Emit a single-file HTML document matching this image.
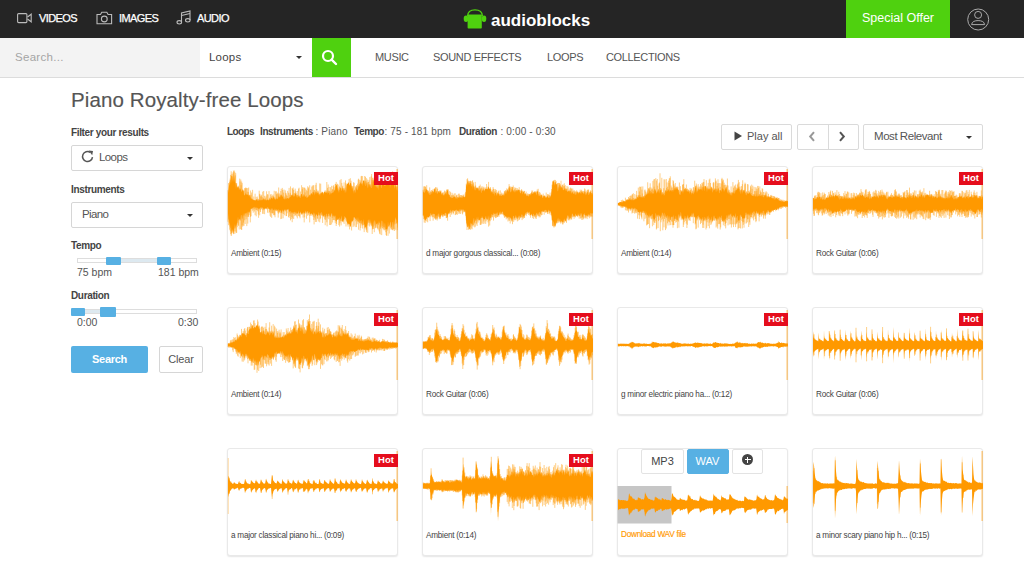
<!DOCTYPE html>
<html><head><meta charset="utf-8">
<style>
*{margin:0;padding:0;box-sizing:border-box}
html,body{width:1024px;height:565px;overflow:hidden;background:#fff;font-family:"Liberation Sans",sans-serif;position:relative}
.abs{position:absolute;white-space:nowrap}
#top{position:absolute;left:0;top:0;width:1024px;height:38px;background:#252525}
.tn{position:absolute;top:10.5px;color:#fff;font-size:11px;line-height:14px;letter-spacing:-0.6px;-webkit-text-stroke:0.25px #fff}
#logo{position:absolute;left:491px;top:9.5px;color:#fff;font-size:17px;font-weight:bold;line-height:22px}
#offer{position:absolute;left:846px;top:0;width:104px;height:38px;background:#4fd10f;color:#fff;font-size:12.5px;line-height:36px;text-align:center}
#srow{position:absolute;left:0;top:38px;width:1024px;height:40px;border-bottom:1px solid #dcdcdc;background:#fff}
#sinput{position:absolute;left:0;top:0;width:200px;height:39px;background:#f3f3f3;color:#a5a5a5;font-size:11.5px;line-height:39px;padding-left:15px;letter-spacing:0.3px}
#ssel{position:absolute;left:209px;top:0;height:39px;color:#444;font-size:11.5px;line-height:39px;letter-spacing:0.2px}
#sbtn{position:absolute;left:312px;top:0;width:39px;height:39px;background:#4fd10f}
.nav{position:absolute;top:12px;color:#555;font-size:11px;line-height:14px;letter-spacing:-0.35px}
.caret{position:absolute;width:0;height:0;border-left:3px solid transparent;border-right:3px solid transparent;border-top:3px solid #333}
#title{position:absolute;left:71px;top:88px;color:#555;font-size:20.5px;line-height:24px;letter-spacing:0.1px;-webkit-text-stroke:0.15px #555}
.h{position:absolute;left:71px;color:#444;font-size:10px;font-weight:bold;line-height:12px;letter-spacing:-0.35px}
.sel{position:absolute;left:71px;width:132px;height:26px;border:1px solid #d6d6d6;border-radius:2px;background:#fff}
.sel span{position:absolute;top:4px;font-size:11.5px;line-height:14px;color:#555;letter-spacing:-0.6px}
.track{position:absolute;height:5px;border:1px solid #ddd;background:#fff}
.rng{position:absolute;height:3px;background:#dde9f0}
.hdl{position:absolute;height:8px;background:#57b0e3;border-radius:1px}
.sv{position:absolute;font-size:10.5px;line-height:12px;color:#555}
.btn{position:absolute;height:27px;border-radius:2px;font-size:12px;line-height:26px;text-align:center}
.bcx{position:absolute;top:126px;font-size:10px;line-height:12px;color:#555;white-space:nowrap}
.bcx b{color:#444;letter-spacing:-0.4px}
.tb{position:absolute;top:124px;height:26px;border:1px solid #dadada;border-radius:2px;background:#fff;font-size:11px;line-height:22px;color:#555}
.card{position:absolute;width:171px;height:108px;border-radius:3px;background:#fff;border:1px solid #e9e9e9;box-shadow:0 1px 1.5px rgba(0,0,0,0.10)}
.wf{position:absolute;left:-1px;top:-1px}
.hot{position:absolute;right:-1px;top:5px;width:24.5px;height:13px;background:#e50d1c;color:#fff;font-weight:bold;font-size:9.5px;line-height:11.5px;text-align:center;padding-left:0.5px;letter-spacing:0.1px}
.lbl{position:absolute;left:3px;top:82px;font-size:8.2px;line-height:10px;color:#444;white-space:nowrap;letter-spacing:-0.25px}
.dl{color:#ff9900;-webkit-text-stroke:0.15px #ff9900;top:81px}
.fmt{position:absolute;top:0px;height:25px;border:1px solid #e3e3e3;border-radius:2px;background:#fff;font-size:11px;line-height:23px;text-align:center;color:#444}
.mp3{left:23px;width:43px}
.wav{left:68.5px;width:42px;background:#57b0e3;border-color:#57b0e3;color:#fff}
.plus{left:113.5px;width:31px}
.pl{position:absolute;left:9.5px;top:4px;width:11px;height:11px;border-radius:50%;background:#444}
.pl:before{content:"";position:absolute;left:2.5px;top:4.75px;width:6px;height:1.5px;background:#fff}
.pl:after{content:"";position:absolute;left:4.75px;top:2.5px;width:1.5px;height:6px;background:#fff}
</style></head><body>
<div id="top">
  <!-- video icon -->
  <svg class="abs" style="left:17px;top:12px" width="16" height="12" viewBox="0 0 16 12"><rect x="0.6" y="1.6" width="9.3" height="9" rx="1" fill="none" stroke="#bbb" stroke-width="1.1"/><path d="M10.5 5 L14.2 2.2 V9.8 L10.5 7" fill="none" stroke="#bbb" stroke-width="1.1"/></svg>
  <div class="tn" style="left:39px">VIDEOS</div>
  <!-- camera icon -->
  <svg class="abs" style="left:96px;top:11px" width="17" height="14" viewBox="0 0 17 14"><path d="M1 3.5 H4.5 L5.8 1.2 H10.8 L12.1 3.5 H15.6 V12.8 H1 Z" fill="none" stroke="#bbb" stroke-width="1.1"/><circle cx="8.3" cy="8" r="2.9" fill="none" stroke="#bbb" stroke-width="1.1"/></svg>
  <div class="tn" style="left:119px">IMAGES</div>
  <!-- music icon -->
  <svg class="abs" style="left:176px;top:10px" width="16" height="15" viewBox="0 0 16 15"><path d="M5.5 12 V3 L14 1 V10" fill="none" stroke="#bbb" stroke-width="1.1"/><path d="M5.5 5.5 L14 3.5" stroke="#bbb" stroke-width="1.1"/><ellipse cx="3.3" cy="12.3" rx="2.3" ry="1.7" fill="none" stroke="#bbb" stroke-width="1.1"/><ellipse cx="11.8" cy="10.3" rx="2.3" ry="1.7" fill="none" stroke="#bbb" stroke-width="1.1"/></svg>
  <div class="tn" style="left:197px">AUDIO</div>
  <!-- logo -->
  <svg class="abs" style="left:460px;top:6px" width="30" height="26" viewBox="0 0 30 26"><path d="M7.6,10 C7.8,5.5 10.8,3.9 15,3.9 C19.2,3.9 22.2,5.5 22.4,10" fill="none" stroke="#4fd10f" stroke-width="1.4"/><ellipse cx="6" cy="12.7" rx="2.3" ry="3.3" fill="#4fd10f"/><ellipse cx="24" cy="12.7" rx="2.3" ry="3.3" fill="#4fd10f"/><rect x="7.6" y="8.6" width="14.2" height="13.9" rx="0.8" fill="#4fd10f"/></svg>
  <div id="logo">audioblocks</div>
  <div id="offer">Special Offer</div>
  <svg class="abs" style="left:966px;top:8px" width="24" height="24" viewBox="0 0 24 24"><circle cx="12.2" cy="11.5" r="10.5" fill="none" stroke="#aaa" stroke-width="1"/><circle cx="12.1" cy="6.9" r="3.5" fill="none" stroke="#aaa" stroke-width="1"/><path d="M5.6,16.6 C5.9,13.4 9,12.6 12.1,12.6 C15.2,12.6 18.3,13.4 18.6,16.6 Z" fill="none" stroke="#aaa" stroke-width="1"/></svg>
</div>
<div id="srow">
  <div id="sinput">Search...</div>
  <div id="ssel">Loops</div>
  <div class="caret" style="left:296px;top:18px"></div>
  <div id="sbtn"><svg class="abs" style="left:9px;top:11px" width="18" height="18" viewBox="0 0 18 18"><circle cx="7" cy="7" r="5" fill="none" stroke="#fff" stroke-width="2.2"/><path d="M10.6 10.6 L15 15" stroke="#fff" stroke-width="2.4" stroke-linecap="round"/></svg></div>
  <div class="nav" style="left:375px">MUSIC</div>
  <div class="nav" style="left:433px">SOUND EFFECTS</div>
  <div class="nav" style="left:547px">LOOPS</div>
  <div class="nav" style="left:606px">COLLECTIONS</div>
</div>

<div id="title">Piano Royalty-free Loops</div>
<div class="h" style="top:127px">Filter your results</div>
<div class="sel" style="top:145px"><svg class="abs" style="left:8.8px;top:3.9px" width="13" height="13" viewBox="0 0 13 13"><path d="M11.5,7.2 A5,5 0 1 1 9.2,2.3" fill="none" stroke="#555" stroke-width="1.5"/><path d="M7.6,0.6 L12,0.9 L11.2,5.2 Z" fill="#555"/></svg><span style="left:27px">Loops</span><div class="caret" style="left:115px;top:11px"></div></div>
<div class="h" style="top:184px">Instruments</div>
<div class="sel" style="top:202px"><span style="left:10px">Piano</span><div class="caret" style="left:115px;top:11px"></div></div>
<div class="h" style="top:240px">Tempo</div>
<div class="track" style="left:77px;top:258px;width:120px"></div>
<div class="rng" style="left:121px;top:259px;width:36px"></div>
<div class="hdl" style="left:106px;top:257px;width:15px"></div>
<div class="hdl" style="left:157px;top:257px;width:14px"></div>
<div class="sv" style="left:77px;top:266px">75 bpm</div>
<div class="sv" style="left:158px;top:266px">181 bpm</div>
<div class="h" style="top:290px">Duration</div>
<div class="track" style="left:71px;top:309px;width:126px"></div>
<div class="rng" style="left:85px;top:310px;width:15px"></div>
<div class="hdl" style="left:70.5px;top:308px;width:14.5px"></div>
<div class="hdl" style="left:99.5px;top:306.5px;width:16.5px;height:10px"></div>
<div class="sv" style="left:77px;top:316px">0:00</div>
<div class="sv" style="left:178px;top:316px">0:30</div>
<div class="btn" style="left:71px;top:346px;width:77px;background:#57b0e3;color:#fff;font-weight:bold;font-size:11px;letter-spacing:-0.3px">Search</div>
<div class="btn" style="left:159px;top:346px;width:44px;border:1px solid #d6d6d6;color:#555;line-height:24px;font-size:11px;letter-spacing:-0.2px">Clear</div>

<div class="bcx" style="left:227px"><b style="letter-spacing:-0.6px">Loops</b></div>
<div class="bcx" style="left:260px"><b>Instruments</b></div><div class="bcx" style="left:315.5px;letter-spacing:0.15px">: Piano</div>
<div class="bcx" style="left:354px"><b>Tempo</b></div><div class="bcx" style="left:384.5px;letter-spacing:0.15px">: 75 - 181 bpm</div>
<div class="bcx" style="left:459px"><b>Duration</b></div><div class="bcx" style="left:500.5px;letter-spacing:0.15px">: 0:00 - 0:30</div>
<div class="tb" style="left:721px;width:71px"><svg class="abs" style="left:12px;top:5.8px" width="9" height="10" viewBox="0 0 9 10"><path d="M0.5 0.5 L8 5 L0.5 9.5 Z" fill="#444"/></svg><span style="position:absolute;left:25px">Play all</span></div>
<div class="tb" style="left:797px;width:62px"><div style="position:absolute;left:29.5px;top:0;width:1px;height:24px;background:#dadada"></div><svg class="abs" style="left:9.5px;top:5.5px" width="8" height="11" viewBox="0 0 8 11"><path d="M6 1.2 L2.2 5.5 L6 9.8" fill="none" stroke="#999" stroke-width="2"/></svg><svg class="abs" style="left:40px;top:5.5px" width="8" height="11" viewBox="0 0 8 11"><path d="M2 1.2 L5.8 5.5 L2 9.8" fill="none" stroke="#555" stroke-width="2"/></svg></div>
<div class="tb" style="left:863px;width:120px"><span style="position:absolute;left:10px;font-size:11.5px;letter-spacing:-0.45px">Most Relevant</span><div class="caret" style="left:102px;top:11px"></div></div>

<div class="card" style="left:227px;top:166px"><svg class="wf" width="171" height="109" viewBox="0 0 171 109"><g transform="translate(1,38)"><path d="M0.0,-13.8V17.8M0.6,-21.0V21.2M1.3,-20.4V19.2M1.7,-22.2V25.7M2.3,-24.2V27.3M2.6,-29.1V30.2M3.2,-32.7V31.9M3.6,-28.0V29.2M4.0,-30.1V26.4M4.7,-27.7V27.6M5.1,-31.6V29.0M5.7,-33.2V26.9M6.1,-33.6V27.5M6.8,-32.2V29.9M7.3,-28.6V21.6M7.7,-30.9V27.5M8.2,-20.9V29.0M8.7,-20.8V28.8M9.2,-17.1V23.2M9.7,-17.2V19.3M10.2,-16.5V20.9M10.6,-17.5V22.0M11.2,-16.0V25.5M11.7,-25.4V15.6M12.1,-22.5V16.9M12.8,-24.5V25.0M13.1,-18.8V25.6M13.7,-22.5V26.0M14.1,-20.9V21.3M14.7,-15.1V22.7M15.2,-11.7V21.6M15.6,-13.4V18.6M16.0,-13.3V21.9M16.7,-15.9V16.3M17.2,-15.6V20.0M17.8,-16.6V12.6M18.1,-15.8V15.3M18.8,-16.0V22.1M19.2,-12.4V12.7M19.8,-15.8V19.6M20.3,-11.9V12.8M20.7,-16.5V12.7M21.1,-9.1V11.0M21.6,-8.6V9.2M22.3,-8.5V18.4M22.6,-13.5V12.8M23.1,-9.2V12.2M23.6,-11.5V5.2M24.0,-5.6V4.6M24.6,-14.2V6.7M25.2,-4.1V8.7M25.8,-7.5V5.6M26.3,-3.8V7.5M26.6,-3.8V4.7M27.1,-10.3V11.2M27.7,-3.8V5.8M28.2,-7.1V12.3M28.5,-4.1V6.0M29.3,-7.5V6.4M29.8,-5.4V7.3M30.3,-4.9V10.5M30.6,-4.0V13.8M31.2,-13.3V5.2M31.7,-10.2V11.3M32.1,-9.4V6.2M32.5,-7.6V8.0M33.3,-8.2V4.3M33.6,-9.3V5.1M34.1,-7.0V5.8M34.7,-12.3V9.8M35.2,-6.1V9.9M35.7,-13.0V6.3M36.1,-5.1V5.2M36.6,-8.2V10.2M37.2,-5.2V5.1M37.7,-6.5V4.1M38.0,-8.3V4.1M38.6,-12.7V5.3M39.2,-3.6V5.1M39.5,-9.8V8.7M40.0,-9.5V4.2M40.6,-4.3V4.2M41.0,-12.9V9.1M41.6,-5.9V8.0M42.1,-6.7V11.8M42.7,-9.5V13.0M43.1,-9.9V8.8M43.7,-7.7V13.9M44.2,-5.8V9.1M44.6,-8.5V9.6M45.1,-9.6V9.0M45.6,-7.9V10.9M46.2,-13.2V11.5M46.7,-6.9V10.8M47.0,-5.7V13.3M47.6,-12.6V6.8M48.3,-12.7V7.3M48.6,-9.8V6.7M49.2,-10.4V5.9M49.8,-11.4V8.6M50.2,-9.7V13.6M50.7,-16.5V9.7M51.2,-10.7V7.6M51.7,-7.6V7.9M52.0,-9.6V8.9M52.8,-13.0V15.1M53.2,-15.2V8.8M53.7,-8.4V14.8M54.3,-16.1V9.5M54.7,-14.1V7.4M55.1,-8.4V14.3M55.6,-11.4V10.1M56.0,-14.5V6.8M56.7,-7.4V11.3M57.3,-13.6V7.5M57.8,-11.2V5.6M58.1,-10.5V12.1M58.6,-8.7V12.0M59.2,-8.2V9.3M59.7,-13.1V6.0M60.1,-5.7V5.8M60.6,-11.3V13.0M61.1,-16.1V13.9M61.8,-9.3V11.9M62.2,-11.1V9.6M62.5,-17.6V16.4M63.2,-9.1V15.0M63.8,-9.1V12.9M64.2,-16.0V18.2M64.7,-14.9V14.4M65.2,-16.5V9.7M65.7,-14.0V15.0M66.1,-10.9V9.8M66.8,-10.8V12.1M67.2,-15.4V10.9M67.7,-12.4V11.5M68.1,-11.0V9.5M68.7,-8.7V12.5M69.3,-12.9V14.4M69.6,-9.1V9.9M70.1,-8.4V8.3M70.6,-15.3V11.8M71.1,-16.3V12.2M71.7,-8.5V12.7M72.0,-7.8V14.3M72.6,-12.5V8.3M73.2,-9.3V10.5M73.6,-18.8V10.4M74.3,-14.8V10.6M74.7,-16.8V9.7M75.1,-16.6V13.6M75.7,-9.8V8.7M76.2,-16.1V18.4M76.7,-16.5V13.3M77.1,-11.6V8.3M77.8,-15.4V9.9M78.3,-13.9V8.8M78.5,-8.5V14.7M79.1,-12.9V9.2M79.7,-17.7V11.8M80.3,-15.6V11.1M80.6,-16.7V9.0M81.2,-8.9V9.7M81.7,-18.7V18.4M82.0,-9.3V12.0M82.6,-14.3V10.3M83.2,-10.6V11.9M83.8,-17.3V10.2M84.3,-18.4V10.9M84.5,-11.8V10.4M85.2,-18.6V12.9M85.8,-18.8V16.0M86.1,-13.9V20.4M86.7,-14.1V13.6M87.2,-11.4V15.5M87.8,-19.2V18.0M88.2,-21.2V17.9M88.7,-14.7V10.3M89.3,-12.3V14.2M89.7,-13.3V15.1M90.3,-13.4V17.5M90.5,-11.6V10.8M91.3,-10.3V11.7M91.7,-20.6V18.3M92.2,-10.2V15.2M92.7,-20.3V14.2M93.2,-10.3V10.8M93.8,-10.4V11.6M94.2,-11.1V11.6M94.6,-11.9V18.9M95.3,-10.5V12.0M95.8,-10.8V13.3M96.1,-10.5V12.2M96.7,-10.9V15.4M97.2,-13.8V21.2M97.6,-11.8V15.8M98.0,-12.4V11.8M98.8,-22.0V18.3M99.1,-12.3V22.4M99.5,-16.2V12.2M100.2,-19.5V12.0M100.7,-13.3V15.2M101.1,-17.1V12.6M101.6,-13.2V21.0M102.1,-11.5V11.5M102.5,-16.8V21.0M103.1,-12.9V11.2M103.6,-18.2V20.5M104.2,-14.6V14.0M104.6,-14.7V18.5M105.1,-18.2V16.0M105.7,-18.8V16.1M106.1,-16.8V12.3M106.6,-14.3V16.1M107.2,-20.1V19.2M107.6,-20.1V17.2M108.2,-22.1V22.0M108.6,-17.5V20.0M109.2,-16.2V15.6M109.5,-20.2V15.7M110.2,-19.4V15.9M110.8,-15.3V21.1M111.2,-16.6V16.0M111.6,-17.6V22.6M112.0,-23.8V19.3M112.7,-16.1V17.3M113.1,-24.9V21.4M113.8,-21.1V17.0M114.1,-15.5V17.4M114.7,-18.3V16.5M115.2,-15.8V18.3M115.6,-15.6V14.2M116.1,-21.6V19.9M116.7,-14.1V15.0M117.1,-16.3V16.3M117.5,-23.6V13.9M118.0,-20.8V22.5M118.5,-19.5V17.5M119.0,-17.7V17.7M119.6,-19.2V19.1M120.1,-20.0V22.7M120.6,-21.2V19.0M121.1,-25.0V19.7M121.6,-19.1V25.4M122.3,-25.8V19.2M122.5,-20.4V22.7M123.1,-23.3V18.6M123.6,-17.9V26.5M124.2,-17.7V17.4M124.6,-15.7V16.7M125.1,-17.7V23.1M125.7,-21.9V15.9M126.1,-21.0V21.7M126.8,-13.9V13.8M127.2,-17.7V23.1M127.8,-16.4V17.3M128.1,-17.6V14.5M128.5,-19.0V23.1M129.2,-18.3V20.3M129.5,-20.4V16.8M130.2,-24.4V18.1M130.6,-25.3V25.7M131.3,-18.0V18.6M131.7,-24.2V19.1M132.1,-22.1V26.5M132.8,-23.5V23.9M133.1,-27.8V19.0M133.6,-28.1V19.8M134.1,-20.7V21.3M134.6,-27.9V24.5M135.0,-19.6V21.1M135.8,-20.7V21.2M136.2,-23.6V28.1M136.7,-28.0V24.4M137.1,-22.7V23.3M137.5,-27.2V21.6M138.1,-23.3V21.6M138.6,-25.8V28.2M139.0,-20.9V21.9M139.7,-24.4V28.8M140.0,-21.9V18.9M140.5,-22.1V18.5M141.0,-23.8V21.6M141.8,-26.9V22.6M142.1,-19.1V19.0M142.7,-19.7V20.3M143.1,-27.6V21.3M143.6,-29.9V22.3M144.2,-23.9V30.0M144.6,-26.2V25.2M145.2,-26.3V22.6M145.6,-24.4V24.9M146.3,-23.4V28.2M146.8,-26.6V21.5M147.2,-23.6V24.3M147.7,-26.9V23.8M148.1,-23.3V23.4M148.7,-23.2V18.6M149.2,-20.9V24.1M149.7,-17.7V24.7M150.1,-20.3V25.7M150.8,-28.7V18.6M151.1,-19.4V27.4M151.5,-22.5V29.7M152.3,-20.7V30.5M152.6,-29.4V24.9M153.1,-23.1V23.4M153.7,-25.9V31.1M154.2,-22.8V21.9M154.5,-22.1V24.1M155.2,-27.5V25.4M155.7,-31.2V23.2M156.2,-25.7V26.3M156.6,-31.8V23.4M157.1,-26.4V25.8M157.8,-24.0V28.2M158.1,-27.7V31.1M158.5,-24.4V31.9M159.1,-23.5V23.3M159.6,-26.1V26.6M160.0,-25.2V31.8M160.7,-22.1V22.1M161.3,-22.1V29.5M161.6,-30.5V21.0M162.0,-20.9V22.8M162.6,-20.5V24.3M163.1,-22.5V25.8M163.6,-21.6V24.8M164.1,-25.6V25.6M164.6,-32.6V26.1M165.2,-23.1V26.4M165.6,-23.1V24.9M166.1,-20.5V25.1M166.6,-29.7V27.0M167.1,-20.0V20.2M167.7,-19.8V25.8M168.3,-17.4V19.3M168.7,-17.4V19.5M169.3,-23.1V26.2M169.8,-17.5V23.6M170.1,-19.6V21.2" stroke="#ff9900" stroke-width="0.6" stroke-opacity="0.8" fill="none"/><path d="M0.0,-11.0 L0.5,-14.4 L1.0,-18.3 L1.5,-19.3 L2.0,-26.4 L2.5,-23.4 L3.0,-20.0 L3.5,-28.9 L4.0,-27.5 L4.5,-22.0 L5.0,-32.7 L5.5,-26.1 L6.0,-21.6 L6.5,-28.7 L7.0,-21.5 L7.5,-21.1 L8.0,-14.5 L8.5,-20.7 L9.0,-18.5 L9.5,-16.6 L10.0,-15.7 L10.5,-19.0 L11.0,-13.5 L11.5,-15.5 L12.0,-14.2 L12.5,-15.7 L13.0,-13.8 L13.5,-11.7 L14.0,-13.5 L14.5,-14.1 L15.0,-13.5 L15.5,-13.5 L16.0,-9.0 L16.5,-8.5 L17.0,-9.7 L17.5,-11.5 L18.0,-8.4 L18.5,-10.5 L19.0,-9.0 L19.5,-9.6 L20.0,-9.4 L20.5,-8.7 L21.0,-7.5 L21.5,-9.7 L22.0,-6.2 L22.5,-7.6 L23.0,-4.4 L23.5,-5.7 L24.0,-5.0 L24.5,-4.3 L25.0,-4.9 L25.5,-3.8 L26.0,-3.9 L26.5,-3.6 L27.0,-3.6 L27.5,-3.2 L28.0,-4.4 L28.5,-4.5 L29.0,-4.8 L29.5,-3.8 L30.0,-3.1 L30.5,-3.1 L31.0,-4.9 L31.5,-3.3 L32.0,-4.8 L32.5,-3.8 L33.0,-3.5 L33.5,-4.3 L34.0,-3.5 L34.5,-4.6 L35.0,-4.4 L35.5,-5.5 L36.0,-3.6 L36.5,-4.2 L37.0,-5.0 L37.5,-3.6 L38.0,-4.6 L38.5,-3.4 L39.0,-3.8 L39.5,-4.6 L40.0,-4.4 L40.5,-3.5 L41.0,-3.8 L41.5,-4.9 L42.0,-4.5 L42.5,-4.5 L43.0,-5.5 L43.5,-6.5 L44.0,-5.7 L44.5,-4.4 L45.0,-7.1 L45.5,-6.8 L46.0,-6.0 L46.5,-5.2 L47.0,-4.6 L47.5,-4.5 L48.0,-5.1 L48.5,-5.3 L49.0,-6.6 L49.5,-4.7 L50.0,-5.3 L50.5,-8.4 L51.0,-6.5 L51.5,-7.3 L52.0,-6.3 L52.5,-8.6 L53.0,-9.3 L53.5,-9.6 L54.0,-7.0 L54.5,-7.4 L55.0,-7.6 L55.5,-5.0 L56.0,-5.6 L56.5,-5.6 L57.0,-4.1 L57.5,-6.6 L58.0,-4.4 L58.5,-5.8 L59.0,-5.6 L59.5,-6.0 L60.0,-5.7 L60.5,-5.2 L61.0,-5.6 L61.5,-6.5 L62.0,-7.6 L62.5,-7.1 L63.0,-7.2 L63.5,-9.6 L64.0,-7.7 L64.5,-9.1 L65.0,-9.7 L65.5,-7.3 L66.0,-7.8 L66.5,-7.6 L67.0,-9.9 L67.5,-10.3 L68.0,-10.3 L68.5,-8.4 L69.0,-6.3 L69.5,-6.7 L70.0,-9.8 L70.5,-7.1 L71.0,-7.9 L71.5,-6.9 L72.0,-6.3 L72.5,-6.0 L73.0,-9.7 L73.5,-10.0 L74.0,-9.6 L74.5,-7.3 L75.0,-7.4 L75.5,-9.5 L76.0,-6.6 L76.5,-9.5 L77.0,-8.1 L77.5,-7.5 L78.0,-6.8 L78.5,-5.8 L79.0,-7.5 L79.5,-6.3 L80.0,-6.8 L80.5,-7.5 L81.0,-8.3 L81.5,-9.5 L82.0,-6.9 L82.5,-9.5 L83.0,-9.4 L83.5,-11.1 L84.0,-10.2 L84.5,-8.9 L85.0,-10.8 L85.5,-12.8 L86.0,-11.5 L86.5,-8.5 L87.0,-13.0 L87.5,-12.2 L88.0,-9.6 L88.5,-12.2 L89.0,-11.2 L89.5,-10.5 L90.0,-11.8 L90.5,-10.2 L91.0,-8.7 L91.5,-10.3 L92.0,-7.8 L92.5,-11.2 L93.0,-10.2 L93.5,-11.4 L94.0,-12.7 L94.5,-11.0 L95.0,-12.5 L95.5,-8.5 L96.0,-12.2 L96.5,-11.8 L97.0,-13.4 L97.5,-10.7 L98.0,-11.3 L98.5,-10.9 L99.0,-14.8 L99.5,-9.9 L100.0,-11.5 L100.5,-10.7 L101.0,-13.3 L101.5,-9.9 L102.0,-8.8 L102.5,-11.9 L103.0,-9.5 L103.5,-11.1 L104.0,-11.1 L104.5,-11.3 L105.0,-11.7 L105.5,-11.4 L106.0,-14.2 L106.5,-13.5 L107.0,-12.5 L107.5,-17.4 L108.0,-18.0 L108.5,-19.5 L109.0,-19.2 L109.5,-15.3 L110.0,-13.6 L110.5,-13.7 L111.0,-10.9 L111.5,-14.3 L112.0,-14.1 L112.5,-16.4 L113.0,-16.3 L113.5,-13.1 L114.0,-13.8 L114.5,-18.0 L115.0,-14.7 L115.5,-13.8 L116.0,-13.0 L116.5,-16.3 L117.0,-10.5 L117.5,-13.9 L118.0,-11.1 L118.5,-15.2 L119.0,-20.0 L119.5,-20.1 L120.0,-21.5 L120.5,-21.4 L121.0,-20.3 L121.5,-18.0 L122.0,-20.0 L122.5,-21.3 L123.0,-21.0 L123.5,-18.6 L124.0,-14.8 L124.5,-18.8 L125.0,-12.3 L125.5,-13.9 L126.0,-10.1 L126.5,-15.1 L127.0,-12.8 L127.5,-10.7 L128.0,-17.7 L128.5,-14.1 L129.0,-15.9 L129.5,-13.4 L130.0,-14.5 L130.5,-19.8 L131.0,-16.4 L131.5,-20.3 L132.0,-20.2 L132.5,-21.8 L133.0,-20.0 L133.5,-19.6 L134.0,-21.8 L134.5,-17.5 L135.0,-23.6 L135.5,-22.9 L136.0,-24.0 L136.5,-18.5 L137.0,-23.5 L137.5,-17.9 L138.0,-18.0 L138.5,-20.3 L139.0,-22.5 L139.5,-17.2 L140.0,-15.4 L140.5,-20.1 L141.0,-19.6 L141.5,-20.0 L142.0,-16.9 L142.5,-18.4 L143.0,-16.1 L143.5,-16.1 L144.0,-25.6 L144.5,-16.3 L145.0,-24.4 L145.5,-22.1 L146.0,-24.2 L146.5,-22.5 L147.0,-19.3 L147.5,-18.6 L148.0,-16.7 L148.5,-18.4 L149.0,-15.6 L149.5,-16.2 L150.0,-20.6 L150.5,-13.6 L151.0,-21.4 L151.5,-17.5 L152.0,-23.1 L152.5,-23.4 L153.0,-16.6 L153.5,-15.7 L154.0,-23.0 L154.5,-20.4 L155.0,-21.9 L155.5,-27.4 L156.0,-18.2 L156.5,-18.0 L157.0,-18.9 L157.5,-17.8 L158.0,-26.2 L158.5,-27.4 L159.0,-22.1 L159.5,-28.2 L160.0,-19.5 L160.5,-26.6 L161.0,-19.7 L161.5,-21.4 L162.0,-15.8 L162.5,-19.6 L163.0,-24.6 L163.5,-22.5 L164.0,-23.6 L164.5,-23.9 L165.0,-26.5 L165.5,-24.8 L166.0,-23.1 L166.5,-14.9 L167.0,-17.5 L167.5,-21.0 L168.0,-16.2 L168.5,-13.3 L169.0,-18.5 L169.5,-13.1 L170.0,-14.0 L170.0,20.2 L169.5,17.4 L169.0,20.0 L168.5,15.5 L168.0,15.5 L167.5,13.0 L167.0,16.6 L166.5,21.6 L166.0,15.2 L165.5,24.2 L165.0,17.7 L164.5,18.6 L164.0,23.3 L163.5,23.1 L163.0,19.9 L162.5,17.4 L162.0,18.8 L161.5,21.0 L161.0,22.4 L160.5,22.8 L160.0,17.4 L159.5,24.5 L159.0,24.9 L158.5,25.2 L158.0,25.5 L157.5,25.0 L157.0,18.6 L156.5,20.7 L156.0,27.3 L155.5,17.5 L155.0,26.1 L154.5,17.7 L154.0,16.5 L153.5,17.0 L153.0,24.3 L152.5,22.2 L152.0,18.2 L151.5,19.4 L151.0,16.5 L150.5,20.2 L150.0,21.4 L149.5,18.5 L149.0,20.2 L148.5,19.5 L148.0,22.3 L147.5,16.5 L147.0,20.2 L146.5,16.3 L146.0,16.7 L145.5,19.2 L145.0,25.9 L144.5,23.4 L144.0,18.4 L143.5,21.8 L143.0,16.9 L142.5,19.3 L142.0,15.0 L141.5,20.0 L141.0,15.1 L140.5,16.9 L140.0,15.4 L139.5,19.8 L139.0,21.3 L138.5,25.2 L138.0,26.7 L137.5,22.5 L137.0,23.7 L136.5,19.7 L136.0,21.2 L135.5,15.0 L135.0,21.1 L134.5,16.5 L134.0,22.5 L133.5,15.9 L133.0,16.4 L132.5,16.7 L132.0,20.8 L131.5,15.2 L131.0,17.7 L130.5,17.2 L130.0,12.9 L129.5,18.8 L129.0,12.9 L128.5,16.2 L128.0,15.8 L127.5,14.2 L127.0,14.8 L126.5,12.9 L126.0,13.1 L125.5,13.8 L125.0,17.4 L124.5,16.2 L124.0,18.5 L123.5,16.3 L123.0,21.5 L122.5,21.9 L122.0,22.9 L121.5,20.1 L121.0,20.2 L120.5,20.4 L120.0,19.0 L119.5,21.6 L119.0,17.6 L118.5,15.1 L118.0,13.9 L117.5,12.7 L117.0,13.3 L116.5,11.8 L116.0,15.3 L115.5,16.5 L115.0,18.1 L114.5,17.6 L114.0,16.3 L113.5,11.6 L113.0,14.3 L112.5,15.0 L112.0,17.0 L111.5,13.3 L111.0,14.1 L110.5,15.0 L110.0,15.1 L109.5,15.9 L109.0,12.7 L108.5,17.9 L108.0,16.4 L107.5,12.2 L107.0,11.3 L106.5,12.3 L106.0,13.7 L105.5,11.1 L105.0,12.5 L104.5,11.9 L104.0,9.3 L103.5,9.6 L103.0,9.9 L102.5,13.2 L102.0,12.3 L101.5,11.3 L101.0,8.9 L100.5,10.4 L100.0,9.8 L99.5,12.8 L99.0,15.1 L98.5,9.7 L98.0,9.7 L97.5,13.1 L97.0,13.6 L96.5,10.4 L96.0,11.3 L95.5,11.8 L95.0,12.7 L94.5,9.1 L94.0,11.8 L93.5,7.9 L93.0,8.5 L92.5,9.3 L92.0,11.0 L91.5,11.3 L91.0,8.5 L90.5,8.3 L90.0,12.1 L89.5,11.8 L89.0,11.4 L88.5,9.7 L88.0,11.6 L87.5,12.8 L87.0,9.1 L86.5,10.9 L86.0,8.3 L85.5,9.4 L85.0,12.6 L84.5,9.9 L84.0,10.1 L83.5,8.7 L83.0,10.6 L82.5,10.2 L82.0,9.3 L81.5,7.8 L81.0,8.3 L80.5,9.9 L80.0,6.7 L79.5,7.5 L79.0,8.1 L78.5,8.2 L78.0,6.5 L77.5,7.3 L77.0,9.4 L76.5,8.4 L76.0,10.4 L75.5,7.6 L75.0,9.9 L74.5,8.5 L74.0,9.3 L73.5,9.7 L73.0,9.3 L72.5,7.2 L72.0,9.2 L71.5,9.3 L71.0,9.4 L70.5,6.3 L70.0,9.2 L69.5,9.1 L69.0,9.8 L68.5,9.6 L68.0,7.2 L67.5,9.0 L67.0,8.3 L66.5,7.6 L66.0,10.2 L65.5,8.3 L65.0,8.1 L64.5,9.2 L64.0,7.8 L63.5,9.8 L63.0,7.2 L62.5,6.8 L62.0,8.7 L61.5,7.2 L61.0,7.9 L60.5,4.7 L60.0,5.1 L59.5,4.9 L59.0,6.0 L58.5,6.8 L58.0,4.6 L57.5,6.6 L57.0,6.4 L56.5,5.2 L56.0,6.5 L55.5,8.2 L55.0,5.4 L54.5,6.0 L54.0,6.9 L53.5,9.4 L53.0,7.3 L52.5,6.2 L52.0,6.6 L51.5,6.1 L51.0,9.3 L50.5,5.4 L50.0,5.3 L49.5,6.7 L49.0,6.7 L48.5,4.8 L48.0,6.0 L47.5,6.2 L47.0,4.2 L46.5,5.7 L46.0,6.5 L45.5,5.4 L45.0,6.8 L44.5,4.5 L44.0,4.5 L43.5,4.4 L43.0,6.4 L42.5,6.0 L42.0,4.5 L41.5,5.4 L41.0,4.9 L40.5,5.0 L40.0,3.1 L39.5,3.2 L39.0,3.4 L38.5,4.4 L38.0,4.8 L37.5,4.5 L37.0,4.0 L36.5,5.7 L36.0,4.1 L35.5,5.5 L35.0,4.1 L34.5,3.8 L34.0,3.3 L33.5,3.8 L33.0,3.2 L32.5,3.6 L32.0,4.3 L31.5,4.7 L31.0,4.1 L30.5,4.7 L30.0,4.9 L29.5,3.5 L29.0,4.4 L28.5,3.5 L28.0,3.3 L27.5,4.4 L27.0,2.6 L26.5,3.2 L26.0,3.5 L25.5,3.3 L25.0,4.5 L24.5,3.6 L24.0,4.9 L23.5,4.3 L23.0,4.8 L22.5,5.0 L22.0,7.7 L21.5,8.1 L21.0,7.2 L20.5,8.9 L20.0,7.3 L19.5,8.9 L19.0,11.2 L18.5,8.7 L18.0,8.8 L17.5,10.0 L17.0,8.9 L16.5,12.7 L16.0,8.6 L15.5,12.6 L15.0,10.3 L14.5,14.1 L14.0,15.2 L13.5,11.3 L13.0,10.8 L12.5,15.6 L12.0,15.7 L11.5,14.5 L11.0,15.9 L10.5,16.6 L10.0,12.6 L9.5,16.9 L9.0,19.1 L8.5,21.3 L8.0,22.0 L7.5,25.3 L7.0,19.5 L6.5,24.3 L6.0,25.1 L5.5,30.2 L5.0,29.9 L4.5,26.4 L4.0,24.9 L3.5,32.6 L3.0,20.2 L2.5,24.6 L2.0,23.5 L1.5,20.0 L1.0,15.8 L0.5,15.4 L0.0,9.6Z" fill="#ff9900"/></g><rect x="169.6" y="3" width="1" height="70" fill="#ff9900" fill-opacity="0.7"/></svg><div class="hot">Hot</div><div class="lbl">Ambient (0:15)</div></div>
<div class="card" style="left:422px;top:166px"><svg class="wf" width="171" height="109" viewBox="0 0 171 109"><g transform="translate(1,38)"><path d="M0.1,-14.1V11.6M0.7,-17.6V15.1M1.2,-14.8V18.5M1.5,-17.7V13.1M2.2,-17.6V18.9M2.5,-17.1V15.9M3.1,-14.9V14.6M3.7,-18.8V17.4M4.1,-13.4V14.1M4.7,-14.1V18.3M5.0,-12.3V12.8M5.6,-13.1V13.7M6.1,-11.0V13.3M6.7,-16.6V11.2M7.1,-12.2V17.1M7.7,-12.6V12.6M8.3,-13.9V11.2M8.7,-12.0V10.8M9.2,-13.8V13.4M9.6,-12.9V12.7M10.1,-15.1V16.7M10.7,-12.2V13.0M11.3,-14.5V14.6M11.7,-15.7V13.9M12.3,-15.4V14.8M12.7,-17.0V15.8M13.1,-16.5V15.5M13.7,-12.7V14.5M14.2,-16.4V16.5M14.6,-15.0V14.6M15.1,-12.8V12.2M15.7,-12.8V13.2M16.3,-12.6V15.2M16.7,-13.5V14.3M17.3,-13.4V12.2M17.5,-11.3V14.9M18.1,-13.4V11.2M18.8,-10.6V12.3M19.1,-11.4V10.4M19.5,-11.4V12.5M20.0,-11.0V13.2M20.8,-12.1V11.8M21.1,-10.2V10.6M21.7,-13.5V12.0M22.1,-12.9V11.3M22.8,-11.7V11.9M23.2,-12.2V14.1M23.6,-14.5V14.0M24.0,-14.1V13.5M24.6,-14.8V16.7M25.3,-14.5V10.5M25.6,-9.7V9.8M26.2,-9.0V10.0M26.8,-12.9V8.6M27.2,-7.4V13.0M27.6,-11.8V8.8M28.3,-7.4V8.7M28.5,-8.9V10.6M29.1,-11.2V7.5M29.6,-9.2V8.5M30.1,-7.9V10.4M30.5,-9.2V9.3M31.2,-10.5V6.9M31.8,-6.7V6.6M32.2,-10.7V11.1M32.8,-7.1V10.8M33.2,-8.0V6.1M33.5,-9.1V10.0M34.2,-9.3V11.0M34.7,-7.0V6.4M35.2,-6.6V9.9M35.8,-10.2V6.8M36.1,-10.4V8.3M36.5,-8.5V9.7M37.1,-6.6V6.8M37.6,-8.9V10.0M38.1,-8.8V7.3M38.6,-8.8V6.4M39.2,-7.6V9.4M39.6,-8.2V10.4M40.0,-9.3V6.9M40.7,-9.3V8.4M41.1,-7.2V8.0M41.6,-7.3V7.7M42.1,-10.6V8.3M42.7,-12.0V11.8M43.3,-20.3V16.4M43.5,-18.8V19.4M44.0,-24.8V26.0M44.6,-25.7V22.7M45.1,-22.1V22.1M45.6,-23.3V25.6M46.1,-22.9V25.6M46.7,-21.0V25.0M47.1,-22.7V23.0M47.6,-20.2V25.8M48.3,-19.9V24.5M48.7,-22.5V19.7M49.1,-22.9V25.3M49.6,-23.8V20.5M50.3,-17.7V22.5M50.5,-21.6V21.0M51.1,-16.9V19.6M51.8,-17.5V23.4M52.2,-22.1V22.6M52.7,-18.4V16.8M53.1,-15.9V19.1M53.6,-15.7V20.4M54.1,-16.4V22.0M54.7,-15.5V15.0M55.1,-16.7V18.6M55.8,-15.5V16.1M56.1,-18.1V14.5M56.7,-17.8V14.6M57.2,-19.4V20.9M57.7,-15.4V20.9M58.2,-16.0V20.5M58.8,-16.8V13.8M59.0,-18.0V19.3M59.7,-13.4V13.4M60.1,-16.5V20.0M60.8,-17.3V17.4M61.2,-14.2V19.6M61.8,-16.3V13.5M62.1,-14.3V14.2M62.7,-14.1V19.9M63.0,-16.8V17.3M63.6,-20.0V14.7M64.0,-15.2V14.6M64.6,-15.1V15.5M65.0,-17.6V18.4M65.6,-22.1V22.6M66.0,-14.5V16.9M66.7,-15.3V21.5M67.2,-15.3V17.2M67.5,-16.9V13.7M68.2,-14.5V15.8M68.6,-12.4V13.5M69.2,-12.0V12.7M69.6,-14.3V13.3M70.1,-16.9V10.9M70.5,-15.2V16.6M71.2,-15.0V10.2M71.5,-12.5V12.7M72.2,-13.5V13.4M72.6,-14.9V14.1M73.0,-11.9V12.0M73.6,-13.9V13.7M74.1,-10.3V13.0M74.5,-10.4V12.9M75.3,-12.6V12.3M75.8,-13.4V10.7M76.0,-10.3V12.8M76.8,-9.6V10.5M77.3,-13.6V9.6M77.7,-9.7V10.7M78.1,-9.8V10.0M78.7,-11.5V9.6M79.1,-10.5V10.7M79.8,-9.1V10.2M80.3,-10.6V10.0M80.6,-9.6V11.6M81.3,-12.6V13.3M81.7,-12.8V13.9M82.2,-13.5V12.0M82.6,-13.8V11.7M83.2,-12.5V15.4M83.8,-15.7V13.0M84.1,-13.1V14.3M84.7,-13.7V14.3M85.0,-14.5V17.5M85.8,-16.3V16.5M86.1,-19.9V14.8M86.6,-17.7V16.8M87.2,-16.2V19.5M87.6,-17.4V14.5M88.2,-14.7V15.4M88.7,-17.2V17.4M89.1,-17.1V17.3M89.5,-17.0V20.2M90.2,-18.5V14.6M90.7,-13.8V17.9M91.1,-16.9V16.1M91.6,-15.3V13.7M92.1,-13.8V16.3M92.7,-16.4V13.3M93.0,-15.9V15.8M93.8,-13.6V14.7M94.3,-15.8V17.4M94.6,-12.4V14.9M95.1,-12.2V16.7M95.6,-13.0V12.2M96.2,-16.8V15.9M96.6,-14.0V15.4M97.1,-13.8V14.2M97.7,-13.2V13.2M98.3,-12.3V13.2M98.7,-12.4V13.4M99.1,-12.8V16.1M99.7,-13.3V13.5M100.2,-12.0V14.9M100.5,-11.9V11.4M101.2,-13.2V13.9M101.6,-13.0V13.9M102.1,-11.0V11.0M102.8,-10.0V10.2M103.2,-12.4V12.1M103.8,-9.2V9.3M104.1,-9.6V9.5M104.8,-10.8V9.6M105.1,-9.6V8.6M105.7,-9.6V11.0M106.2,-10.0V9.4M106.8,-9.9V11.6M107.3,-10.6V10.3M107.6,-10.4V13.7M108.2,-10.4V10.6M108.8,-13.5V10.8M109.1,-10.5V11.9M109.7,-13.4V14.1M110.1,-12.0V11.9M110.7,-11.3V15.0M111.1,-11.8V12.3M111.6,-12.8V12.4M112.1,-11.2V13.2M112.7,-10.6V14.3M113.2,-12.6V15.0M113.8,-12.2V12.9M114.2,-14.5V11.5M114.7,-12.8V10.4M115.2,-15.2V12.0M115.8,-9.9V12.1M116.1,-12.2V13.4M116.8,-11.8V12.1M117.2,-10.8V13.2M117.5,-9.2V9.2M118.2,-9.4V8.4M118.5,-8.2V11.3M119.1,-9.1V11.0M119.7,-7.7V7.4M120.2,-10.4V7.5M120.7,-7.8V7.4M121.2,-8.9V10.7M121.5,-7.9V7.6M122.2,-8.2V8.3M122.5,-7.2V8.7M123.2,-11.4V8.0M123.8,-7.3V8.7M124.2,-7.0V8.1M124.6,-9.9V9.8M125.0,-9.4V10.0M125.7,-9.6V7.7M126.3,-8.8V8.8M126.7,-8.3V10.3M127.1,-11.4V8.9M127.5,-7.8V7.7M128.0,-8.8V11.2M128.6,-15.0V11.5M129.1,-19.4V16.5M129.5,-19.1V21.9M130.0,-22.3V21.7M130.7,-23.6V22.4M131.0,-21.9V23.6M131.8,-24.2V22.5M132.2,-24.0V22.6M132.5,-20.5V21.0M133.1,-22.9V18.9M133.6,-19.8V18.5M134.2,-20.2V19.3M134.5,-21.0V17.3M135.1,-16.6V18.8M135.6,-21.1V16.8M136.0,-21.0V17.8M136.5,-20.8V16.9M137.3,-19.8V18.0M137.7,-17.8V17.3M138.0,-23.3V17.2M138.8,-17.2V16.9M139.1,-18.7V18.5M139.6,-19.1V20.4M140.1,-19.7V20.3M140.6,-17.8V16.1M141.3,-20.7V16.1M141.5,-17.8V18.7M142.2,-18.9V17.0M142.5,-15.8V17.0M143.0,-15.0V17.5M143.5,-15.4V18.9M144.0,-18.0V15.1M144.8,-15.4V14.3M145.1,-17.3V16.4M145.8,-13.5V16.2M146.3,-13.6V15.0M146.8,-15.5V16.3M147.0,-12.7V14.3M147.6,-16.4V14.5M148.2,-15.6V15.5M148.7,-15.3V15.4M149.1,-11.9V13.5M149.8,-15.5V12.9M150.2,-11.3V11.8M150.7,-13.1V12.9M151.1,-13.9V14.8M151.6,-12.1V11.8M152.0,-13.1V12.7M152.6,-12.4V13.4M153.2,-11.9V12.2M153.7,-13.7V11.7M154.0,-12.5V11.5M154.6,-12.1V13.1M155.1,-11.2V10.9M155.7,-11.1V11.4M156.2,-12.4V14.7M156.7,-10.8V12.3M157.2,-14.4V11.4M157.5,-12.6V14.6M158.2,-13.3V14.0M158.7,-14.3V15.8M159.1,-12.0V12.9M159.7,-12.8V15.8M160.1,-13.0V13.7M160.6,-11.5V15.2M161.1,-13.1V13.8M161.6,-15.6V10.9M162.2,-14.7V14.6M162.8,-11.9V13.2M163.0,-12.8V13.9M163.6,-11.1V11.9M164.1,-13.8V15.1M164.7,-14.4V11.8M165.2,-13.7V12.9M165.6,-14.6V11.6M166.3,-11.2V14.3M166.8,-12.2V11.5M167.1,-12.1V13.3M167.7,-13.8V12.0M168.1,-12.7V13.1M168.7,-11.0V12.0M169.2,-9.8V12.8M169.8,-13.8V9.5M170.2,-11.6V10.2" stroke="#ff9900" stroke-width="0.6" stroke-opacity="0.8" fill="none"/><path d="M0.0,-13.5 L0.5,-11.9 L1.0,-11.5 L1.5,-11.1 L2.0,-12.2 L2.5,-13.0 L3.0,-16.1 L3.5,-14.2 L4.0,-14.0 L4.5,-11.2 L5.0,-14.6 L5.5,-9.4 L6.0,-12.1 L6.5,-9.5 L7.0,-8.8 L7.5,-9.8 L8.0,-12.7 L8.5,-10.9 L9.0,-9.6 L9.5,-13.1 L10.0,-12.7 L10.5,-11.3 L11.0,-13.4 L11.5,-15.4 L12.0,-14.5 L12.5,-11.6 L13.0,-10.9 L13.5,-13.7 L14.0,-9.9 L14.5,-10.4 L15.0,-11.2 L15.5,-13.1 L16.0,-10.9 L16.5,-11.3 L17.0,-12.6 L17.5,-12.5 L18.0,-12.0 L18.5,-9.4 L19.0,-9.6 L19.5,-9.9 L20.0,-8.2 L20.5,-9.4 L21.0,-8.3 L21.5,-9.2 L22.0,-10.3 L22.5,-11.4 L23.0,-9.3 L23.5,-10.2 L24.0,-13.1 L24.5,-14.0 L25.0,-13.0 L25.5,-9.6 L26.0,-9.3 L26.5,-9.2 L27.0,-6.5 L27.5,-7.3 L28.0,-5.7 L28.5,-5.9 L29.0,-6.3 L29.5,-6.1 L30.0,-6.2 L30.5,-6.8 L31.0,-7.2 L31.5,-7.8 L32.0,-7.1 L32.5,-6.3 L33.0,-4.9 L33.5,-6.2 L34.0,-5.1 L34.5,-6.0 L35.0,-7.6 L35.5,-5.9 L36.0,-6.2 L36.5,-7.1 L37.0,-5.9 L37.5,-7.0 L38.0,-6.3 L38.5,-6.4 L39.0,-6.6 L39.5,-5.9 L40.0,-7.8 L40.5,-7.4 L41.0,-7.0 L41.5,-6.7 L42.0,-6.6 L42.5,-8.7 L43.0,-16.1 L43.5,-21.1 L44.0,-16.8 L44.5,-24.0 L45.0,-21.4 L45.5,-20.8 L46.0,-18.8 L46.5,-20.5 L47.0,-23.3 L47.5,-23.3 L48.0,-17.7 L48.5,-17.4 L49.0,-20.5 L49.5,-19.1 L50.0,-14.7 L50.5,-21.2 L51.0,-16.3 L51.5,-13.6 L52.0,-19.9 L52.5,-13.5 L53.0,-14.0 L53.5,-16.9 L54.0,-15.6 L54.5,-15.4 L55.0,-16.5 L55.5,-14.6 L56.0,-12.7 L56.5,-13.9 L57.0,-13.5 L57.5,-15.7 L58.0,-11.7 L58.5,-10.9 L59.0,-15.9 L59.5,-13.5 L60.0,-12.8 L60.5,-16.0 L61.0,-13.3 L61.5,-12.5 L62.0,-14.5 L62.5,-15.7 L63.0,-14.4 L63.5,-15.1 L64.0,-15.3 L64.5,-14.2 L65.0,-16.9 L65.5,-16.4 L66.0,-17.1 L66.5,-14.5 L67.0,-15.7 L67.5,-14.7 L68.0,-10.8 L68.5,-12.5 L69.0,-13.1 L69.5,-11.8 L70.0,-9.8 L70.5,-10.5 L71.0,-12.4 L71.5,-7.8 L72.0,-11.1 L72.5,-10.9 L73.0,-10.7 L73.5,-9.0 L74.0,-8.0 L74.5,-11.4 L75.0,-11.5 L75.5,-9.6 L76.0,-11.0 L76.5,-7.9 L77.0,-8.7 L77.5,-8.1 L78.0,-8.8 L78.5,-8.0 L79.0,-7.9 L79.5,-9.6 L80.0,-8.6 L80.5,-9.0 L81.0,-7.9 L81.5,-9.4 L82.0,-12.3 L82.5,-10.9 L83.0,-9.8 L83.5,-11.8 L84.0,-14.9 L84.5,-14.2 L85.0,-12.3 L85.5,-12.7 L86.0,-17.9 L86.5,-16.6 L87.0,-13.3 L87.5,-11.5 L88.0,-12.1 L88.5,-12.9 L89.0,-16.9 L89.5,-15.1 L90.0,-13.1 L90.5,-12.2 L91.0,-14.5 L91.5,-12.3 L92.0,-11.2 L92.5,-13.1 L93.0,-13.7 L93.5,-14.1 L94.0,-12.1 L94.5,-14.5 L95.0,-13.4 L95.5,-14.4 L96.0,-14.6 L96.5,-12.7 L97.0,-11.4 L97.5,-10.4 L98.0,-11.3 L98.5,-14.4 L99.0,-14.9 L99.5,-9.5 L100.0,-11.0 L100.5,-13.3 L101.0,-10.8 L101.5,-9.6 L102.0,-10.0 L102.5,-10.8 L103.0,-9.0 L103.5,-7.7 L104.0,-7.9 L104.5,-8.4 L105.0,-7.8 L105.5,-7.6 L106.0,-8.1 L106.5,-10.2 L107.0,-8.1 L107.5,-9.6 L108.0,-8.7 L108.5,-11.9 L109.0,-11.6 L109.5,-9.9 L110.0,-9.9 L110.5,-11.0 L111.0,-12.0 L111.5,-10.9 L112.0,-12.8 L112.5,-12.2 L113.0,-10.2 L113.5,-8.5 L114.0,-13.0 L114.5,-12.5 L115.0,-12.1 L115.5,-9.1 L116.0,-7.6 L116.5,-8.9 L117.0,-7.8 L117.5,-7.3 L118.0,-9.0 L118.5,-9.5 L119.0,-7.7 L119.5,-6.2 L120.0,-5.7 L120.5,-8.4 L121.0,-7.2 L121.5,-8.3 L122.0,-7.2 L122.5,-6.0 L123.0,-6.3 L123.5,-6.3 L124.0,-7.4 L124.5,-8.2 L125.0,-6.8 L125.5,-5.7 L126.0,-7.5 L126.5,-6.0 L127.0,-6.4 L127.5,-7.1 L128.0,-8.6 L128.5,-11.4 L129.0,-13.5 L129.5,-22.2 L130.0,-23.6 L130.5,-23.0 L131.0,-21.7 L131.5,-18.2 L132.0,-22.1 L132.5,-22.0 L133.0,-18.7 L133.5,-20.2 L134.0,-19.6 L134.5,-12.9 L135.0,-12.7 L135.5,-16.0 L136.0,-19.3 L136.5,-19.2 L137.0,-15.1 L137.5,-19.4 L138.0,-15.5 L138.5,-17.5 L139.0,-16.1 L139.5,-16.2 L140.0,-13.6 L140.5,-14.5 L141.0,-13.8 L141.5,-15.7 L142.0,-15.2 L142.5,-12.8 L143.0,-15.5 L143.5,-13.6 L144.0,-12.7 L144.5,-12.0 L145.0,-13.2 L145.5,-13.0 L146.0,-11.9 L146.5,-13.5 L147.0,-11.1 L147.5,-13.3 L148.0,-13.2 L148.5,-10.4 L149.0,-10.7 L149.5,-13.4 L150.0,-10.3 L150.5,-10.1 L151.0,-10.5 L151.5,-10.9 L152.0,-8.9 L152.5,-9.5 L153.0,-11.8 L153.5,-9.0 L154.0,-13.0 L154.5,-10.8 L155.0,-12.6 L155.5,-9.6 L156.0,-12.3 L156.5,-11.5 L157.0,-11.2 L157.5,-11.1 L158.0,-9.8 L158.5,-12.3 L159.0,-12.4 L159.5,-11.2 L160.0,-10.8 L160.5,-10.5 L161.0,-9.6 L161.5,-12.2 L162.0,-12.6 L162.5,-8.6 L163.0,-10.4 L163.5,-9.1 L164.0,-11.2 L164.5,-11.7 L165.0,-12.6 L165.5,-8.9 L166.0,-9.3 L166.5,-10.2 L167.0,-11.5 L167.5,-12.9 L168.0,-10.9 L168.5,-11.1 L169.0,-8.4 L169.5,-10.3 L170.0,-11.1 L170.0,8.7 L169.5,9.5 L169.0,9.1 L168.5,10.0 L168.0,8.7 L167.5,8.9 L167.0,11.6 L166.5,11.2 L166.0,9.4 L165.5,11.2 L165.0,10.0 L164.5,12.3 L164.0,12.5 L163.5,11.1 L163.0,10.9 L162.5,11.7 L162.0,11.3 L161.5,8.8 L161.0,11.1 L160.5,9.7 L160.0,11.2 L159.5,13.9 L159.0,11.2 L158.5,9.7 L158.0,9.1 L157.5,9.7 L157.0,11.8 L156.5,12.3 L156.0,9.0 L155.5,12.6 L155.0,9.0 L154.5,12.2 L154.0,11.7 L153.5,11.6 L153.0,10.7 L152.5,9.6 L152.0,11.7 L151.5,13.0 L151.0,11.0 L150.5,12.4 L150.0,10.4 L149.5,10.0 L149.0,9.2 L148.5,13.7 L148.0,11.2 L147.5,14.6 L147.0,13.3 L146.5,14.9 L146.0,11.1 L145.5,13.6 L145.0,11.5 L144.5,11.6 L144.0,13.4 L143.5,13.7 L143.0,16.1 L142.5,16.5 L142.0,17.9 L141.5,14.7 L141.0,14.7 L140.5,19.0 L140.0,17.7 L139.5,17.7 L139.0,18.4 L138.5,16.3 L138.0,20.3 L137.5,18.4 L137.0,14.5 L136.5,16.1 L136.0,19.4 L135.5,13.5 L135.0,16.3 L134.5,14.1 L134.0,17.9 L133.5,20.6 L133.0,15.2 L132.5,21.6 L132.0,21.9 L131.5,21.7 L131.0,18.5 L130.5,17.0 L130.0,23.6 L129.5,16.1 L129.0,16.6 L128.5,11.0 L128.0,8.6 L127.5,7.0 L127.0,6.9 L126.5,6.5 L126.0,6.9 L125.5,5.5 L125.0,8.1 L124.5,7.6 L124.0,8.2 L123.5,6.8 L123.0,5.8 L122.5,6.0 L122.0,6.0 L121.5,6.0 L121.0,7.7 L120.5,8.1 L120.0,6.1 L119.5,7.4 L119.0,7.9 L118.5,7.2 L118.0,6.8 L117.5,10.7 L117.0,9.9 L116.5,8.1 L116.0,8.1 L115.5,11.3 L115.0,8.3 L114.5,11.3 L114.0,9.0 L113.5,8.8 L113.0,10.7 L112.5,10.4 L112.0,12.8 L111.5,10.7 L111.0,10.9 L110.5,9.6 L110.0,10.3 L109.5,12.7 L109.0,10.9 L108.5,9.6 L108.0,10.4 L107.5,11.2 L107.0,11.0 L106.5,7.4 L106.0,8.3 L105.5,9.0 L105.0,7.4 L104.5,7.8 L104.0,8.1 L103.5,7.9 L103.0,11.6 L102.5,8.6 L102.0,9.5 L101.5,12.4 L101.0,11.3 L100.5,12.7 L100.0,13.9 L99.5,11.3 L99.0,10.3 L98.5,10.5 L98.0,12.0 L97.5,14.5 L97.0,11.5 L96.5,13.0 L96.0,10.9 L95.5,13.4 L95.0,14.0 L94.5,13.4 L94.0,13.1 L93.5,14.3 L93.0,11.2 L92.5,11.8 L92.0,14.5 L91.5,14.8 L91.0,12.7 L90.5,11.9 L90.0,11.7 L89.5,16.9 L89.0,13.9 L88.5,16.7 L88.0,13.8 L87.5,13.9 L87.0,13.0 L86.5,13.8 L86.0,12.4 L85.5,13.0 L85.0,13.7 L84.5,12.3 L84.0,14.6 L83.5,12.6 L83.0,12.6 L82.5,13.1 L82.0,11.6 L81.5,10.9 L81.0,11.1 L80.5,10.5 L80.0,8.1 L79.5,7.5 L79.0,8.1 L78.5,8.6 L78.0,10.3 L77.5,6.9 L77.0,9.0 L76.5,8.0 L76.0,11.3 L75.5,10.8 L75.0,11.6 L74.5,8.8 L74.0,8.3 L73.5,10.0 L73.0,9.2 L72.5,9.7 L72.0,10.3 L71.5,9.9 L71.0,8.4 L70.5,9.2 L70.0,11.3 L69.5,10.9 L69.0,9.7 L68.5,10.4 L68.0,13.8 L67.5,14.5 L67.0,11.0 L66.5,16.3 L66.0,15.8 L65.5,11.3 L65.0,15.4 L64.5,15.8 L64.0,11.3 L63.5,17.0 L63.0,13.0 L62.5,11.9 L62.0,15.1 L61.5,14.9 L61.0,16.2 L60.5,14.6 L60.0,14.6 L59.5,13.4 L59.0,11.7 L58.5,14.3 L58.0,13.5 L57.5,14.4 L57.0,17.1 L56.5,15.4 L56.0,16.7 L55.5,15.9 L55.0,12.2 L54.5,18.1 L54.0,12.8 L53.5,15.2 L53.0,17.1 L52.5,14.7 L52.0,17.5 L51.5,19.5 L51.0,13.7 L50.5,14.7 L50.0,16.8 L49.5,21.0 L49.0,22.5 L48.5,18.9 L48.0,19.9 L47.5,18.5 L47.0,24.4 L46.5,24.9 L46.0,21.2 L45.5,24.0 L45.0,20.1 L44.5,23.5 L44.0,22.8 L43.5,19.1 L43.0,14.8 L42.5,8.5 L42.0,5.8 L41.5,7.6 L41.0,6.4 L40.5,5.8 L40.0,5.3 L39.5,6.1 L39.0,5.2 L38.5,5.6 L38.0,6.2 L37.5,5.1 L37.0,7.5 L36.5,5.4 L36.0,5.2 L35.5,7.9 L35.0,6.7 L34.5,6.4 L34.0,7.1 L33.5,5.3 L33.0,5.9 L32.5,6.5 L32.0,6.2 L31.5,7.9 L31.0,5.9 L30.5,6.3 L30.0,7.1 L29.5,6.3 L29.0,5.9 L28.5,7.8 L28.0,6.9 L27.5,5.6 L27.0,7.0 L26.5,8.8 L26.0,9.4 L25.5,8.7 L25.0,9.4 L24.5,13.7 L24.0,12.4 L23.5,9.8 L23.0,9.2 L22.5,9.3 L22.0,8.4 L21.5,10.8 L21.0,11.9 L20.5,9.9 L20.0,10.2 L19.5,11.8 L19.0,8.6 L18.5,11.5 L18.0,10.9 L17.5,13.0 L17.0,13.4 L16.5,12.9 L16.0,9.3 L15.5,9.9 L15.0,12.7 L14.5,9.7 L14.0,15.1 L13.5,12.0 L13.0,11.0 L12.5,14.8 L12.0,10.4 L11.5,10.1 L11.0,10.1 L10.5,10.3 L10.0,9.2 L9.5,10.8 L9.0,9.4 L8.5,12.5 L8.0,9.0 L7.5,9.6 L7.0,11.7 L6.5,12.1 L6.0,13.0 L5.5,13.2 L5.0,12.9 L4.5,12.9 L4.0,12.4 L3.5,15.0 L3.0,14.8 L2.5,17.0 L2.0,16.1 L1.5,15.4 L1.0,13.6 L0.5,10.5 L0.0,12.5Z" fill="#ff9900"/></g><rect x="169.6" y="3" width="1" height="70" fill="#ff9900" fill-opacity="0.7"/></svg><div class="hot">Hot</div><div class="lbl">d major gorgous classical... (0:08)</div></div>
<div class="card" style="left:617px;top:166px"><svg class="wf" width="171" height="109" viewBox="0 0 171 109"><g transform="translate(1,38)"><path d="M0.2,-0.9V1.7M0.6,-1.1V1.4M1.0,-1.2V1.4M1.5,-1.8V2.2M1.9,-2.1V1.5M2.3,-1.8V2.0M2.7,-1.8V3.4M3.3,-4.0V2.8M3.9,-2.4V4.1M4.3,-2.7V3.6M4.6,-4.3V2.4M5.2,-2.2V3.8M5.5,-3.5V2.3M6.1,-3.0V2.8M6.5,-2.9V2.6M6.8,-2.7V2.7M7.4,-6.3V6.3M7.9,-3.1V3.5M8.2,-4.4V3.8M8.8,-4.4V6.6M9.2,-3.9V6.4M9.5,-5.0V5.0M9.9,-4.1V6.6M10.5,-7.0V8.5M10.8,-4.2V5.2M11.3,-6.0V4.4M11.8,-8.0V5.6M12.2,-5.8V6.9M12.8,-8.4V5.0M13.1,-8.3V6.2M13.7,-5.0V4.7M14.0,-9.4V9.5M14.5,-9.8V8.7M15.0,-6.2V4.4M15.3,-10.8V6.5M15.9,-6.0V9.0M16.3,-4.7V5.3M16.8,-10.0V9.8M17.4,-4.7V7.5M17.7,-5.5V8.9M18.2,-8.9V6.4M18.6,-13.1V9.2M19.0,-6.3V7.4M19.6,-7.5V14.7M20.1,-9.0V8.2M20.3,-16.4V7.7M20.8,-8.3V11.2M21.4,-12.6V15.1M21.6,-17.3V8.3M22.1,-8.9V11.3M22.5,-17.1V8.2M23.2,-17.5V12.5M23.6,-7.4V13.6M23.9,-14.4V15.3M24.3,-10.5V9.0M24.8,-17.6V8.3M25.2,-7.6V9.0M25.9,-8.0V17.3M26.4,-8.5V9.3M26.8,-13.7V9.1M27.0,-14.5V15.0M27.6,-12.4V11.2M28.0,-9.8V13.8M28.6,-10.5V21.4M29.0,-11.7V11.3M29.3,-13.5V20.8M29.7,-21.7V20.2M30.4,-16.0V20.0M30.6,-14.8V12.1M31.2,-15.3V13.7M31.6,-16.6V24.2M32.2,-20.7V12.3M32.7,-10.8V14.5M33.0,-16.6V11.8M33.6,-14.5V15.3M34.0,-15.7V14.5M34.4,-14.7V22.3M34.9,-23.1V14.7M35.4,-13.4V17.5M35.8,-24.6V21.1M36.1,-17.4V15.9M36.6,-25.0V18.6M36.9,-15.1V19.0M37.4,-14.2V13.8M37.8,-25.9V17.2M38.4,-23.5V25.5M38.8,-11.7V24.5M39.3,-25.0V13.1M39.7,-18.3V11.6M40.1,-11.6V24.1M40.5,-15.0V17.1M41.1,-20.5V16.1M41.4,-21.5V12.3M42.0,-30.7V12.5M42.3,-16.0V27.2M43.0,-15.3V18.3M43.4,-14.4V11.3M43.8,-26.2V16.2M44.3,-11.6V14.8M44.8,-11.7V26.3M45.2,-10.9V11.8M45.7,-15.8V17.5M46.0,-24.7V23.3M46.5,-11.4V15.0M46.9,-24.5V12.7M47.5,-12.7V26.1M47.8,-13.4V12.7M48.3,-25.0V24.5M48.6,-16.1V13.9M49.1,-21.6V15.7M49.5,-17.3V19.3M50.0,-14.9V21.5M50.6,-23.3V17.1M51.0,-21.0V18.0M51.3,-25.6V18.4M51.9,-25.9V21.3M52.3,-27.7V15.9M52.9,-14.0V21.0M53.2,-18.4V13.4M53.7,-16.5V17.3M54.2,-16.5V17.9M54.7,-13.2V21.1M55.0,-23.9V23.7M55.5,-22.8V21.1M55.9,-20.0V21.0M56.3,-18.4V15.0M56.9,-16.4V14.5M57.3,-21.0V14.8M57.7,-16.6V18.7M58.1,-17.4V14.9M58.6,-14.4V18.0M59.2,-17.6V16.3M59.4,-15.5V24.2M59.9,-17.0V16.6M60.4,-14.2V17.6M60.9,-13.7V23.7M61.4,-21.5V12.4M61.8,-12.5V14.4M62.4,-17.8V11.4M62.7,-13.8V12.4M63.2,-13.8V16.2M63.6,-12.0V14.7M64.1,-11.8V12.2M64.5,-19.2V15.7M65.1,-19.5V15.1M65.3,-20.0V23.0M65.8,-24.8V20.6M66.3,-14.9V18.2M66.8,-14.8V14.7M67.2,-14.5V14.2M67.5,-16.1V16.8M68.2,-14.9V19.6M68.4,-19.5V14.3M68.9,-15.1V24.0M69.3,-15.4V20.8M69.9,-14.5V13.8M70.3,-14.4V13.5M70.8,-13.9V16.5M71.2,-13.4V12.2M71.6,-12.6V16.0M72.1,-16.1V17.0M72.6,-13.7V12.7M72.9,-14.4V11.3M73.6,-15.5V13.3M73.8,-11.1V12.5M74.5,-13.4V13.2M74.8,-12.4V10.1M75.3,-16.5V19.2M75.8,-17.0V12.8M76.2,-13.4V12.4M76.7,-23.3V13.0M77.2,-14.1V20.4M77.5,-17.8V19.3M77.9,-18.4V25.3M78.3,-20.5V24.6M78.9,-18.5V16.6M79.3,-14.3V15.5M79.8,-16.6V14.7M80.2,-19.9V23.6M80.7,-14.6V13.2M81.1,-17.4V13.7M81.5,-13.6V16.3M82.0,-17.3V14.9M82.5,-19.9V20.1M82.9,-14.9V14.5M83.3,-18.5V19.0M83.9,-21.1V17.3M84.3,-16.9V15.1M84.7,-20.6V23.9M85.1,-22.1V20.7M85.8,-21.9V24.0M86.0,-24.9V16.3M86.6,-17.8V15.7M86.9,-17.7V16.8M87.4,-16.2V15.3M88.0,-17.1V25.5M88.3,-23.8V15.9M88.7,-15.6V23.9M89.2,-15.4V18.3M89.7,-17.7V15.7M90.2,-21.1V22.1M90.5,-15.2V15.0M91.2,-24.4V18.8M91.4,-15.1V24.3M91.9,-25.4V15.9M92.5,-21.0V15.7M92.9,-17.4V21.0M93.3,-15.7V19.7M93.6,-16.7V15.5M94.1,-15.9V18.4M94.6,-15.2V17.2M95.2,-20.7V16.5M95.4,-21.9V16.2M96.0,-21.4V14.5M96.4,-12.7V16.8M96.9,-16.0V16.3M97.4,-25.6V13.8M97.9,-22.3V15.1M98.1,-23.4V23.5M98.8,-14.8V17.0M99.0,-18.0V22.4M99.7,-20.8V24.6M100.0,-24.7V14.3M100.4,-15.2V20.1M100.8,-20.8V13.6M101.4,-13.9V20.2M101.9,-21.0V19.7M102.2,-17.2V25.5M102.7,-13.7V23.4M103.2,-20.5V14.3M103.7,-24.9V15.9M104.0,-26.2V17.9M104.5,-22.6V17.1M104.9,-24.7V17.3M105.3,-23.8V21.3M105.9,-18.8V16.6M106.2,-21.3V17.9M106.9,-19.0V22.2M107.3,-19.4V19.9M107.7,-16.2V24.4M108.1,-15.4V19.0M108.6,-15.3V15.7M108.9,-18.9V13.9M109.4,-25.5V16.4M110.0,-18.5V21.4M110.4,-14.4V15.0M110.7,-12.6V12.3M111.3,-14.2V20.5M111.7,-10.5V15.0M112.1,-12.4V10.5M112.5,-10.7V20.3M113.1,-17.6V16.3M113.4,-11.5V23.5M113.9,-11.7V20.5M114.5,-11.1V13.5M114.9,-21.9V20.2M115.5,-16.3V23.1M115.7,-11.2V11.5M116.3,-18.5V13.4M116.8,-17.5V20.4M117.0,-13.3V13.9M117.6,-19.5V23.1M118.1,-16.6V20.3M118.6,-15.6V18.8M118.9,-14.2V19.8M119.4,-19.5V18.2M120.0,-20.6V25.4M120.4,-24.1V24.2M120.9,-17.1V15.6M121.2,-21.8V18.9M121.7,-15.1V24.0M122.1,-17.5V15.9M122.6,-13.9V24.5M123.1,-13.3V12.7M123.5,-17.9V12.9M123.9,-14.3V17.0M124.3,-19.8V24.4M124.7,-23.7V18.3M125.3,-12.5V20.8M125.7,-14.1V17.9M126.0,-13.7V23.7M126.7,-19.7V14.3M127.0,-21.4V19.6M127.6,-20.2V11.3M128.0,-11.1V13.7M128.5,-12.2V19.4M128.8,-12.8V10.5M129.4,-11.3V18.3M129.6,-20.0V15.3M130.1,-19.5V15.2M130.7,-13.0V23.0M131.2,-11.3V11.5M131.6,-11.2V18.3M131.9,-13.7V20.8M132.5,-18.3V13.0M132.8,-16.7V14.6M133.3,-10.9V13.0M133.7,-19.4V13.4M134.1,-15.1V11.0M134.8,-18.3V14.4M135.2,-9.6V10.0M135.6,-9.6V16.4M136.1,-17.1V13.0M136.6,-12.9V11.5M136.8,-10.0V11.7M137.3,-12.8V15.0M137.9,-17.0V18.2M138.2,-15.6V17.0M138.8,-12.9V9.2M139.1,-14.8V9.2M139.8,-18.1V9.9M140.2,-17.8V11.6M140.6,-15.9V9.5M141.1,-9.4V17.4M141.4,-10.0V9.3M141.8,-17.6V12.9M142.4,-13.5V10.5M142.7,-11.7V9.3M143.3,-11.7V11.4M143.7,-9.2V12.6M144.1,-15.7V9.9M144.7,-15.2V10.9M145.1,-9.0V10.8M145.5,-12.0V14.6M146.0,-8.9V12.3M146.4,-8.7V9.0M147.0,-12.2V11.2M147.3,-10.8V14.7M147.7,-9.0V11.6M148.2,-12.7V8.1M148.8,-8.2V9.1M149.0,-11.6V10.6M149.6,-7.3V8.1M150.0,-7.6V10.0M150.5,-10.2V7.0M150.9,-7.0V8.2M151.3,-7.7V10.8M151.9,-6.9V10.8M152.2,-7.0V9.0M152.6,-8.7V7.4M153.2,-9.1V8.3M153.6,-8.0V8.1M154.1,-8.3V6.5M154.5,-6.1V6.4M155.1,-7.9V7.0M155.3,-5.9V7.9M155.8,-8.0V5.8M156.3,-7.2V5.6M156.6,-7.5V5.7M157.1,-6.3V5.9M157.8,-5.9V7.2M158.0,-7.1V5.5M158.6,-5.5V5.4M158.9,-5.6V5.4M159.3,-6.8V4.9M159.9,-5.3V5.2M160.3,-6.0V6.3M160.8,-6.1V4.2M161.1,-5.7V4.8M161.6,-3.8V4.1M162.3,-4.8V3.4M162.7,-3.2V4.7M163.2,-3.5V4.9M163.4,-4.3V3.3M164.1,-4.2V3.7M164.3,-3.2V3.0M164.9,-2.3V4.0M165.2,-4.2V2.8M165.8,-2.3V2.5M166.3,-3.9V2.5M166.7,-2.8V2.4M167.0,-2.7V3.0M167.5,-2.7V3.8M167.9,-3.7V3.1M168.4,-2.6V2.6M168.8,-3.5V2.7M169.3,-2.5V2.5M169.8,-2.7V2.5" stroke="#ff9900" stroke-width="0.6" stroke-opacity="0.8" fill="none"/><path d="M0.0,-0.9 L0.5,-0.9 L1.0,-1.2 L1.5,-1.0 L2.0,-1.8 L2.5,-1.9 L3.0,-1.5 L3.5,-2.1 L4.0,-1.5 L4.5,-1.6 L5.0,-2.0 L5.5,-2.8 L6.0,-2.9 L6.5,-2.0 L7.0,-2.1 L7.5,-2.7 L8.0,-2.5 L8.5,-3.9 L9.0,-4.3 L9.5,-3.5 L10.0,-3.9 L10.5,-4.2 L11.0,-4.5 L11.5,-4.4 L12.0,-5.1 L12.5,-4.1 L13.0,-4.6 L13.5,-3.4 L14.0,-4.6 L14.5,-4.5 L15.0,-3.3 L15.5,-4.2 L16.0,-4.1 L16.5,-5.0 L17.0,-3.6 L17.5,-5.8 L18.0,-4.7 L18.5,-4.9 L19.0,-5.4 L19.5,-6.9 L20.0,-6.8 L20.5,-6.0 L21.0,-9.5 L21.5,-7.1 L22.0,-7.0 L22.5,-7.6 L23.0,-6.1 L23.5,-6.7 L24.0,-6.9 L24.5,-6.0 L25.0,-7.8 L25.5,-7.2 L26.0,-6.1 L26.5,-6.4 L27.0,-9.0 L27.5,-7.4 L28.0,-9.7 L28.5,-9.0 L29.0,-9.4 L29.5,-10.0 L30.0,-11.6 L30.5,-11.3 L31.0,-9.5 L31.5,-13.7 L32.0,-13.6 L32.5,-13.0 L33.0,-8.9 L33.5,-12.6 L34.0,-11.3 L34.5,-10.8 L35.0,-9.5 L35.5,-11.2 L36.0,-10.0 L36.5,-13.9 L37.0,-14.8 L37.5,-12.5 L38.0,-13.2 L38.5,-10.3 L39.0,-11.3 L39.5,-13.9 L40.0,-10.7 L40.5,-13.9 L41.0,-13.7 L41.5,-10.3 L42.0,-14.3 L42.5,-13.7 L43.0,-13.3 L43.5,-8.3 L44.0,-12.6 L44.5,-9.0 L45.0,-9.9 L45.5,-10.1 L46.0,-8.1 L46.5,-9.2 L47.0,-9.3 L47.5,-14.5 L48.0,-12.9 L48.5,-11.9 L49.0,-14.4 L49.5,-12.7 L50.0,-12.8 L50.5,-14.7 L51.0,-13.7 L51.5,-11.9 L52.0,-14.7 L52.5,-12.8 L53.0,-14.1 L53.5,-12.2 L54.0,-13.9 L54.5,-14.2 L55.0,-11.5 L55.5,-14.8 L56.0,-13.2 L56.5,-16.7 L57.0,-13.4 L57.5,-16.3 L58.0,-14.0 L58.5,-16.4 L59.0,-16.9 L59.5,-15.3 L60.0,-14.6 L60.5,-14.0 L61.0,-10.5 L61.5,-9.4 L62.0,-9.2 L62.5,-9.1 L63.0,-11.9 L63.5,-12.8 L64.0,-13.6 L64.5,-12.9 L65.0,-10.1 L65.5,-14.0 L66.0,-11.8 L66.5,-17.6 L67.0,-13.1 L67.5,-16.5 L68.0,-11.7 L68.5,-14.6 L69.0,-12.9 L69.5,-12.6 L70.0,-12.4 L70.5,-12.7 L71.0,-11.8 L71.5,-10.0 L72.0,-13.2 L72.5,-11.5 L73.0,-11.9 L73.5,-8.9 L74.0,-11.8 L74.5,-10.3 L75.0,-11.0 L75.5,-9.6 L76.0,-12.3 L76.5,-11.0 L77.0,-16.6 L77.5,-16.0 L78.0,-18.1 L78.5,-13.2 L79.0,-11.1 L79.5,-13.3 L80.0,-12.7 L80.5,-15.1 L81.0,-16.0 L81.5,-13.7 L82.0,-15.6 L82.5,-14.0 L83.0,-15.4 L83.5,-13.4 L84.0,-17.7 L84.5,-12.6 L85.0,-16.4 L85.5,-18.4 L86.0,-13.2 L86.5,-13.4 L87.0,-17.0 L87.5,-18.3 L88.0,-17.9 L88.5,-14.4 L89.0,-11.7 L89.5,-17.0 L90.0,-13.4 L90.5,-15.9 L91.0,-13.6 L91.5,-15.0 L92.0,-15.9 L92.5,-14.7 L93.0,-12.7 L93.5,-16.4 L94.0,-17.4 L94.5,-11.2 L95.0,-12.6 L95.5,-14.5 L96.0,-13.4 L96.5,-14.7 L97.0,-14.9 L97.5,-14.8 L98.0,-11.4 L98.5,-13.4 L99.0,-16.3 L99.5,-12.3 L100.0,-15.1 L100.5,-16.5 L101.0,-10.9 L101.5,-10.7 L102.0,-14.0 L102.5,-13.5 L103.0,-13.4 L103.5,-11.9 L104.0,-16.4 L104.5,-15.6 L105.0,-14.7 L105.5,-14.9 L106.0,-12.1 L106.5,-13.7 L107.0,-14.4 L107.5,-14.8 L108.0,-17.6 L108.5,-17.2 L109.0,-12.2 L109.5,-10.4 L110.0,-13.4 L110.5,-9.5 L111.0,-11.6 L111.5,-11.7 L112.0,-8.6 L112.5,-8.9 L113.0,-10.9 L113.5,-9.3 L114.0,-8.1 L114.5,-12.8 L115.0,-10.2 L115.5,-11.3 L116.0,-13.6 L116.5,-10.0 L117.0,-11.1 L117.5,-13.3 L118.0,-14.5 L118.5,-13.5 L119.0,-14.1 L119.5,-15.4 L120.0,-16.0 L120.5,-14.9 L121.0,-18.0 L121.5,-11.4 L122.0,-14.2 L122.5,-11.8 L123.0,-9.5 L123.5,-14.7 L124.0,-14.5 L124.5,-10.1 L125.0,-13.1 L125.5,-13.9 L126.0,-11.6 L126.5,-14.8 L127.0,-11.4 L127.5,-11.3 L128.0,-8.5 L128.5,-9.0 L129.0,-10.1 L129.5,-10.5 L130.0,-11.1 L130.5,-10.3 L131.0,-10.0 L131.5,-12.8 L132.0,-10.0 L132.5,-10.7 L133.0,-8.9 L133.5,-8.7 L134.0,-8.2 L134.5,-8.3 L135.0,-8.0 L135.5,-7.9 L136.0,-7.5 L136.5,-9.2 L137.0,-6.9 L137.5,-8.6 L138.0,-6.9 L138.5,-8.5 L139.0,-11.2 L139.5,-7.3 L140.0,-7.7 L140.5,-8.6 L141.0,-7.3 L141.5,-8.2 L142.0,-8.9 L142.5,-8.0 L143.0,-7.8 L143.5,-9.2 L144.0,-6.8 L144.5,-10.6 L145.0,-6.5 L145.5,-6.9 L146.0,-6.7 L146.5,-9.4 L147.0,-7.4 L147.5,-8.4 L148.0,-9.9 L148.5,-6.0 L149.0,-8.0 L149.5,-5.8 L150.0,-8.2 L150.5,-6.6 L151.0,-7.6 L151.5,-5.8 L152.0,-7.7 L152.5,-7.0 L153.0,-6.3 L153.5,-5.7 L154.0,-6.3 L154.5,-5.1 L155.0,-6.3 L155.5,-5.4 L156.0,-4.6 L156.5,-4.2 L157.0,-6.1 L157.5,-4.2 L158.0,-6.1 L158.5,-6.1 L159.0,-4.9 L159.5,-5.3 L160.0,-4.2 L160.5,-4.0 L161.0,-3.2 L161.5,-3.0 L162.0,-3.8 L162.5,-2.5 L163.0,-3.2 L163.5,-2.1 L164.0,-3.1 L164.5,-2.4 L165.0,-2.4 L165.5,-2.5 L166.0,-1.9 L166.5,-1.9 L167.0,-2.0 L167.5,-3.1 L168.0,-3.1 L168.5,-2.5 L169.0,-2.9 L169.5,-2.6 L170.0,-2.9 L170.0,2.2 L169.5,2.8 L169.0,2.7 L168.5,2.2 L168.0,2.1 L167.5,2.1 L167.0,1.9 L166.5,2.7 L166.0,1.9 L165.5,2.2 L165.0,2.2 L164.5,2.2 L164.0,2.2 L163.5,2.4 L163.0,3.1 L162.5,2.7 L162.0,3.1 L161.5,3.0 L161.0,4.1 L160.5,5.2 L160.0,3.5 L159.5,4.3 L159.0,6.0 L158.5,6.0 L158.0,5.6 L157.5,4.6 L157.0,5.9 L156.5,5.4 L156.0,6.2 L155.5,5.7 L155.0,6.6 L154.5,6.8 L154.0,5.6 L153.5,7.5 L153.0,6.5 L152.5,8.3 L152.0,8.0 L151.5,7.7 L151.0,8.4 L150.5,6.4 L150.0,5.7 L149.5,6.5 L149.0,9.3 L148.5,7.1 L148.0,10.0 L147.5,9.7 L147.0,10.8 L146.5,10.5 L146.0,6.8 L145.5,7.2 L145.0,6.6 L144.5,8.9 L144.0,9.3 L143.5,8.0 L143.0,10.2 L142.5,7.8 L142.0,11.1 L141.5,10.6 L141.0,10.5 L140.5,7.6 L140.0,9.8 L139.5,9.0 L139.0,7.8 L138.5,6.8 L138.0,8.4 L137.5,9.9 L137.0,8.9 L136.5,7.2 L136.0,7.8 L135.5,7.2 L135.0,9.1 L134.5,8.3 L134.0,9.8 L133.5,11.6 L133.0,7.8 L132.5,11.1 L132.0,10.1 L131.5,11.8 L131.0,8.9 L130.5,11.8 L130.0,9.4 L129.5,9.9 L129.0,11.2 L128.5,8.8 L128.0,8.6 L127.5,9.1 L127.0,13.3 L126.5,14.4 L126.0,14.5 L125.5,14.0 L125.0,15.1 L124.5,14.5 L124.0,13.4 L123.5,11.1 L123.0,12.3 L122.5,11.0 L122.0,10.3 L121.5,16.0 L121.0,17.5 L120.5,15.8 L120.0,17.2 L119.5,11.7 L119.0,12.2 L118.5,13.8 L118.0,13.8 L117.5,9.0 L117.0,11.7 L116.5,13.1 L116.0,12.0 L115.5,11.6 L115.0,11.1 L114.5,13.1 L114.0,12.2 L113.5,12.1 L113.0,9.0 L112.5,10.7 L112.0,9.9 L111.5,10.9 L111.0,12.0 L110.5,10.8 L110.0,10.2 L109.5,14.7 L109.0,11.0 L108.5,11.8 L108.0,14.3 L107.5,15.8 L107.0,14.3 L106.5,17.8 L106.0,15.7 L105.5,18.7 L105.0,14.0 L104.5,17.1 L104.0,16.6 L103.5,11.2 L103.0,12.4 L102.5,14.1 L102.0,13.3 L101.5,11.9 L101.0,16.3 L100.5,14.9 L100.0,11.9 L99.5,15.6 L99.0,15.5 L98.5,16.1 L98.0,14.0 L97.5,13.9 L97.0,16.2 L96.5,11.3 L96.0,13.3 L95.5,11.6 L95.0,15.3 L94.5,17.1 L94.0,17.6 L93.5,12.2 L93.0,14.0 L92.5,15.9 L92.0,18.8 L91.5,12.9 L91.0,14.4 L90.5,11.0 L90.0,15.0 L89.5,13.1 L89.0,11.7 L88.5,16.6 L88.0,13.7 L87.5,13.4 L87.0,18.2 L86.5,12.9 L86.0,12.8 L85.5,17.6 L85.0,16.1 L84.5,12.7 L84.0,14.2 L83.5,15.8 L83.0,16.4 L82.5,13.5 L82.0,15.5 L81.5,12.9 L81.0,12.7 L80.5,10.9 L80.0,12.5 L79.5,11.8 L79.0,14.4 L78.5,12.8 L78.0,16.0 L77.5,13.8 L77.0,12.2 L76.5,13.9 L76.0,10.7 L75.5,9.2 L75.0,8.4 L74.5,10.0 L74.0,12.7 L73.5,8.6 L73.0,13.3 L72.5,11.3 L72.0,12.7 L71.5,13.2 L71.0,13.9 L70.5,15.6 L70.0,10.3 L69.5,12.3 L69.0,12.7 L68.5,15.5 L68.0,12.2 L67.5,12.3 L67.0,14.8 L66.5,11.3 L66.0,16.5 L65.5,15.4 L65.0,14.9 L64.5,14.3 L64.0,14.3 L63.5,11.9 L63.0,8.2 L62.5,8.2 L62.0,13.7 L61.5,9.7 L61.0,14.6 L60.5,10.1 L60.0,11.3 L59.5,15.8 L59.0,16.3 L58.5,15.4 L58.0,11.6 L57.5,12.6 L57.0,17.1 L56.5,17.1 L56.0,13.2 L55.5,10.6 L55.0,13.4 L54.5,12.7 L54.0,12.2 L53.5,13.0 L53.0,12.8 L52.5,15.7 L52.0,15.9 L51.5,13.3 L51.0,11.5 L50.5,15.8 L50.0,11.3 L49.5,11.6 L49.0,14.0 L48.5,12.2 L48.0,11.7 L47.5,9.8 L47.0,14.6 L46.5,9.2 L46.0,8.4 L45.5,11.7 L45.0,9.4 L44.5,9.0 L44.0,8.2 L43.5,11.8 L43.0,13.4 L42.5,14.5 L42.0,10.3 L41.5,12.4 L41.0,11.1 L40.5,11.6 L40.0,10.1 L39.5,12.0 L39.0,10.7 L38.5,12.4 L38.0,9.8 L37.5,9.1 L37.0,14.8 L36.5,15.3 L36.0,15.6 L35.5,14.5 L35.0,12.7 L34.5,10.1 L34.0,10.0 L33.5,11.6 L33.0,11.6 L32.5,12.9 L32.0,10.6 L31.5,13.4 L31.0,8.7 L30.5,14.3 L30.0,11.6 L29.5,10.4 L29.0,12.1 L28.5,8.0 L28.0,10.5 L27.5,9.7 L27.0,6.5 L26.5,8.8 L26.0,7.6 L25.5,6.4 L25.0,8.7 L24.5,6.6 L24.0,8.4 L23.5,8.6 L23.0,6.9 L22.5,8.6 L22.0,6.8 L21.5,9.6 L21.0,7.7 L20.5,8.1 L20.0,8.2 L19.5,5.9 L19.0,5.6 L18.5,5.0 L18.0,5.0 L17.5,4.1 L17.0,5.0 L16.5,3.4 L16.0,4.8 L15.5,4.7 L15.0,4.4 L14.5,4.6 L14.0,3.3 L13.5,4.3 L13.0,4.6 L12.5,5.7 L12.0,4.0 L11.5,4.3 L11.0,5.2 L10.5,4.2 L10.0,4.1 L9.5,3.6 L9.0,4.2 L8.5,3.0 L8.0,2.3 L7.5,3.0 L7.0,2.3 L6.5,2.6 L6.0,2.1 L5.5,2.3 L5.0,2.6 L4.5,2.3 L4.0,2.1 L3.5,2.2 L3.0,1.6 L2.5,1.5 L2.0,1.2 L1.5,1.5 L1.0,1.0 L0.5,1.2 L0.0,1.0Z" fill="#ff9900"/></g><rect x="169.6" y="3" width="1" height="70" fill="#ff9900" fill-opacity="0.7"/></svg><div class="hot">Hot</div><div class="lbl">Ambient (0:14)</div></div>
<div class="card" style="left:812px;top:166px"><svg class="wf" width="171" height="109" viewBox="0 0 171 109"><g transform="translate(1,38)"><path d="M0.3,-6.1V7.1M0.6,-5.6V9.8M0.9,-5.5V11.9M1.5,-7.7V11.7M1.9,-8.7V5.4M2.3,-7.7V7.1M3.0,-8.9V6.4M3.2,-5.7V5.3M3.7,-7.0V9.2M4.3,-6.5V8.8M4.7,-11.4V5.9M5.2,-12.3V10.6M5.6,-9.7V11.3M6.0,-11.9V6.9M6.4,-11.3V8.9M6.9,-6.3V7.7M7.4,-7.2V7.2M7.9,-10.8V5.7M8.3,-7.3V9.4M8.6,-6.5V6.1M9.2,-8.5V11.7M9.7,-11.6V11.1M10.1,-7.3V9.3M10.6,-9.1V8.5M10.9,-5.5V8.3M11.3,-11.3V10.4M11.8,-9.8V9.3M12.2,-10.0V7.6M12.7,-5.4V6.9M13.2,-6.0V10.0M13.5,-6.0V5.7M14.0,-6.3V5.9M14.5,-8.5V8.5M15.0,-7.2V9.2M15.3,-6.5V11.5M15.8,-12.0V7.9M16.3,-8.8V8.2M16.7,-10.2V12.4M17.3,-12.3V11.1M17.7,-13.5V7.9M18.0,-9.6V13.1M18.6,-9.0V10.3M19.0,-8.4V7.8M19.5,-13.1V8.5M20.1,-7.9V12.0M20.5,-11.1V8.9M20.8,-10.4V7.9M21.4,-7.6V8.3M21.6,-7.6V9.7M22.1,-11.8V7.8M22.7,-8.1V13.3M23.0,-10.2V7.7M23.5,-8.5V11.1M23.9,-13.9V7.7M24.5,-7.2V7.6M24.9,-9.1V7.1M25.2,-8.8V11.5M25.8,-12.2V9.9M26.3,-7.9V6.7M26.6,-10.0V11.6M27.2,-7.6V12.2M27.5,-8.1V8.6M28.1,-8.1V6.3M28.5,-7.1V9.1M28.9,-8.1V9.7M29.3,-8.0V10.1M29.7,-6.6V12.2M30.2,-6.7V8.6M30.7,-10.9V6.7M31.1,-7.9V7.6M31.6,-8.8V7.5M32.0,-12.9V10.4M32.6,-7.6V7.1M33.1,-10.2V6.1M33.5,-10.2V5.9M33.9,-5.8V9.3M34.3,-12.4V5.7M34.8,-12.4V11.7M35.1,-7.0V10.3M35.8,-11.6V10.4M36.2,-6.1V9.5M36.6,-5.8V5.5M37.0,-6.7V5.5M37.5,-6.1V5.5M38.0,-10.7V6.1M38.5,-6.6V9.8M38.8,-10.9V5.6M39.4,-6.1V6.4M39.7,-7.0V7.5M40.2,-9.1V6.2M40.7,-11.4V6.8M41.1,-6.5V6.5M41.6,-10.8V6.7M41.9,-8.5V12.6M42.6,-7.8V9.4M42.9,-7.7V11.8M43.4,-11.0V12.6M43.7,-7.4V7.2M44.2,-8.1V10.3M44.6,-8.9V14.2M45.0,-9.9V8.3M45.5,-9.1V10.5M46.1,-9.6V10.9M46.5,-11.3V9.3M47.0,-10.3V8.7M47.4,-11.1V10.4M48.0,-14.9V9.4M48.3,-7.7V8.0M48.7,-12.5V8.0M49.2,-11.4V14.0M49.7,-7.7V9.9M50.0,-11.8V11.8M50.5,-7.7V11.9M51.1,-7.9V7.9M51.6,-10.4V13.4M51.8,-8.7V10.9M52.3,-13.6V9.8M52.9,-14.4V11.1M53.1,-14.8V11.2M53.8,-8.8V11.5M54.2,-9.9V13.9M54.6,-7.3V8.8M55.0,-12.3V9.0M55.5,-10.2V9.4M55.9,-12.0V7.5M56.4,-13.1V6.5M56.8,-11.5V9.9M57.2,-9.9V7.4M57.6,-9.8V9.2M58.3,-7.8V6.0M58.7,-6.4V8.4M59.0,-6.2V6.6M59.6,-6.8V10.7M60.0,-11.7V12.9M60.3,-7.9V6.9M61.0,-12.8V6.5M61.3,-11.3V8.5M61.9,-7.9V7.1M62.2,-11.0V7.2M62.7,-14.2V9.1M63.2,-13.3V7.1M63.5,-9.6V9.5M64.1,-10.8V8.7M64.5,-8.2V11.9M65.0,-7.4V9.0M65.3,-9.4V12.2M65.7,-13.1V14.6M66.4,-11.7V10.3M66.7,-8.6V13.2M67.3,-7.9V13.0M67.5,-13.8V8.3M68.0,-12.1V8.2M68.5,-8.5V12.4M69.0,-14.4V7.9M69.4,-9.1V15.4M69.8,-12.4V11.8M70.5,-9.1V9.7M70.8,-11.4V13.2M71.3,-8.2V13.7M71.7,-8.2V11.2M72.1,-10.6V8.4M72.5,-8.7V13.2M73.0,-7.3V10.4M73.6,-12.2V6.6M73.8,-11.5V6.5M74.4,-6.7V5.9M74.9,-12.3V9.5M75.3,-8.3V8.5M75.9,-6.2V13.8M76.2,-8.1V6.1M76.6,-7.0V9.5M77.1,-6.6V6.6M77.6,-9.3V9.9M78.1,-8.9V12.0M78.5,-10.8V12.5M79.0,-7.3V7.4M79.4,-9.1V11.5M79.7,-8.7V12.2M80.4,-7.4V8.7M80.8,-7.3V8.5M81.1,-10.3V9.1M81.7,-14.1V12.9M82.2,-12.5V9.6M82.5,-14.7V14.0M83.0,-8.7V8.5M83.5,-12.5V10.9M83.7,-8.1V14.8M84.3,-9.2V13.5M84.7,-7.9V8.3M85.3,-10.5V12.5M85.8,-9.6V14.5M86.2,-8.6V6.2M86.6,-10.4V6.7M87.1,-8.2V7.9M87.4,-8.7V13.7M87.8,-6.3V7.0M88.5,-8.8V12.6M88.7,-6.8V6.3M89.3,-7.0V9.5M89.7,-7.3V7.2M90.2,-11.9V7.8M90.6,-10.8V14.4M91.0,-10.8V8.7M91.4,-12.1V8.6M92.0,-12.8V11.7M92.3,-5.7V9.6M92.9,-6.4V6.7M93.2,-9.0V11.2M93.7,-14.0V13.9M94.3,-13.8V7.7M94.6,-11.3V12.4M95.1,-7.6V13.2M95.6,-9.1V14.7M95.9,-11.6V10.6M96.5,-16.4V9.2M96.9,-9.8V10.9M97.5,-8.4V15.3M97.9,-11.0V15.5M98.2,-10.2V8.8M98.6,-8.1V10.4M99.2,-8.2V9.5M99.7,-9.0V8.2M100.1,-12.0V15.8M100.4,-10.9V7.6M100.9,-9.4V12.7M101.4,-13.6V7.4M101.7,-7.5V14.6M102.4,-8.5V13.7M102.9,-13.4V11.3M103.1,-7.5V9.6M103.7,-7.3V15.2M104.0,-7.5V9.6M104.6,-9.6V10.5M104.9,-9.8V6.9M105.3,-9.6V8.7M105.9,-7.3V10.5M106.3,-13.3V10.1M106.7,-10.3V7.6M107.2,-14.4V13.5M107.6,-12.4V10.6M108.1,-8.4V10.5M108.6,-11.8V11.4M108.9,-11.1V12.2M109.4,-12.5V12.7M110.1,-7.7V14.8M110.4,-7.3V7.4M110.9,-15.8V15.2M111.3,-10.7V10.1M111.8,-8.6V9.2M112.2,-7.8V7.9M112.7,-11.2V16.2M113.1,-8.5V9.2M113.4,-9.7V13.6M114.0,-8.2V8.2M114.4,-8.1V8.3M114.9,-8.1V14.2M115.2,-8.1V14.9M115.8,-8.6V14.3M116.2,-9.2V8.5M116.6,-13.2V14.3M117.2,-9.2V15.9M117.6,-7.9V13.4M118.0,-9.9V8.1M118.4,-9.4V8.7M118.8,-10.1V8.8M119.4,-8.1V8.5M119.8,-8.9V8.7M120.3,-7.9V11.1M120.7,-6.9V6.8M121.2,-9.8V11.7M121.6,-7.7V7.1M122.2,-7.2V8.0M122.6,-13.0V6.8M123.1,-6.8V7.4M123.4,-12.2V12.9M123.8,-12.1V7.2M124.4,-10.2V9.3M124.8,-7.2V7.7M125.4,-14.1V7.7M125.6,-12.5V9.6M126.0,-12.5V13.9M126.5,-14.2V11.9M127.1,-9.4V8.8M127.5,-7.0V12.7M127.9,-10.3V7.9M128.3,-6.8V13.9M128.9,-14.0V9.8M129.2,-6.6V7.4M129.8,-14.0V12.1M130.1,-6.4V10.7M130.6,-6.2V8.4M131.1,-9.9V13.9M131.6,-6.0V9.5M132.0,-11.2V7.4M132.3,-11.8V7.1M132.9,-13.6V13.6M133.2,-13.0V8.4M133.7,-8.3V7.2M134.1,-11.7V8.2M134.7,-7.6V11.1M135.2,-9.9V6.4M135.6,-12.3V7.5M136.2,-11.2V11.9M136.4,-9.7V15.0M136.8,-13.9V7.6M137.5,-13.0V8.9M137.9,-8.7V13.4M138.2,-7.9V13.3M138.8,-13.7V11.0M139.2,-12.6V11.1M139.6,-11.6V7.1M140.2,-7.4V7.9M140.5,-12.1V8.6M141.0,-12.8V5.7M141.5,-8.0V5.9M141.8,-8.2V5.4M142.2,-8.0V7.1M142.7,-8.3V10.4M143.2,-9.4V6.6M143.8,-6.1V8.2M144.0,-8.6V8.1M144.6,-6.8V12.3M145.1,-7.0V6.2M145.6,-6.4V10.7M146.0,-6.8V10.9M146.3,-10.7V8.1M146.8,-10.8V12.8M147.2,-7.7V8.3M147.8,-10.5V9.3M148.2,-7.4V8.2M148.6,-8.4V10.7M149.0,-13.3V13.0M149.4,-12.9V9.7M149.9,-6.5V8.8M150.3,-6.5V10.1M150.8,-11.8V6.7M151.4,-7.3V12.0M151.7,-10.6V11.8M152.4,-11.2V13.8M152.8,-8.7V11.7M153.1,-13.4V8.4M153.5,-7.0V13.4M153.9,-14.0V7.9M154.5,-8.0V13.5M155.0,-12.2V11.6M155.5,-8.5V13.1M155.8,-10.0V10.8M156.3,-14.1V7.2M156.8,-6.8V7.3M157.2,-6.8V8.9M157.6,-7.5V7.1M158.2,-12.3V12.6M158.5,-9.7V7.0M159.1,-9.3V9.6M159.3,-8.6V10.5M159.9,-7.2V7.6M160.4,-8.9V11.4M160.7,-11.6V8.1M161.2,-13.6V10.3M161.8,-8.7V14.5M162.1,-11.2V10.2M162.5,-8.5V9.7M163.0,-7.8V8.6M163.4,-8.6V8.4M163.9,-12.2V13.0M164.4,-7.1V13.0M164.7,-8.5V8.3M165.4,-6.2V6.2M165.8,-7.4V10.7M166.2,-8.0V7.2M166.5,-7.8V10.2M167.1,-8.3V8.0M167.4,-7.5V8.3M168.0,-7.0V10.1M168.3,-13.6V13.5M168.9,-9.0V10.8M169.3,-7.4V7.6M169.7,-7.3V8.7" stroke="#ff9900" stroke-width="0.6" stroke-opacity="0.8" fill="none"/><path d="M0.0,-5.0 L0.5,-6.3 L1.0,-5.7 L1.5,-4.3 L2.0,-4.6 L2.5,-5.6 L3.0,-4.8 L3.5,-5.3 L4.0,-6.1 L4.5,-7.0 L5.0,-7.2 L5.5,-5.4 L6.0,-7.0 L6.5,-7.4 L7.0,-6.9 L7.5,-4.9 L8.0,-4.6 L8.5,-6.8 L9.0,-4.1 L9.5,-4.5 L10.0,-4.9 L10.5,-4.2 L11.0,-5.0 L11.5,-4.0 L12.0,-4.3 L12.5,-4.4 L13.0,-5.5 L13.5,-7.1 L14.0,-5.9 L14.5,-5.8 L15.0,-6.2 L15.5,-6.2 L16.0,-6.5 L16.5,-8.4 L17.0,-7.3 L17.5,-6.7 L18.0,-6.8 L18.5,-9.3 L19.0,-6.0 L19.5,-8.0 L20.0,-7.3 L20.5,-8.2 L21.0,-8.5 L21.5,-6.0 L22.0,-8.9 L22.5,-9.1 L23.0,-8.1 L23.5,-8.0 L24.0,-7.5 L24.5,-7.8 L25.0,-8.3 L25.5,-5.2 L26.0,-7.7 L26.5,-4.6 L27.0,-4.6 L27.5,-6.3 L28.0,-5.0 L28.5,-6.4 L29.0,-7.7 L29.5,-4.9 L30.0,-5.1 L30.5,-5.3 L31.0,-7.3 L31.5,-6.4 L32.0,-5.2 L32.5,-5.5 L33.0,-6.7 L33.5,-5.9 L34.0,-4.4 L34.5,-5.7 L35.0,-5.9 L35.5,-5.2 L36.0,-5.6 L36.5,-6.4 L37.0,-4.3 L37.5,-5.1 L38.0,-4.9 L38.5,-5.3 L39.0,-4.2 L39.5,-5.7 L40.0,-5.5 L40.5,-6.5 L41.0,-4.4 L41.5,-4.8 L42.0,-6.6 L42.5,-7.0 L43.0,-7.7 L43.5,-5.7 L44.0,-6.7 L44.5,-9.2 L45.0,-6.1 L45.5,-8.2 L46.0,-8.8 L46.5,-6.2 L47.0,-9.2 L47.5,-8.8 L48.0,-8.2 L48.5,-8.1 L49.0,-9.3 L49.5,-9.3 L50.0,-9.1 L50.5,-8.1 L51.0,-6.3 L51.5,-7.1 L52.0,-6.3 L52.5,-6.3 L53.0,-6.4 L53.5,-7.2 L54.0,-7.1 L54.5,-5.8 L55.0,-8.5 L55.5,-7.2 L56.0,-5.7 L56.5,-4.5 L57.0,-6.6 L57.5,-6.6 L58.0,-4.8 L58.5,-5.8 L59.0,-7.2 L59.5,-7.4 L60.0,-6.5 L60.5,-7.0 L61.0,-7.5 L61.5,-8.0 L62.0,-7.1 L62.5,-7.6 L63.0,-6.2 L63.5,-7.6 L64.0,-8.7 L64.5,-6.9 L65.0,-6.6 L65.5,-5.6 L66.0,-7.6 L66.5,-8.0 L67.0,-9.3 L67.5,-6.4 L68.0,-9.6 L68.5,-9.5 L69.0,-7.2 L69.5,-7.0 L70.0,-9.6 L70.5,-9.0 L71.0,-6.9 L71.5,-9.8 L72.0,-9.1 L72.5,-7.7 L73.0,-6.3 L73.5,-5.5 L74.0,-4.8 L74.5,-4.7 L75.0,-6.6 L75.5,-6.7 L76.0,-6.6 L76.5,-7.6 L77.0,-7.2 L77.5,-7.5 L78.0,-7.3 L78.5,-5.9 L79.0,-7.1 L79.5,-6.0 L80.0,-6.4 L80.5,-7.9 L81.0,-6.7 L81.5,-6.9 L82.0,-8.5 L82.5,-8.7 L83.0,-5.8 L83.5,-8.0 L84.0,-6.9 L84.5,-7.3 L85.0,-7.4 L85.5,-6.9 L86.0,-7.4 L86.5,-6.9 L87.0,-5.9 L87.5,-6.2 L88.0,-5.4 L88.5,-7.4 L89.0,-4.9 L89.5,-5.7 L90.0,-7.2 L90.5,-7.7 L91.0,-5.7 L91.5,-7.2 L92.0,-6.9 L92.5,-6.2 L93.0,-5.5 L93.5,-5.4 L94.0,-7.0 L94.5,-7.0 L95.0,-6.4 L95.5,-6.1 L96.0,-9.9 L96.5,-6.6 L97.0,-9.5 L97.5,-6.1 L98.0,-8.6 L98.5,-6.1 L99.0,-6.2 L99.5,-6.5 L100.0,-9.2 L100.5,-8.7 L101.0,-6.9 L101.5,-5.5 L102.0,-8.6 L102.5,-8.1 L103.0,-7.3 L103.5,-7.2 L104.0,-5.4 L104.5,-7.5 L105.0,-5.4 L105.5,-6.2 L106.0,-8.0 L106.5,-7.6 L107.0,-7.6 L107.5,-6.9 L108.0,-9.9 L108.5,-9.1 L109.0,-9.7 L109.5,-6.1 L110.0,-9.1 L110.5,-8.7 L111.0,-5.7 L111.5,-7.1 L112.0,-6.2 L112.5,-8.9 L113.0,-9.6 L113.5,-8.2 L114.0,-9.8 L114.5,-9.5 L115.0,-9.0 L115.5,-9.2 L116.0,-6.9 L116.5,-7.3 L117.0,-10.0 L117.5,-7.3 L118.0,-6.4 L118.5,-9.2 L119.0,-7.9 L119.5,-5.5 L120.0,-7.6 L120.5,-8.0 L121.0,-5.8 L121.5,-6.7 L122.0,-6.8 L122.5,-7.4 L123.0,-7.4 L123.5,-5.5 L124.0,-5.9 L124.5,-5.8 L125.0,-6.5 L125.5,-7.8 L126.0,-6.1 L126.5,-8.8 L127.0,-5.4 L127.5,-8.1 L128.0,-8.3 L128.5,-5.2 L129.0,-7.4 L129.5,-5.3 L130.0,-6.2 L130.5,-6.0 L131.0,-4.6 L131.5,-6.6 L132.0,-4.6 L132.5,-6.0 L133.0,-5.8 L133.5,-6.1 L134.0,-6.4 L134.5,-6.4 L135.0,-4.7 L135.5,-7.5 L136.0,-5.3 L136.5,-6.3 L137.0,-6.7 L137.5,-6.4 L138.0,-8.7 L138.5,-9.3 L139.0,-6.2 L139.5,-6.8 L140.0,-5.8 L140.5,-4.9 L141.0,-4.3 L141.5,-5.6 L142.0,-4.4 L142.5,-5.6 L143.0,-6.2 L143.5,-4.2 L144.0,-6.1 L144.5,-5.8 L145.0,-4.7 L145.5,-7.5 L146.0,-6.6 L146.5,-7.7 L147.0,-8.8 L147.5,-6.9 L148.0,-7.1 L148.5,-7.9 L149.0,-6.4 L149.5,-6.1 L150.0,-5.5 L150.5,-7.8 L151.0,-5.5 L151.5,-8.0 L152.0,-5.1 L152.5,-6.2 L153.0,-6.8 L153.5,-7.5 L154.0,-7.5 L154.5,-7.1 L155.0,-5.4 L155.5,-5.6 L156.0,-7.8 L156.5,-6.2 L157.0,-7.0 L157.5,-7.1 L158.0,-8.1 L158.5,-7.4 L159.0,-6.2 L159.5,-6.3 L160.0,-7.3 L160.5,-6.6 L161.0,-6.6 L161.5,-9.0 L162.0,-9.1 L162.5,-7.0 L163.0,-8.5 L163.5,-9.0 L164.0,-6.3 L164.5,-5.8 L165.0,-5.4 L165.5,-6.0 L166.0,-5.8 L166.5,-5.7 L167.0,-7.4 L167.5,-7.7 L168.0,-5.3 L168.5,-5.0 L169.0,-7.6 L169.5,-6.8 L170.0,-5.3 L170.0,5.4 L169.5,6.5 L169.0,4.8 L168.5,4.9 L168.0,8.3 L167.5,5.5 L167.0,5.9 L166.5,7.5 L166.0,6.7 L165.5,5.4 L165.0,5.1 L164.5,5.7 L164.0,6.2 L163.5,7.1 L163.0,8.7 L162.5,10.1 L162.0,9.0 L161.5,8.5 L161.0,7.9 L160.5,8.0 L160.0,7.3 L159.5,7.7 L159.0,5.8 L158.5,6.6 L158.0,5.4 L157.5,5.2 L157.0,5.4 L156.5,6.0 L156.0,6.3 L155.5,5.5 L155.0,6.7 L154.5,7.6 L154.0,7.0 L153.5,7.6 L153.0,5.6 L152.5,7.0 L152.0,5.1 L151.5,8.3 L151.0,7.8 L150.5,7.3 L150.0,7.2 L149.5,7.7 L149.0,5.2 L148.5,5.3 L148.0,8.2 L147.5,5.4 L147.0,6.6 L146.5,8.7 L146.0,6.0 L145.5,5.4 L145.0,6.0 L144.5,5.0 L144.0,5.6 L143.5,6.5 L143.0,6.3 L142.5,4.1 L142.0,5.9 L141.5,6.6 L141.0,6.4 L140.5,5.7 L140.0,7.3 L139.5,6.8 L139.0,6.5 L138.5,9.2 L138.0,8.2 L137.5,7.1 L137.0,7.9 L136.5,6.9 L136.0,5.7 L135.5,5.3 L135.0,6.0 L134.5,6.8 L134.0,6.4 L133.5,5.0 L133.0,7.3 L132.5,7.0 L132.0,5.1 L131.5,5.6 L131.0,6.9 L130.5,5.1 L130.0,5.9 L129.5,6.1 L129.0,6.3 L128.5,6.1 L128.0,6.8 L127.5,7.7 L127.0,5.9 L126.5,6.1 L126.0,6.7 L125.5,8.7 L125.0,6.5 L124.5,7.3 L124.0,7.0 L123.5,5.7 L123.0,5.0 L122.5,7.7 L122.0,6.2 L121.5,6.9 L121.0,5.5 L120.5,5.5 L120.0,7.5 L119.5,8.5 L119.0,9.0 L118.5,9.1 L118.0,6.6 L117.5,9.8 L117.0,8.5 L116.5,7.4 L116.0,6.2 L115.5,6.8 L115.0,6.2 L114.5,6.8 L114.0,6.4 L113.5,8.6 L113.0,7.0 L112.5,6.1 L112.0,6.5 L111.5,9.0 L111.0,6.5 L110.5,7.3 L110.0,8.1 L109.5,6.5 L109.0,6.5 L108.5,6.4 L108.0,6.7 L107.5,7.0 L107.0,5.8 L106.5,6.3 L106.0,6.2 L105.5,6.9 L105.0,6.9 L104.5,7.6 L104.0,4.9 L103.5,6.3 L103.0,7.6 L102.5,6.1 L102.0,7.8 L101.5,6.8 L101.0,7.7 L100.5,6.7 L100.0,8.6 L99.5,7.3 L99.0,7.9 L98.5,9.0 L98.0,8.6 L97.5,9.5 L97.0,8.2 L96.5,10.2 L96.0,9.1 L95.5,8.9 L95.0,6.2 L94.5,7.2 L94.0,6.3 L93.5,4.6 L93.0,6.7 L92.5,5.9 L92.0,6.3 L91.5,7.2 L91.0,7.3 L90.5,6.9 L90.0,6.0 L89.5,7.7 L89.0,6.8 L88.5,6.5 L88.0,6.4 L87.5,7.0 L87.0,4.6 L86.5,6.8 L86.0,5.7 L85.5,7.5 L85.0,8.0 L84.5,5.5 L84.0,6.7 L83.5,5.9 L83.0,8.2 L82.5,5.8 L82.0,5.4 L81.5,5.5 L81.0,6.9 L80.5,8.6 L80.0,6.8 L79.5,8.6 L79.0,5.6 L78.5,8.4 L78.0,7.1 L77.5,7.6 L77.0,6.7 L76.5,7.4 L76.0,6.4 L75.5,6.2 L75.0,4.8 L74.5,4.5 L74.0,5.6 L73.5,5.3 L73.0,7.2 L72.5,9.3 L72.0,8.7 L71.5,6.6 L71.0,7.2 L70.5,6.5 L70.0,9.5 L69.5,6.8 L69.0,6.3 L68.5,8.2 L68.0,9.6 L67.5,6.0 L67.0,8.1 L66.5,7.0 L66.0,8.2 L65.5,6.2 L65.0,7.0 L64.5,8.4 L64.0,6.9 L63.5,8.9 L63.0,6.5 L62.5,6.3 L62.0,8.1 L61.5,6.3 L61.0,5.8 L60.5,6.6 L60.0,6.6 L59.5,4.8 L59.0,6.7 L58.5,6.1 L58.0,6.0 L57.5,7.0 L57.0,6.5 L56.5,7.3 L56.0,4.8 L55.5,6.1 L55.0,5.9 L54.5,7.0 L54.0,8.1 L53.5,8.0 L53.0,9.2 L52.5,8.8 L52.0,6.1 L51.5,8.3 L51.0,8.7 L50.5,7.5 L50.0,8.8 L49.5,7.0 L49.0,7.6 L48.5,7.0 L48.0,8.4 L47.5,9.7 L47.0,7.3 L46.5,6.9 L46.0,7.9 L45.5,7.9 L45.0,7.3 L44.5,8.5 L44.0,7.4 L43.5,6.8 L43.0,5.4 L42.5,5.1 L42.0,5.5 L41.5,5.1 L41.0,6.6 L40.5,6.3 L40.0,5.3 L39.5,6.4 L39.0,4.3 L38.5,6.6 L38.0,4.7 L37.5,6.2 L37.0,5.6 L36.5,6.4 L36.0,4.2 L35.5,6.3 L35.0,4.6 L34.5,6.7 L34.0,6.0 L33.5,4.4 L33.0,5.8 L32.5,7.2 L32.0,6.7 L31.5,7.5 L31.0,7.6 L30.5,7.6 L30.0,8.0 L29.5,7.9 L29.0,5.5 L28.5,6.9 L28.0,6.4 L27.5,4.6 L27.0,7.0 L26.5,7.2 L26.0,6.8 L25.5,8.1 L25.0,8.4 L24.5,6.3 L24.0,8.0 L23.5,8.6 L23.0,8.6 L22.5,6.9 L22.0,9.0 L21.5,6.4 L21.0,7.5 L20.5,8.7 L20.0,9.2 L19.5,9.6 L19.0,9.5 L18.5,6.5 L18.0,6.9 L17.5,6.7 L17.0,5.6 L16.5,8.2 L16.0,5.9 L15.5,5.0 L15.0,5.4 L14.5,7.5 L14.0,6.7 L13.5,4.6 L13.0,4.8 L12.5,4.1 L12.0,5.6 L11.5,4.0 L11.0,4.5 L10.5,6.5 L10.0,4.8 L9.5,6.1 L9.0,4.2 L8.5,5.1 L8.0,5.3 L7.5,5.6 L7.0,5.3 L6.5,6.4 L6.0,5.9 L5.5,7.4 L5.0,4.4 L4.5,6.4 L4.0,6.6 L3.5,4.1 L3.0,4.4 L2.5,4.6 L2.0,6.1 L1.5,4.2 L1.0,6.6 L0.5,5.1 L0.0,5.2Z" fill="#ff9900"/></g><rect x="169.6" y="3" width="1" height="70" fill="#ff9900" fill-opacity="0.7"/></svg><div class="hot">Hot</div><div class="lbl">Rock Guitar (0:06)</div></div>
<div class="card" style="left:227px;top:307px"><svg class="wf" width="171" height="109" viewBox="0 0 171 109"><g transform="translate(1,38)"><path d="M0.1,-1.5V2.0M0.6,-1.9V2.6M1.1,-1.4V2.1M1.7,-1.7V2.6M2.2,-3.3V1.7M2.6,-4.7V2.3M3.3,-5.2V2.4M3.7,-3.4V2.3M4.1,-2.4V2.5M4.7,-5.5V5.3M5.2,-5.6V7.1M5.8,-8.0V3.0M6.0,-3.4V4.1M6.6,-7.1V3.6M7.1,-5.2V4.1M7.7,-7.8V6.5M8.3,-5.2V9.1M8.7,-5.7V7.5M9.1,-11.5V7.3M9.6,-9.9V10.7M10.2,-7.8V11.7M10.7,-8.7V7.7M11.2,-8.2V7.5M11.6,-10.2V9.1M12.3,-9.5V13.1M12.5,-9.7V8.4M13.1,-10.5V11.4M13.5,-16.1V11.4M14.1,-11.1V16.5M14.7,-10.9V12.4M15.2,-14.0V16.8M15.7,-10.9V10.8M16.2,-16.0V15.5M16.8,-17.0V14.5M17.3,-14.4V11.4M17.8,-9.7V10.9M18.1,-9.9V12.8M18.5,-11.7V9.7M19.1,-16.4V11.0M19.5,-17.8V14.2M20.0,-18.1V18.3M20.5,-14.3V13.3M21.2,-18.2V13.6M21.7,-18.1V14.0M22.0,-15.9V15.8M22.6,-22.5V15.9M23.2,-18.8V20.6M23.5,-20.9V16.2M24.2,-19.6V20.6M24.7,-19.4V16.6M25.1,-16.4V17.7M25.6,-24.4V18.0M26.2,-24.7V24.9M26.8,-16.1V24.6M27.0,-21.8V19.2M27.6,-17.5V20.1M28.2,-18.5V20.0M28.7,-20.0V17.0M29.0,-17.7V27.8M29.6,-25.4V24.8M30.1,-23.4V20.4M30.7,-17.9V26.0M31.1,-16.3V16.0M31.5,-19.4V14.7M32.0,-17.5V23.2M32.5,-13.0V19.7M33.2,-12.8V22.7M33.5,-18.4V12.2M34.0,-18.2V22.1M34.7,-18.5V21.6M35.0,-14.3V14.7M35.5,-17.3V23.0M36.1,-14.5V14.8M36.8,-13.3V15.2M37.0,-18.2V18.6M37.6,-16.1V18.7M38.1,-21.9V12.6M38.6,-16.0V21.3M39.2,-14.4V19.2M39.8,-12.2V13.2M40.1,-13.3V17.3M40.7,-12.5V19.4M41.1,-17.5V20.6M41.7,-22.8V14.8M42.2,-13.7V15.0M42.6,-12.4V18.6M43.1,-12.2V13.7M43.6,-19.3V20.9M44.2,-14.3V12.7M44.5,-13.1V11.9M45.2,-20.9V14.3M45.5,-11.0V14.6M46.0,-13.9V12.8M46.6,-19.3V11.9M47.1,-17.7V10.8M47.7,-9.5V15.2M48.2,-7.5V16.8M48.6,-16.4V11.7M49.2,-13.8V8.6M49.6,-12.0V7.8M50.1,-13.6V7.7M50.8,-8.1V7.8M51.1,-15.3V8.1M51.7,-11.6V8.6M52.1,-13.2V7.9M52.7,-11.6V12.1M53.1,-15.6V8.7M53.6,-7.9V9.8M54.1,-7.9V12.1M54.7,-8.0V16.0M55.1,-12.8V10.5M55.8,-10.3V13.9M56.2,-12.9V14.8M56.5,-9.4V15.0M57.2,-9.9V12.8M57.6,-10.8V17.8M58.3,-16.5V14.6M58.6,-11.6V11.8M59.0,-14.5V16.1M59.7,-12.7V16.5M60.1,-17.0V13.9M60.7,-12.5V17.9M61.0,-11.5V16.9M61.5,-13.6V17.3M62.1,-11.0V17.0M62.7,-17.4V14.8M63.2,-15.1V11.0M63.8,-12.8V12.2M64.1,-14.6V13.0M64.6,-16.1V15.1M65.2,-15.8V23.4M65.8,-17.4V18.7M66.1,-17.1V19.5M66.7,-23.4V21.2M67.2,-23.8V22.1M67.6,-20.0V23.0M68.2,-14.8V15.8M68.6,-20.5V14.3M69.2,-15.3V13.4M69.7,-14.4V15.4M70.0,-17.2V14.7M70.5,-25.5V23.5M71.1,-16.3V16.6M71.5,-21.7V24.0M72.1,-20.6V27.4M72.7,-17.4V19.8M73.1,-17.4V17.9M73.7,-20.2V16.6M74.2,-15.3V22.8M74.6,-24.7V23.3M75.1,-14.4V18.7M75.5,-25.8V20.5M76.0,-17.9V17.5M76.5,-17.5V13.8M77.2,-15.4V13.7M77.6,-15.4V13.6M78.1,-13.8V16.2M78.6,-19.1V15.1M79.3,-24.9V20.8M79.8,-19.3V19.9M80.1,-23.5V21.4M80.7,-25.9V24.2M81.2,-23.9V24.1M81.5,-30.5V21.8M82.1,-24.0V19.1M82.6,-17.0V17.3M83.2,-15.6V15.7M83.7,-21.1V14.4M84.1,-15.8V20.9M84.7,-23.3V19.4M85.3,-16.8V15.0M85.7,-23.5V15.3M86.2,-24.2V15.1M86.8,-12.4V20.2M87.2,-13.7V12.8M87.6,-15.5V13.9M88.2,-19.0V16.7M88.6,-22.9V20.1M89.1,-19.4V18.3M89.8,-16.6V17.0M90.2,-26.3V14.8M90.6,-18.9V14.4M91.1,-22.7V15.1M91.6,-14.0V14.4M92.3,-14.4V13.2M92.5,-20.6V23.9M93.3,-13.5V12.8M93.6,-12.3V18.9M94.1,-12.6V20.2M94.8,-17.3V20.4M95.2,-14.4V11.1M95.5,-12.5V9.6M96.0,-11.0V19.2M96.6,-16.2V14.1M97.1,-11.5V15.0M97.8,-11.8V10.8M98.0,-11.5V10.6M98.6,-11.9V16.4M99.2,-17.3V12.1M99.8,-14.9V16.3M100.2,-18.0V14.9M100.7,-10.7V12.7M101.2,-15.3V11.4M101.6,-16.3V10.8M102.2,-13.9V10.7M102.6,-13.5V14.0M103.0,-13.2V10.2M103.5,-9.7V12.7M104.1,-11.0V10.4M104.6,-10.2V11.8M105.2,-10.0V10.9M105.6,-12.3V10.9M106.1,-9.9V14.3M106.7,-12.5V15.3M107.3,-8.7V11.8M107.7,-13.6V10.3M108.2,-13.5V16.9M108.7,-14.6V10.0M109.2,-9.8V15.8M109.6,-13.6V15.9M110.2,-19.8V13.7M110.7,-13.2V17.3M111.3,-18.5V16.9M111.7,-19.6V12.3M112.1,-17.2V20.9M112.7,-11.6V14.0M113.3,-17.5V12.9M113.7,-16.0V15.6M114.3,-20.0V13.9M114.6,-14.6V10.9M115.3,-14.0V10.9M115.6,-12.1V12.3M116.2,-15.8V14.7M116.8,-12.6V12.1M117.1,-11.4V11.5M117.6,-18.9V12.5M118.1,-14.8V13.3M118.5,-11.5V10.9M119.2,-12.4V15.7M119.7,-11.3V17.6M120.0,-12.0V9.9M120.6,-14.0V14.2M121.2,-9.7V10.9M121.8,-8.3V15.6M122.2,-7.7V9.5M122.7,-8.2V14.0M123.1,-11.7V7.5M123.6,-7.4V14.0M124.2,-10.4V10.4M124.7,-6.8V6.5M125.0,-6.4V10.2M125.6,-7.5V8.6M126.1,-8.5V6.4M126.5,-9.0V7.1M127.2,-11.4V11.9M127.7,-7.4V10.7M128.2,-6.2V5.7M128.7,-7.2V10.8M129.3,-9.6V5.5M129.8,-7.1V10.3M130.1,-6.2V10.6M130.8,-8.7V5.1M131.1,-10.2V8.3M131.5,-6.0V5.3M132.1,-6.1V5.6M132.6,-7.3V8.4M133.3,-9.3V4.7M133.6,-8.1V7.1M134.1,-5.9V4.8M134.6,-4.4V9.4M135.3,-5.6V5.0M135.7,-4.6V8.7M136.3,-5.9V4.8M136.7,-5.1V5.2M137.2,-6.0V7.2M137.6,-5.8V7.9M138.3,-6.6V7.9M138.7,-5.7V4.8M139.0,-5.4V5.1M139.5,-7.1V5.5M140.1,-8.6V7.3M140.6,-5.0V6.6M141.2,-8.3V6.7M141.7,-7.6V4.9M142.2,-4.8V4.6M142.6,-6.1V5.2M143.2,-4.1V3.6M143.5,-5.2V7.5M144.2,-7.3V4.6M144.6,-4.2V6.0M145.2,-7.4V5.0M145.7,-5.5V5.4M146.0,-6.3V4.6M146.5,-6.5V6.6M147.1,-6.7V4.5M147.7,-4.4V4.0M148.2,-5.4V7.5M148.6,-4.7V5.3M149.1,-4.9V5.2M149.8,-4.5V5.1M150.2,-3.7V5.2M150.6,-3.4V3.9M151.2,-4.2V5.6M151.6,-5.2V4.9M152.1,-3.0V4.3M152.8,-3.2V5.3M153.2,-3.5V4.6M153.7,-3.6V3.7M154.0,-3.1V5.5M154.5,-6.1V4.2M155.2,-3.6V3.9M155.8,-5.9V5.8M156.2,-5.1V5.9M156.7,-4.5V5.9M157.2,-3.3V4.5M157.5,-3.6V3.4M158.1,-3.9V4.3M158.6,-3.7V4.6M159.2,-3.7V4.5M159.5,-4.6V4.5M160.0,-3.7V4.4M160.7,-2.5V4.0M161.2,-2.7V2.8M161.8,-2.5V4.5M162.3,-2.5V3.6M162.6,-3.4V2.6M163.2,-2.5V3.1M163.6,-2.4V4.0M164.1,-2.4V2.6M164.8,-3.6V4.0M165.2,-2.8V2.4M165.6,-2.4V3.2M166.2,-2.5V2.4M166.5,-2.4V2.9M167.1,-2.5V3.4M167.8,-2.5V3.5M168.1,-2.7V2.8M168.6,-2.4V3.1M169.2,-2.0V2.1M169.6,-2.3V1.9M170.1,-2.7V2.3" stroke="#ff9900" stroke-width="0.6" stroke-opacity="0.8" fill="none"/><path d="M0.0,-0.8 L0.5,-1.4 L1.0,-1.5 L1.5,-1.6 L2.0,-1.3 L2.5,-2.2 L3.0,-2.2 L3.5,-2.6 L4.0,-2.1 L4.5,-2.7 L5.0,-2.9 L5.5,-3.2 L6.0,-3.5 L6.5,-3.1 L7.0,-4.6 L7.5,-5.2 L8.0,-4.3 L8.5,-4.4 L9.0,-4.8 L9.5,-7.7 L10.0,-5.1 L10.5,-7.0 L11.0,-6.3 L11.5,-8.8 L12.0,-7.5 L12.5,-10.1 L13.0,-8.9 L13.5,-7.7 L14.0,-12.3 L14.5,-12.1 L15.0,-10.8 L15.5,-12.8 L16.0,-10.4 L16.5,-12.1 L17.0,-9.6 L17.5,-10.4 L18.0,-7.9 L18.5,-7.8 L19.0,-12.8 L19.5,-11.7 L20.0,-10.9 L20.5,-11.0 L21.0,-15.4 L21.5,-15.5 L22.0,-15.6 L22.5,-16.8 L23.0,-17.1 L23.5,-16.1 L24.0,-18.5 L24.5,-20.3 L25.0,-17.1 L25.5,-16.6 L26.0,-17.3 L26.5,-18.2 L27.0,-17.8 L27.5,-17.0 L28.0,-19.0 L28.5,-19.6 L29.0,-18.8 L29.5,-21.6 L30.0,-18.3 L30.5,-19.8 L31.0,-15.6 L31.5,-16.4 L32.0,-11.4 L32.5,-13.2 L33.0,-11.2 L33.5,-13.6 L34.0,-13.7 L34.5,-10.5 L35.0,-13.9 L35.5,-14.5 L36.0,-10.5 L36.5,-11.4 L37.0,-10.5 L37.5,-10.5 L38.0,-9.4 L38.5,-11.2 L39.0,-12.0 L39.5,-14.1 L40.0,-11.4 L40.5,-11.6 L41.0,-14.3 L41.5,-9.5 L42.0,-9.9 L42.5,-11.3 L43.0,-14.9 L43.5,-11.5 L44.0,-12.6 L44.5,-9.5 L45.0,-11.8 L45.5,-13.2 L46.0,-9.3 L46.5,-7.0 L47.0,-9.0 L47.5,-6.6 L48.0,-8.9 L48.5,-7.2 L49.0,-6.7 L49.5,-7.0 L50.0,-9.0 L50.5,-6.6 L51.0,-7.6 L51.5,-6.9 L52.0,-7.5 L52.5,-7.5 L53.0,-8.0 L53.5,-6.7 L54.0,-8.7 L54.5,-8.0 L55.0,-10.0 L55.5,-7.5 L56.0,-7.4 L56.5,-8.4 L57.0,-9.5 L57.5,-10.6 L58.0,-8.4 L58.5,-9.7 L59.0,-10.2 L59.5,-11.6 L60.0,-10.9 L60.5,-12.1 L61.0,-10.0 L61.5,-13.6 L62.0,-11.3 L62.5,-12.3 L63.0,-10.9 L63.5,-12.3 L64.0,-15.2 L64.5,-12.9 L65.0,-12.6 L65.5,-18.6 L66.0,-20.1 L66.5,-16.0 L67.0,-18.1 L67.5,-12.4 L68.0,-14.8 L68.5,-12.5 L69.0,-13.5 L69.5,-10.7 L70.0,-16.7 L70.5,-16.4 L71.0,-17.7 L71.5,-20.8 L72.0,-13.5 L72.5,-14.5 L73.0,-20.1 L73.5,-12.9 L74.0,-18.4 L74.5,-15.4 L75.0,-11.6 L75.5,-10.7 L76.0,-12.9 L76.5,-10.6 L77.0,-15.1 L77.5,-10.9 L78.0,-12.0 L78.5,-14.5 L79.0,-14.9 L79.5,-18.9 L80.0,-19.8 L80.5,-24.1 L81.0,-22.6 L81.5,-20.5 L82.0,-20.9 L82.5,-14.1 L83.0,-15.0 L83.5,-12.4 L84.0,-14.6 L84.5,-14.4 L85.0,-10.5 L85.5,-11.0 L86.0,-12.2 L86.5,-13.9 L87.0,-13.1 L87.5,-10.2 L88.0,-14.0 L88.5,-10.8 L89.0,-15.1 L89.5,-11.8 L90.0,-13.8 L90.5,-13.3 L91.0,-13.0 L91.5,-11.2 L92.0,-14.2 L92.5,-12.4 L93.0,-12.6 L93.5,-12.1 L94.0,-10.3 L94.5,-7.9 L95.0,-7.5 L95.5,-9.1 L96.0,-6.5 L96.5,-11.0 L97.0,-9.3 L97.5,-8.1 L98.0,-8.7 L98.5,-10.4 L99.0,-9.4 L99.5,-9.8 L100.0,-9.5 L100.5,-10.1 L101.0,-11.9 L101.5,-11.6 L102.0,-10.1 L102.5,-11.5 L103.0,-10.4 L103.5,-10.6 L104.0,-8.2 L104.5,-7.6 L105.0,-8.0 L105.5,-12.2 L106.0,-8.6 L106.5,-8.2 L107.0,-9.8 L107.5,-7.4 L108.0,-10.0 L108.5,-8.5 L109.0,-7.1 L109.5,-11.5 L110.0,-8.3 L110.5,-14.1 L111.0,-11.1 L111.5,-9.3 L112.0,-11.6 L112.5,-9.0 L113.0,-8.8 L113.5,-8.6 L114.0,-10.2 L114.5,-8.3 L115.0,-13.4 L115.5,-11.0 L116.0,-11.2 L116.5,-10.0 L117.0,-11.3 L117.5,-11.4 L118.0,-9.2 L118.5,-10.7 L119.0,-10.6 L119.5,-10.7 L120.0,-11.9 L120.5,-9.1 L121.0,-7.6 L121.5,-7.5 L122.0,-8.8 L122.5,-6.6 L123.0,-5.3 L123.5,-5.3 L124.0,-6.8 L124.5,-5.1 L125.0,-5.0 L125.5,-5.7 L126.0,-5.1 L126.5,-5.6 L127.0,-6.2 L127.5,-6.3 L128.0,-5.9 L128.5,-6.3 L129.0,-6.5 L129.5,-5.8 L130.0,-6.0 L130.5,-4.1 L131.0,-4.2 L131.5,-5.4 L132.0,-3.8 L132.5,-4.9 L133.0,-3.6 L133.5,-4.2 L134.0,-5.5 L134.5,-3.8 L135.0,-4.0 L135.5,-3.3 L136.0,-5.1 L136.5,-3.5 L137.0,-3.7 L137.5,-4.3 L138.0,-5.1 L138.5,-4.1 L139.0,-4.5 L139.5,-4.5 L140.0,-5.7 L140.5,-5.8 L141.0,-3.8 L141.5,-4.3 L142.0,-5.2 L142.5,-4.1 L143.0,-4.3 L143.5,-2.9 L144.0,-2.7 L144.5,-3.1 L145.0,-3.1 L145.5,-3.2 L146.0,-4.5 L146.5,-4.3 L147.0,-3.5 L147.5,-4.0 L148.0,-3.2 L148.5,-4.1 L149.0,-3.0 L149.5,-3.1 L150.0,-3.8 L150.5,-3.7 L151.0,-2.4 L151.5,-3.2 L152.0,-2.9 L152.5,-2.3 L153.0,-2.7 L153.5,-3.3 L154.0,-3.8 L154.5,-3.8 L155.0,-3.5 L155.5,-3.8 L156.0,-3.6 L156.5,-3.3 L157.0,-2.5 L157.5,-2.8 L158.0,-3.3 L158.5,-2.5 L159.0,-2.4 L159.5,-2.1 L160.0,-2.8 L160.5,-3.0 L161.0,-2.8 L161.5,-2.5 L162.0,-2.3 L162.5,-2.0 L163.0,-2.4 L163.5,-1.7 L164.0,-1.9 L164.5,-2.8 L165.0,-2.4 L165.5,-1.9 L166.0,-2.4 L166.5,-2.2 L167.0,-2.0 L167.5,-2.1 L168.0,-2.8 L168.5,-2.3 L169.0,-1.8 L169.5,-2.0 L170.0,-2.1 L170.0,2.0 L169.5,2.2 L169.0,1.6 L168.5,2.5 L168.0,2.0 L167.5,2.5 L167.0,2.1 L166.5,2.8 L166.0,2.6 L165.5,2.5 L165.0,2.2 L164.5,2.8 L164.0,2.5 L163.5,2.2 L163.0,2.2 L162.5,2.9 L162.0,2.8 L161.5,2.0 L161.0,2.7 L160.5,2.7 L160.0,3.2 L159.5,3.0 L159.0,3.0 L158.5,3.4 L158.0,3.2 L157.5,3.2 L157.0,2.5 L156.5,2.9 L156.0,3.7 L155.5,3.1 L155.0,3.3 L154.5,3.5 L154.0,3.6 L153.5,2.8 L153.0,2.9 L152.5,2.7 L152.0,2.7 L151.5,2.6 L151.0,3.2 L150.5,3.0 L150.0,3.4 L149.5,3.7 L149.0,4.1 L148.5,4.5 L148.0,3.1 L147.5,3.1 L147.0,4.9 L146.5,3.8 L146.0,4.5 L145.5,4.6 L145.0,3.3 L144.5,3.8 L144.0,3.2 L143.5,3.0 L143.0,3.5 L142.5,3.9 L142.0,3.2 L141.5,3.5 L141.0,5.5 L140.5,4.9 L140.0,4.7 L139.5,5.2 L139.0,4.4 L138.5,5.5 L138.0,3.6 L137.5,5.4 L137.0,4.9 L136.5,4.4 L136.0,4.8 L135.5,4.5 L135.0,3.9 L134.5,4.2 L134.0,4.7 L133.5,5.4 L133.0,3.8 L132.5,3.6 L132.0,5.5 L131.5,4.4 L131.0,4.4 L130.5,4.0 L130.0,4.9 L129.5,4.6 L129.0,5.9 L128.5,5.9 L128.0,5.5 L127.5,6.6 L127.0,7.2 L126.5,7.0 L126.0,6.1 L125.5,6.0 L125.0,5.5 L124.5,7.2 L124.0,5.8 L123.5,6.4 L123.0,5.9 L122.5,5.9 L122.0,9.0 L121.5,6.6 L121.0,7.1 L120.5,10.8 L120.0,8.9 L119.5,11.2 L119.0,9.6 L118.5,10.4 L118.0,8.1 L117.5,12.8 L117.0,13.4 L116.5,8.9 L116.0,8.7 L115.5,10.4 L115.0,9.1 L114.5,8.3 L114.0,9.6 L113.5,9.7 L113.0,10.8 L112.5,10.1 L112.0,14.2 L111.5,14.2 L111.0,9.6 L110.5,11.5 L110.0,11.0 L109.5,9.6 L109.0,7.4 L108.5,10.9 L108.0,8.8 L107.5,9.2 L107.0,7.4 L106.5,10.2 L106.0,9.4 L105.5,9.2 L105.0,9.7 L104.5,8.7 L104.0,8.4 L103.5,10.8 L103.0,8.6 L102.5,7.6 L102.0,9.1 L101.5,10.4 L101.0,9.2 L100.5,7.8 L100.0,9.2 L99.5,9.2 L99.0,10.0 L98.5,13.1 L98.0,9.9 L97.5,8.4 L97.0,9.5 L96.5,9.7 L96.0,8.6 L95.5,10.4 L95.0,11.7 L94.5,8.8 L94.0,8.7 L93.5,13.1 L93.0,13.0 L92.5,15.1 L92.0,15.3 L91.5,15.9 L91.0,13.3 L90.5,15.3 L90.0,12.9 L89.5,15.3 L89.0,16.1 L88.5,16.5 L88.0,11.0 L87.5,15.1 L87.0,9.1 L86.5,9.2 L86.0,11.3 L85.5,15.0 L85.0,13.6 L84.5,10.5 L84.0,10.7 L83.5,16.3 L83.0,17.9 L82.5,15.0 L82.0,18.7 L81.5,17.5 L81.0,18.8 L80.5,20.5 L80.0,18.6 L79.5,14.2 L79.0,12.3 L78.5,17.7 L78.0,13.9 L77.5,12.9 L77.0,16.0 L76.5,14.1 L76.0,10.8 L75.5,11.1 L75.0,14.8 L74.5,14.0 L74.0,12.6 L73.5,14.2 L73.0,18.1 L72.5,18.2 L72.0,20.5 L71.5,18.4 L71.0,19.7 L70.5,11.6 L70.0,16.5 L69.5,11.8 L69.0,14.9 L68.5,11.3 L68.0,14.4 L67.5,15.0 L67.0,19.1 L66.5,14.8 L66.0,18.9 L65.5,12.5 L65.0,13.3 L64.5,16.1 L64.0,11.9 L63.5,11.4 L63.0,11.6 L62.5,10.4 L62.0,8.4 L61.5,13.5 L61.0,11.2 L60.5,8.9 L60.0,13.1 L59.5,11.2 L59.0,9.9 L58.5,10.9 L58.0,11.7 L57.5,11.3 L57.0,10.4 L56.5,9.8 L56.0,11.2 L55.5,7.6 L55.0,9.4 L54.5,7.0 L54.0,5.7 L53.5,8.6 L53.0,7.3 L52.5,6.1 L52.0,6.8 L51.5,9.4 L51.0,7.3 L50.5,9.3 L50.0,7.8 L49.5,9.1 L49.0,9.2 L48.5,6.4 L48.0,7.0 L47.5,8.6 L47.0,9.2 L46.5,7.5 L46.0,12.0 L45.5,11.3 L45.0,14.0 L44.5,12.1 L44.0,11.0 L43.5,13.8 L43.0,14.0 L42.5,12.8 L42.0,12.7 L41.5,13.1 L41.0,11.5 L40.5,9.8 L40.0,10.7 L39.5,8.8 L39.0,10.0 L38.5,12.5 L38.0,12.0 L37.5,10.6 L37.0,11.7 L36.5,10.3 L36.0,13.4 L35.5,14.1 L35.0,11.1 L34.5,12.3 L34.0,9.4 L33.5,12.8 L33.0,12.3 L32.5,13.7 L32.0,15.6 L31.5,16.5 L31.0,17.3 L30.5,20.6 L30.0,15.0 L29.5,17.7 L29.0,21.2 L28.5,19.8 L28.0,15.1 L27.5,17.8 L27.0,14.3 L26.5,16.9 L26.0,15.7 L25.5,14.2 L25.0,12.4 L24.5,17.9 L24.0,15.1 L23.5,18.4 L23.0,13.8 L22.5,13.9 L22.0,15.4 L21.5,15.5 L21.0,12.1 L20.5,14.1 L20.0,9.4 L19.5,11.0 L19.0,12.6 L18.5,8.9 L18.0,8.4 L17.5,9.2 L17.0,9.8 L16.5,12.7 L16.0,13.3 L15.5,9.8 L15.0,9.2 L14.5,8.5 L14.0,10.7 L13.5,10.6 L13.0,10.4 L12.5,6.4 L12.0,6.1 L11.5,7.4 L11.0,7.5 L10.5,6.6 L10.0,8.1 L9.5,5.1 L9.0,6.3 L8.5,4.2 L8.0,4.3 L7.5,4.4 L7.0,3.5 L6.5,3.5 L6.0,2.3 L5.5,2.1 L5.0,2.9 L4.5,1.9 L4.0,2.3 L3.5,1.9 L3.0,2.4 L2.5,1.5 L2.0,1.4 L1.5,1.1 L1.0,1.3 L0.5,0.9 L0.0,1.2Z" fill="#ff9900"/></g><rect x="169.6" y="3" width="1" height="70" fill="#ff9900" fill-opacity="0.7"/></svg><div class="hot">Hot</div><div class="lbl">Ambient (0:14)</div></div>
<div class="card" style="left:422px;top:307px"><svg class="wf" width="171" height="109" viewBox="0 0 171 109"><g transform="translate(1,38)"><path d="M0.1,-3.4V3.8M0.5,-3.8V4.1M1.6,-3.4V3.3M2.3,-3.6V3.6M2.6,-3.9V3.6M3.2,-3.3V3.9M3.8,-4.1V3.7M4.1,-4.5V4.3M4.7,-5.2V6.9M5.1,-7.9V5.5M5.6,-8.1V7.0M6.3,-8.5V10.0M6.6,-9.7V8.0M7.3,-9.9V7.8M7.7,-7.6V6.9M8.2,-5.4V5.3M8.8,-6.9V7.0M9.2,-6.3V6.9M9.5,-6.7V6.2M10.2,-5.5V4.4M10.5,-5.4V5.4M11.3,-6.8V7.6M11.8,-12.3V11.3M12.2,-15.1V12.9M12.7,-15.3V17.1M13.1,-15.9V17.2M13.7,-22.3V17.9M14.1,-18.3V16.1M14.8,-15.6V17.2M15.1,-14.3V16.1M15.8,-13.3V10.0M16.3,-8.5V10.9M16.5,-9.0V12.4M17.1,-10.9V8.1M17.5,-9.0V9.2M18.1,-6.1V5.9M18.6,-8.2V8.5M19.7,-5.0V6.4M20.3,-5.8V6.2M21.2,-9.0V9.1M22.1,-8.5V7.6M22.5,-8.8V7.5M23.2,-7.5V7.8M23.6,-6.4V8.8M24.1,-6.4V8.4M24.6,-5.8V5.3M25.0,-7.2V5.7M25.6,-4.6V5.3M26.2,-5.0V5.7M26.6,-4.3V6.5M27.2,-8.0V9.3M28.1,-16.3V12.7M28.6,-19.6V20.1M29.1,-22.0V20.1M29.7,-19.7V15.5M30.0,-14.4V19.7M30.6,-11.6V17.1M31.2,-15.7V10.4M31.7,-14.1V9.3M32.1,-11.1V12.5M32.5,-8.1V12.3M33.2,-7.5V7.9M33.5,-7.9V9.3M34.1,-10.0V8.6M34.7,-8.0V8.9M35.2,-8.1V7.3M35.5,-7.2V7.3M36.2,-6.7V7.1M37.3,-5.0V5.7M37.8,-7.6V7.0M38.2,-11.0V9.4M38.5,-13.8V11.0M39.2,-16.7V18.6M39.8,-16.8V24.0M40.0,-20.9V20.5M40.7,-19.3V20.0M41.1,-15.1V14.8M42.6,-12.5V12.1M43.3,-9.0V11.2M43.6,-8.7V11.2M44.0,-9.4V9.3M44.7,-7.7V9.4M45.3,-7.0V6.9M45.6,-5.8V7.9M46.0,-6.6V7.2M46.7,-5.6V6.8M47.3,-7.4V7.4M47.5,-5.7V5.1M48.7,-10.8V8.2M49.2,-9.4V8.7M49.7,-9.8V8.1M50.3,-5.8V7.9M50.8,-6.7V7.4M51.1,-6.7V5.4M51.6,-6.3V6.2M52.2,-10.4V9.1M52.7,-11.5V12.8M53.1,-16.2V15.7M53.6,-21.5V17.0M54.2,-23.1V24.6M54.8,-16.9V20.7M55.0,-18.3V20.2M55.6,-14.7V12.2M56.3,-13.3V13.5M56.7,-13.4V12.2M57.0,-12.5V11.9M57.6,-10.5V10.6M58.0,-8.5V6.8M58.7,-7.3V8.4M59.3,-6.4V7.3M59.7,-7.5V7.4M60.0,-5.4V7.0M60.6,-6.1V6.7M61.0,-5.7V6.1M61.7,-4.7V4.5M62.7,-8.0V7.7M63.1,-10.1V10.3M63.7,-11.8V9.0M64.1,-10.4V11.0M64.7,-9.5V8.0M65.1,-7.0V9.6M65.5,-7.2V5.7M66.3,-5.6V7.2M66.6,-5.8V5.3M67.3,-4.6V5.7M67.7,-7.7V7.6M68.2,-11.1V8.6M69.7,-20.0V20.3M70.3,-16.0V15.5M70.5,-15.1V13.8M71.1,-17.5V17.2M71.5,-14.6V12.7M72.3,-9.3V10.6M73.0,-11.4V9.9M73.6,-10.2V7.4M74.1,-8.0V7.8M74.8,-6.8V8.4M75.0,-8.8V9.3M75.8,-8.1V9.8M76.1,-7.1V9.6M76.7,-6.8V6.5M77.1,-8.3V8.7M77.7,-5.3V5.7M78.6,-7.9V7.5M79.2,-13.4V12.0M79.6,-15.5V13.7M80.1,-18.2V14.9M80.7,-18.9V19.0M81.2,-19.4V15.9M81.6,-14.6V13.2M82.1,-11.7V14.3M82.6,-10.4V10.7M83.0,-12.5V13.2M84.1,-9.9V7.8M84.6,-9.2V9.9M85.0,-11.0V10.2M85.8,-8.5V5.6M86.1,-6.4V6.9M86.5,-5.6V6.8M87.1,-6.0V7.6M87.7,-6.3V4.5M88.2,-6.6V6.2M89.2,-5.2V5.0M89.5,-5.8V5.7M90.3,-9.9V8.2M90.5,-10.8V7.2M91.2,-8.6V7.7M91.7,-8.3V7.0M92.0,-6.8V8.7M92.7,-7.1V7.8M93.7,-5.7V6.3M94.7,-7.3V7.3M95.1,-10.3V9.1M95.7,-11.6V14.6M96.1,-18.2V15.2M96.5,-17.7V21.8M97.1,-21.1V24.2M97.7,-20.0V21.1M98.3,-18.4V14.3M98.5,-15.3V15.8M99.0,-14.9V11.5M100.2,-10.9V11.9M100.5,-7.6V11.2M101.0,-9.6V9.6M101.8,-5.9V8.3M102.6,-6.6V6.3M103.2,-7.5V8.0M103.8,-10.5V10.1M104.1,-9.8V9.4M104.6,-8.4V8.5M105.7,-8.1V7.2M106.1,-7.4V5.3M107.1,-6.9V7.2M107.7,-6.2V6.3M108.2,-8.8V9.9M108.6,-14.4V14.5M109.3,-17.4V16.3M109.5,-18.0V20.5M110.1,-18.8V19.8M110.8,-21.6V18.9M111.1,-15.9V16.3M111.6,-16.8V14.1M112.3,-11.6V11.1M112.7,-14.5V10.7M113.2,-11.5V10.1M113.6,-9.2V10.9M114.3,-8.5V8.9M114.8,-7.2V7.0M115.3,-8.3V8.5M115.8,-6.7V6.6M116.1,-7.1V9.5M116.8,-8.0V9.9M117.1,-8.9V9.3M117.6,-9.5V10.5M118.2,-6.1V8.5M118.6,-5.5V9.0M119.0,-6.2V5.9M119.7,-5.6V6.4M120.2,-7.2V6.7M120.6,-5.0V4.8M121.0,-4.8V6.5M121.5,-5.4V5.1M122.2,-9.5V9.5M122.5,-12.1V14.2M123.2,-18.8V19.4M123.6,-17.1V19.7M124.1,-24.9V17.8M124.6,-21.7V17.6M125.3,-15.7V15.5M125.7,-16.2V12.8M126.1,-11.2V14.3M126.6,-14.4V10.2M127.1,-11.4V12.2M127.6,-11.5V10.5M128.6,-8.9V7.9M129.0,-7.6V8.7M129.8,-9.0V9.6M130.3,-7.4V10.5M130.6,-7.3V6.5M131.1,-8.4V6.5M131.7,-8.3V7.2M132.1,-6.7V4.6M132.6,-4.3V4.7M133.0,-4.3V5.0M134.2,-4.4V5.3M134.5,-5.6V5.5M135.3,-11.1V9.4M135.7,-14.2V14.9M136.1,-16.2V16.7M136.5,-19.2V20.9M137.1,-19.1V19.3M137.7,-17.7V17.0M138.1,-13.9V14.5M138.6,-13.2V17.4M139.0,-11.4V14.6M139.5,-13.4V10.2M140.2,-11.7V9.7M140.7,-7.4V8.4M141.1,-10.2V6.4M141.5,-6.9V6.9M142.1,-8.2V8.2M142.8,-7.3V5.4M143.2,-6.0V6.9M143.6,-5.9V5.1M144.0,-7.2V6.4M144.7,-9.7V7.8M145.1,-11.4V8.8M145.6,-9.0V6.8M146.3,-7.9V5.6M146.6,-6.3V6.0M147.0,-7.5V8.0M147.6,-6.6V6.9M148.3,-6.0V4.9M148.6,-4.5V4.8M149.7,-5.7V5.2M150.1,-5.3V5.3M150.8,-7.0V7.3M151.1,-10.0V9.1M151.8,-12.1V16.1M152.2,-16.9V18.8M152.5,-18.9V18.2M153.2,-21.6V17.4M153.5,-17.8V18.8M154.6,-13.3V10.8M155.3,-13.2V12.3M156.1,-8.0V10.2M156.7,-9.5V8.5M157.1,-10.2V7.6M157.6,-7.7V8.1M158.2,-6.0V7.1M159.2,-9.8V9.1M159.6,-10.7V10.6M160.0,-9.2V11.6M160.5,-10.2V8.1M161.2,-6.7V7.7M161.5,-8.8V8.7M162.2,-7.6V6.6M162.8,-6.7V7.1M163.2,-4.3V4.7M163.7,-5.5V5.8M164.3,-8.9V11.3M164.5,-11.6V10.6M165.1,-15.9V14.8M165.5,-18.7V14.2M166.1,-18.6V19.7M166.8,-17.6V18.7M167.1,-12.5V15.0M167.6,-16.2V12.4M168.0,-10.4V13.5M168.5,-10.1V12.5M169.6,-10.7V10.3" stroke="#ff9900" stroke-width="0.6" stroke-opacity="0.8" fill="none"/><path d="M0.0,-3.6 L0.5,-2.7 L1.0,-2.7 L1.5,-3.7 L2.0,-3.0 L2.5,-3.1 L3.0,-3.8 L3.5,-3.1 L4.0,-3.6 L4.5,-4.0 L5.0,-5.8 L5.5,-6.6 L6.0,-7.2 L6.5,-6.8 L7.0,-6.6 L7.5,-4.8 L8.0,-4.7 L8.5,-5.2 L9.0,-3.7 L9.5,-4.3 L10.0,-3.5 L10.5,-4.2 L11.0,-4.8 L11.5,-7.4 L12.0,-9.2 L12.5,-10.3 L13.0,-13.5 L13.5,-14.5 L14.0,-16.2 L14.5,-12.0 L15.0,-10.6 L15.5,-10.0 L16.0,-10.3 L16.5,-6.5 L17.0,-6.0 L17.5,-7.1 L18.0,-6.3 L18.5,-6.4 L19.0,-4.4 L19.5,-5.7 L20.0,-4.5 L20.5,-5.2 L21.0,-5.4 L21.5,-5.8 L22.0,-7.1 L22.5,-6.0 L23.0,-5.3 L23.5,-5.9 L24.0,-5.8 L24.5,-5.2 L25.0,-5.2 L25.5,-4.6 L26.0,-4.9 L26.5,-4.1 L27.0,-7.1 L27.5,-10.3 L28.0,-11.0 L28.5,-13.3 L29.0,-17.0 L29.5,-16.8 L30.0,-12.0 L30.5,-9.9 L31.0,-9.7 L31.5,-9.3 L32.0,-7.3 L32.5,-9.0 L33.0,-7.6 L33.5,-6.0 L34.0,-5.2 L34.5,-6.3 L35.0,-5.7 L35.5,-4.3 L36.0,-4.1 L36.5,-4.4 L37.0,-3.5 L37.5,-5.6 L38.0,-8.1 L38.5,-9.6 L39.0,-13.0 L39.5,-13.7 L40.0,-16.3 L40.5,-13.6 L41.0,-11.6 L41.5,-11.3 L42.0,-10.1 L42.5,-8.3 L43.0,-7.8 L43.5,-8.6 L44.0,-7.0 L44.5,-6.5 L45.0,-5.5 L45.5,-6.1 L46.0,-5.0 L46.5,-3.7 L47.0,-4.7 L47.5,-5.2 L48.0,-5.2 L48.5,-6.3 L49.0,-5.8 L49.5,-6.9 L50.0,-5.5 L50.5,-6.0 L51.0,-5.3 L51.5,-4.1 L52.0,-5.6 L52.5,-10.2 L53.0,-13.1 L53.5,-13.7 L54.0,-15.8 L54.5,-17.7 L55.0,-12.4 L55.5,-10.8 L56.0,-11.2 L56.5,-9.6 L57.0,-8.6 L57.5,-7.5 L58.0,-6.4 L58.5,-7.3 L59.0,-6.8 L59.5,-5.5 L60.0,-4.5 L60.5,-4.1 L61.0,-3.8 L61.5,-3.8 L62.0,-4.4 L62.5,-5.4 L63.0,-7.3 L63.5,-7.3 L64.0,-7.3 L64.5,-5.9 L65.0,-6.8 L65.5,-5.5 L66.0,-5.4 L66.5,-5.4 L67.0,-3.9 L67.5,-4.6 L68.0,-7.1 L68.5,-10.4 L69.0,-12.9 L69.5,-12.1 L70.0,-18.1 L70.5,-13.0 L71.0,-10.4 L71.5,-11.8 L72.0,-7.6 L72.5,-7.2 L73.0,-8.6 L73.5,-6.2 L74.0,-5.9 L74.5,-7.2 L75.0,-8.0 L75.5,-8.1 L76.0,-6.4 L76.5,-7.0 L77.0,-6.5 L77.5,-5.9 L78.0,-4.4 L78.5,-6.6 L79.0,-7.8 L79.5,-9.8 L80.0,-15.1 L80.5,-18.8 L81.0,-13.4 L81.5,-11.7 L82.0,-13.3 L82.5,-8.9 L83.0,-10.0 L83.5,-7.7 L84.0,-7.2 L84.5,-7.0 L85.0,-6.9 L85.5,-6.1 L86.0,-5.0 L86.5,-5.7 L87.0,-5.5 L87.5,-3.8 L88.0,-4.6 L88.5,-4.3 L89.0,-4.6 L89.5,-5.5 L90.0,-6.1 L90.5,-6.2 L91.0,-7.1 L91.5,-5.4 L92.0,-4.7 L92.5,-6.1 L93.0,-4.8 L93.5,-4.0 L94.0,-5.0 L94.5,-5.2 L95.0,-6.7 L95.5,-9.7 L96.0,-15.1 L96.5,-18.6 L97.0,-15.3 L97.5,-16.7 L98.0,-11.2 L98.5,-11.9 L99.0,-9.2 L99.5,-7.5 L100.0,-7.5 L100.5,-6.0 L101.0,-6.9 L101.5,-5.2 L102.0,-5.4 L102.5,-5.6 L103.0,-4.8 L103.5,-7.1 L104.0,-6.7 L104.5,-6.2 L105.0,-5.2 L105.5,-5.7 L106.0,-5.3 L106.5,-5.0 L107.0,-4.4 L107.5,-4.9 L108.0,-6.2 L108.5,-8.7 L109.0,-11.6 L109.5,-15.3 L110.0,-15.8 L110.5,-16.9 L111.0,-15.2 L111.5,-10.7 L112.0,-11.0 L112.5,-8.8 L113.0,-7.4 L113.5,-7.5 L114.0,-7.6 L114.5,-7.1 L115.0,-5.6 L115.5,-6.0 L116.0,-5.2 L116.5,-5.4 L117.0,-8.0 L117.5,-7.1 L118.0,-6.7 L118.5,-4.7 L119.0,-4.5 L119.5,-4.7 L120.0,-3.9 L120.5,-3.9 L121.0,-3.6 L121.5,-4.2 L122.0,-7.1 L122.5,-10.3 L123.0,-11.8 L123.5,-13.6 L124.0,-15.5 L124.5,-13.7 L125.0,-13.1 L125.5,-12.9 L126.0,-11.3 L126.5,-11.3 L127.0,-8.6 L127.5,-8.3 L128.0,-7.7 L128.5,-6.4 L129.0,-5.7 L129.5,-6.5 L130.0,-7.8 L130.5,-7.3 L131.0,-5.8 L131.5,-5.2 L132.0,-3.8 L132.5,-3.7 L133.0,-4.3 L133.5,-3.7 L134.0,-4.5 L134.5,-4.9 L135.0,-6.7 L135.5,-9.7 L136.0,-13.9 L136.5,-13.7 L137.0,-19.6 L137.5,-12.7 L138.0,-11.5 L138.5,-12.3 L139.0,-10.3 L139.5,-9.3 L140.0,-8.9 L140.5,-7.8 L141.0,-7.4 L141.5,-5.7 L142.0,-6.2 L142.5,-4.3 L143.0,-4.0 L143.5,-4.1 L144.0,-5.8 L144.5,-7.3 L145.0,-6.1 L145.5,-5.3 L146.0,-5.0 L146.5,-4.9 L147.0,-4.3 L147.5,-4.8 L148.0,-4.0 L148.5,-4.7 L149.0,-4.2 L149.5,-4.8 L150.0,-4.7 L150.5,-5.1 L151.0,-8.5 L151.5,-8.4 L152.0,-13.2 L152.5,-13.2 L153.0,-14.6 L153.5,-14.6 L154.0,-13.5 L154.5,-12.1 L155.0,-7.9 L155.5,-8.5 L156.0,-7.7 L156.5,-5.9 L157.0,-5.7 L157.5,-5.8 L158.0,-5.9 L158.5,-5.3 L159.0,-6.6 L159.5,-7.4 L160.0,-7.5 L160.5,-6.8 L161.0,-5.4 L161.5,-4.4 L162.0,-4.3 L162.5,-4.4 L163.0,-4.5 L163.5,-4.6 L164.0,-6.2 L164.5,-8.2 L165.0,-13.0 L165.5,-14.4 L166.0,-16.2 L166.5,-11.7 L167.0,-12.8 L167.5,-9.3 L168.0,-9.4 L168.5,-10.0 L169.0,-7.6 L169.5,-6.1 L170.0,-7.4 L170.0,7.2 L169.5,6.5 L169.0,7.5 L168.5,7.4 L168.0,11.9 L167.5,10.1 L167.0,12.5 L166.5,12.0 L166.0,16.9 L165.5,14.1 L165.0,11.5 L164.5,7.7 L164.0,6.3 L163.5,4.1 L163.0,3.9 L162.5,4.9 L162.0,4.4 L161.5,5.1 L161.0,5.6 L160.5,5.9 L160.0,6.3 L159.5,7.5 L159.0,6.5 L158.5,5.2 L158.0,5.8 L157.5,6.2 L157.0,5.7 L156.5,6.9 L156.0,6.1 L155.5,7.8 L155.0,9.0 L154.5,12.1 L154.0,12.4 L153.5,13.8 L153.0,17.5 L152.5,17.4 L152.0,13.2 L151.5,8.5 L151.0,8.4 L150.5,4.0 L150.0,4.4 L149.5,4.2 L149.0,3.7 L148.5,4.3 L148.0,3.8 L147.5,4.6 L147.0,4.3 L146.5,4.7 L146.0,6.5 L145.5,5.1 L145.0,8.1 L144.5,6.2 L144.0,5.7 L143.5,5.2 L143.0,4.1 L142.5,5.7 L142.0,5.2 L141.5,5.2 L141.0,6.6 L140.5,6.7 L140.0,7.3 L139.5,10.5 L139.0,11.4 L138.5,12.1 L138.0,12.6 L137.5,15.5 L137.0,17.0 L136.5,13.7 L136.0,11.9 L135.5,10.4 L135.0,7.1 L134.5,4.5 L134.0,3.1 L133.5,3.9 L133.0,4.0 L132.5,4.4 L132.0,5.1 L131.5,5.0 L131.0,5.3 L130.5,6.2 L130.0,6.9 L129.5,6.4 L129.0,7.2 L128.5,6.8 L128.0,8.4 L127.5,6.9 L127.0,8.5 L126.5,10.7 L126.0,9.7 L125.5,12.7 L125.0,14.2 L124.5,14.2 L124.0,19.0 L123.5,13.5 L123.0,13.1 L122.5,9.9 L122.0,7.8 L121.5,4.4 L121.0,3.5 L120.5,3.8 L120.0,4.3 L119.5,4.9 L119.0,4.5 L118.5,6.1 L118.0,6.8 L117.5,6.8 L117.0,6.1 L116.5,6.4 L116.0,4.8 L115.5,6.3 L115.0,6.0 L114.5,7.2 L114.0,8.3 L113.5,7.8 L113.0,8.2 L112.5,9.1 L112.0,11.4 L111.5,10.9 L111.0,14.4 L110.5,15.0 L110.0,16.5 L109.5,17.2 L109.0,14.3 L108.5,9.1 L108.0,7.9 L107.5,4.0 L107.0,4.7 L106.5,5.6 L106.0,4.7 L105.5,5.8 L105.0,5.9 L104.5,6.9 L104.0,7.1 L103.5,5.6 L103.0,4.8 L102.5,4.7 L102.0,4.5 L101.5,6.3 L101.0,7.3 L100.5,7.8 L100.0,7.1 L99.5,8.2 L99.0,8.7 L98.5,12.1 L98.0,15.6 L97.5,16.5 L97.0,20.0 L96.5,17.1 L96.0,13.1 L95.5,10.4 L95.0,7.5 L94.5,4.5 L94.0,5.3 L93.5,5.0 L93.0,4.1 L92.5,5.6 L92.0,6.8 L91.5,6.2 L91.0,7.9 L90.5,5.3 L90.0,5.7 L89.5,4.3 L89.0,3.9 L88.5,3.6 L88.0,4.1 L87.5,4.1 L87.0,4.6 L86.5,4.2 L86.0,4.4 L85.5,6.7 L85.0,7.5 L84.5,6.5 L84.0,6.8 L83.5,6.7 L83.0,9.6 L82.5,10.6 L82.0,10.2 L81.5,14.4 L81.0,14.6 L80.5,17.0 L80.0,11.7 L79.5,12.1 L79.0,8.9 L78.5,6.9 L78.0,4.3 L77.5,4.5 L77.0,6.0 L76.5,6.4 L76.0,7.9 L75.5,7.3 L75.0,6.9 L74.5,6.4 L74.0,7.8 L73.5,7.0 L73.0,9.0 L72.5,8.8 L72.0,8.5 L71.5,10.0 L71.0,11.5 L70.5,12.6 L70.0,18.0 L69.5,15.9 L69.0,13.2 L68.5,9.2 L68.0,7.5 L67.5,5.2 L67.0,4.7 L66.5,4.9 L66.0,6.1 L65.5,6.2 L65.0,5.3 L64.5,5.6 L64.0,6.9 L63.5,7.2 L63.0,6.0 L62.5,4.9 L62.0,4.2 L61.5,4.6 L61.0,5.2 L60.5,4.2 L60.0,4.6 L59.5,6.3 L59.0,6.9 L58.5,5.2 L58.0,5.8 L57.5,6.0 L57.0,6.7 L56.5,9.6 L56.0,12.1 L55.5,13.1 L55.0,14.2 L54.5,17.7 L54.0,20.0 L53.5,14.6 L53.0,12.8 L52.5,10.0 L52.0,7.7 L51.5,5.6 L51.0,4.3 L50.5,4.6 L50.0,6.0 L49.5,5.5 L49.0,6.6 L48.5,6.8 L48.0,4.5 L47.5,4.2 L47.0,3.7 L46.5,3.7 L46.0,4.6 L45.5,4.6 L45.0,6.1 L44.5,6.8 L44.0,7.2 L43.5,7.4 L43.0,7.7 L42.5,8.4 L42.0,8.7 L41.5,12.1 L41.0,11.2 L40.5,12.3 L40.0,18.3 L39.5,13.7 L39.0,12.2 L38.5,9.1 L38.0,7.0 L37.5,4.6 L37.0,3.5 L36.5,4.4 L36.0,4.8 L35.5,5.4 L35.0,5.1 L34.5,6.7 L34.0,7.4 L33.5,6.5 L33.0,6.2 L32.5,8.5 L32.0,7.5 L31.5,11.0 L31.0,12.3 L30.5,13.2 L30.0,15.0 L29.5,17.7 L29.0,13.3 L28.5,12.5 L28.0,12.4 L27.5,10.2 L27.0,5.6 L26.5,4.5 L26.0,4.9 L25.5,5.1 L25.0,3.9 L24.5,4.2 L24.0,5.3 L23.5,5.5 L23.0,5.3 L22.5,7.2 L22.0,7.0 L21.5,5.3 L21.0,4.7 L20.5,4.6 L20.0,5.2 L19.5,5.1 L19.0,4.6 L18.5,6.2 L18.0,5.6 L17.5,5.6 L17.0,5.9 L16.5,7.8 L16.0,8.2 L15.5,11.1 L15.0,11.0 L14.5,13.0 L14.0,16.0 L13.5,16.3 L13.0,16.0 L12.5,11.3 L12.0,9.2 L11.5,6.5 L11.0,5.6 L10.5,3.3 L10.0,3.8 L9.5,3.9 L9.0,3.8 L8.5,4.2 L8.0,5.1 L7.5,6.1 L7.0,5.9 L6.5,6.7 L6.0,7.1 L5.5,5.7 L5.0,5.4 L4.5,5.2 L4.0,4.4 L3.5,3.5 L3.0,2.7 L2.5,2.8 L2.0,3.1 L1.5,3.4 L1.0,3.0 L0.5,3.5 L0.0,3.4Z" fill="#ff9900"/></g><rect x="169.6" y="3" width="1" height="70" fill="#ff9900" fill-opacity="0.7"/></svg><div class="hot">Hot</div><div class="lbl">Rock Guitar (0:06)</div></div>
<div class="card" style="left:617px;top:307px"><svg class="wf" width="171" height="109" viewBox="0 0 171 109"><g transform="translate(1,38)"><path d="M0.2,-1.2V1.2M1.0,-1.2V1.6M3.1,-1.5V1.5M4.3,-1.3V1.3M5.6,-1.3V1.6M8.0,-1.1V1.6M10.5,-1.2V1.6M11.4,-1.7V1.5M12.2,-2.4V2.6M14.0,-3.3V4.1M15.6,-2.5V2.7M20.2,-1.8V2.2M21.0,-2.1V1.7M22.0,-1.8V1.6M24.6,-1.3V1.3M26.3,-1.4V1.6M32.1,-1.2V1.1M34.2,-3.4V2.7M39.5,-2.2V2.1M43.3,-1.8V2.0M45.4,-1.5V1.4M46.1,-1.6V1.6M47.1,-1.5V1.7M48.1,-1.4V1.8M49.3,-1.4V1.5M51.1,-1.7V1.6M52.2,-1.9V1.5M53.3,-2.3V2.7M54.6,-2.9V3.5M55.1,-4.0V3.3M58.1,-2.6V2.7M59.5,-2.5V2.3M60.3,-2.1V2.3M61.6,-1.9V2.2M62.6,-1.5V2.1M70.1,-1.3V1.4M71.2,-1.2V1.5M72.5,-1.3V1.5M79.3,-2.8V2.7M83.1,-1.9V1.7M92.5,-1.8V1.4M95.6,-2.3V2.7M99.6,-2.1V2.3M100.2,-1.9V1.9M102.5,-2.1V1.6M106.5,-2.0V1.7M109.3,-1.7V1.5M114.4,-1.2V1.2M117.5,-2.3V2.6M118.0,-2.6V2.5M119.2,-3.4V3.4M121.3,-3.1V2.4M122.1,-2.5V2.8M124.2,-2.2V2.1M127.4,-2.1V1.7M129.1,-1.9V1.5M131.1,-1.6V1.5M133.1,-1.3V1.3M135.4,-1.7V1.6M137.3,-1.3V1.3M138.0,-1.6V1.5M142.3,-3.3V3.7M144.0,-2.4V2.9M147.2,-2.3V2.0M153.2,-1.5V1.2M154.5,-1.2V1.2M155.6,-1.3V1.3M158.4,-1.8V1.7M160.5,-3.6V3.6M161.6,-2.7V2.6M165.2,-2.0V2.5M166.1,-2.0V1.7M167.2,-2.0V1.7M170.4,-1.6V1.7" stroke="#ff9900" stroke-width="0.6" stroke-opacity="0.8" fill="none"/><path d="M0.0,-1.2 L0.5,-1.0 L1.0,-1.2 L1.5,-1.1 L2.0,-1.3 L2.5,-1.2 L3.0,-1.2 L3.5,-1.3 L4.0,-1.0 L4.5,-1.2 L5.0,-1.2 L5.5,-1.0 L6.0,-1.4 L6.5,-1.1 L7.0,-1.4 L7.5,-1.1 L8.0,-1.3 L8.5,-1.2 L9.0,-1.0 L9.5,-1.2 L10.0,-0.9 L10.5,-1.0 L11.0,-1.2 L11.5,-1.3 L12.0,-1.8 L12.5,-2.2 L13.0,-2.6 L13.5,-2.8 L14.0,-2.4 L14.5,-3.0 L15.0,-2.9 L15.5,-2.3 L16.0,-2.4 L16.5,-1.7 L17.0,-1.7 L17.5,-1.5 L18.0,-1.5 L18.5,-1.6 L19.0,-2.0 L19.5,-1.4 L20.0,-1.6 L20.5,-1.4 L21.0,-2.0 L21.5,-1.6 L22.0,-1.3 L22.5,-1.3 L23.0,-1.2 L23.5,-1.5 L24.0,-1.1 L24.5,-1.0 L25.0,-1.5 L25.5,-1.4 L26.0,-1.2 L26.5,-1.4 L27.0,-1.5 L27.5,-1.1 L28.0,-1.5 L28.5,-1.3 L29.0,-1.3 L29.5,-1.1 L30.0,-0.9 L30.5,-1.0 L31.0,-1.2 L31.5,-1.1 L32.0,-1.3 L32.5,-1.2 L33.0,-1.4 L33.5,-1.7 L34.0,-2.5 L34.5,-2.5 L35.0,-3.2 L35.5,-2.9 L36.0,-2.9 L36.5,-2.5 L37.0,-2.7 L37.5,-2.7 L38.0,-2.2 L38.5,-2.7 L39.0,-1.9 L39.5,-1.8 L40.0,-2.1 L40.5,-2.0 L41.0,-1.8 L41.5,-1.6 L42.0,-1.2 L42.5,-1.5 L43.0,-1.6 L43.5,-1.6 L44.0,-1.2 L44.5,-1.2 L45.0,-1.4 L45.5,-1.3 L46.0,-1.6 L46.5,-1.3 L47.0,-1.6 L47.5,-1.6 L48.0,-1.4 L48.5,-1.1 L49.0,-1.2 L49.5,-1.6 L50.0,-1.4 L50.5,-1.5 L51.0,-1.5 L51.5,-1.6 L52.0,-1.4 L52.5,-1.5 L53.0,-1.9 L53.5,-2.4 L54.0,-2.4 L54.5,-2.7 L55.0,-3.2 L55.5,-2.9 L56.0,-3.1 L56.5,-2.9 L57.0,-2.1 L57.5,-2.7 L58.0,-1.9 L58.5,-2.2 L59.0,-2.0 L59.5,-2.3 L60.0,-2.5 L60.5,-2.1 L61.0,-1.6 L61.5,-2.0 L62.0,-1.9 L62.5,-1.5 L63.0,-1.5 L63.5,-1.3 L64.0,-1.3 L64.5,-1.3 L65.0,-1.2 L65.5,-1.5 L66.0,-1.4 L66.5,-1.5 L67.0,-1.7 L67.5,-1.6 L68.0,-1.2 L68.5,-1.4 L69.0,-1.0 L69.5,-1.4 L70.0,-1.1 L70.5,-1.4 L71.0,-1.2 L71.5,-0.9 L72.0,-1.1 L72.5,-1.3 L73.0,-1.2 L73.5,-1.3 L74.0,-1.3 L74.5,-1.2 L75.0,-1.9 L75.5,-1.6 L76.0,-1.9 L76.5,-2.1 L77.0,-2.4 L77.5,-2.4 L78.0,-2.3 L78.5,-2.1 L79.0,-1.9 L79.5,-1.9 L80.0,-2.3 L80.5,-2.2 L81.0,-1.9 L81.5,-2.0 L82.0,-2.2 L82.5,-1.8 L83.0,-2.0 L83.5,-1.8 L84.0,-1.6 L84.5,-1.4 L85.0,-1.3 L85.5,-1.6 L86.0,-1.3 L86.5,-1.7 L87.0,-1.6 L87.5,-1.3 L88.0,-1.4 L88.5,-1.4 L89.0,-1.7 L89.5,-1.4 L90.0,-1.6 L90.5,-1.3 L91.0,-1.3 L91.5,-1.3 L92.0,-1.3 L92.5,-1.1 L93.0,-1.2 L93.5,-1.0 L94.0,-1.1 L94.5,-1.5 L95.0,-1.9 L95.5,-2.4 L96.0,-2.3 L96.5,-2.3 L97.0,-3.1 L97.5,-3.0 L98.0,-2.6 L98.5,-2.5 L99.0,-2.1 L99.5,-2.3 L100.0,-2.1 L100.5,-2.1 L101.0,-1.9 L101.5,-1.4 L102.0,-1.5 L102.5,-1.8 L103.0,-1.6 L103.5,-1.6 L104.0,-1.2 L104.5,-1.6 L105.0,-1.4 L105.5,-1.2 L106.0,-1.3 L106.5,-1.3 L107.0,-1.3 L107.5,-1.7 L108.0,-1.4 L108.5,-1.5 L109.0,-1.5 L109.5,-1.1 L110.0,-1.2 L110.5,-1.2 L111.0,-1.0 L111.5,-1.1 L112.0,-1.3 L112.5,-1.1 L113.0,-1.2 L113.5,-1.0 L114.0,-1.0 L114.5,-1.4 L115.0,-1.2 L115.5,-1.5 L116.0,-1.1 L116.5,-1.8 L117.0,-1.9 L117.5,-2.2 L118.0,-2.1 L118.5,-2.7 L119.0,-3.2 L119.5,-3.3 L120.0,-2.1 L120.5,-2.5 L121.0,-2.2 L121.5,-2.1 L122.0,-2.4 L122.5,-2.2 L123.0,-1.6 L123.5,-2.0 L124.0,-1.7 L124.5,-1.7 L125.0,-1.9 L125.5,-1.7 L126.0,-1.5 L126.5,-2.0 L127.0,-2.0 L127.5,-1.5 L128.0,-1.4 L128.5,-1.8 L129.0,-1.7 L129.5,-1.7 L130.0,-1.4 L130.5,-1.1 L131.0,-1.3 L131.5,-1.3 L132.0,-1.0 L132.5,-1.1 L133.0,-1.2 L133.5,-1.4 L134.0,-1.2 L134.5,-1.2 L135.0,-1.2 L135.5,-1.1 L136.0,-1.5 L136.5,-1.1 L137.0,-1.5 L137.5,-1.1 L138.0,-1.0 L138.5,-1.3 L139.0,-1.7 L139.5,-2.6 L140.0,-2.5 L140.5,-3.0 L141.0,-3.1 L141.5,-2.8 L142.0,-2.5 L142.5,-2.9 L143.0,-2.3 L143.5,-2.2 L144.0,-2.3 L144.5,-2.5 L145.0,-1.7 L145.5,-2.1 L146.0,-1.8 L146.5,-1.4 L147.0,-1.9 L147.5,-1.9 L148.0,-1.5 L148.5,-1.4 L149.0,-1.8 L149.5,-1.8 L150.0,-1.9 L150.5,-1.7 L151.0,-1.7 L151.5,-1.7 L152.0,-1.3 L152.5,-1.2 L153.0,-1.3 L153.5,-1.0 L154.0,-1.3 L154.5,-1.1 L155.0,-1.0 L155.5,-1.2 L156.0,-1.3 L156.5,-1.3 L157.0,-1.2 L157.5,-1.4 L158.0,-1.1 L158.5,-1.7 L159.0,-1.8 L159.5,-2.6 L160.0,-2.0 L160.5,-2.6 L161.0,-2.5 L161.5,-2.9 L162.0,-2.1 L162.5,-2.1 L163.0,-2.0 L163.5,-2.4 L164.0,-2.5 L164.5,-1.8 L165.0,-1.9 L165.5,-2.2 L166.0,-1.7 L166.5,-2.0 L167.0,-1.3 L167.5,-1.4 L168.0,-1.6 L168.5,-1.7 L169.0,-1.3 L169.5,-1.7 L170.0,-1.2 L170.0,1.6 L169.5,1.6 L169.0,1.3 L168.5,1.7 L168.0,1.5 L167.5,1.7 L167.0,1.3 L166.5,1.4 L166.0,1.6 L165.5,1.6 L165.0,2.1 L164.5,1.8 L164.0,2.1 L163.5,2.0 L163.0,2.0 L162.5,2.6 L162.0,2.8 L161.5,2.6 L161.0,3.2 L160.5,2.9 L160.0,2.3 L159.5,2.0 L159.0,2.1 L158.5,1.5 L158.0,1.3 L157.5,1.2 L157.0,1.5 L156.5,1.1 L156.0,1.5 L155.5,1.5 L155.0,1.1 L154.5,1.3 L154.0,1.2 L153.5,1.2 L153.0,1.0 L152.5,1.4 L152.0,1.2 L151.5,1.5 L151.0,1.4 L150.5,1.3 L150.0,1.7 L149.5,1.8 L149.0,2.0 L148.5,1.7 L148.0,1.4 L147.5,2.0 L147.0,1.8 L146.5,1.6 L146.0,1.9 L145.5,2.2 L145.0,1.7 L144.5,2.5 L144.0,2.8 L143.5,2.4 L143.0,2.4 L142.5,3.2 L142.0,2.9 L141.5,3.7 L141.0,2.8 L140.5,2.8 L140.0,2.5 L139.5,2.4 L139.0,1.9 L138.5,1.4 L138.0,1.2 L137.5,1.1 L137.0,1.2 L136.5,1.5 L136.0,1.3 L135.5,1.1 L135.0,1.1 L134.5,1.3 L134.0,1.4 L133.5,1.5 L133.0,1.2 L132.5,1.2 L132.0,1.4 L131.5,1.2 L131.0,1.5 L130.5,1.5 L130.0,1.5 L129.5,1.7 L129.0,1.6 L128.5,1.8 L128.0,1.5 L127.5,1.6 L127.0,1.5 L126.5,1.6 L126.0,1.5 L125.5,1.6 L125.0,1.7 L124.5,2.2 L124.0,1.7 L123.5,2.2 L123.0,2.2 L122.5,2.3 L122.0,1.7 L121.5,2.0 L121.0,2.0 L120.5,2.4 L120.0,2.1 L119.5,2.8 L119.0,2.7 L118.5,3.1 L118.0,2.7 L117.5,2.5 L117.0,1.6 L116.5,1.3 L116.0,1.1 L115.5,1.2 L115.0,1.4 L114.5,1.0 L114.0,1.4 L113.5,1.4 L113.0,1.2 L112.5,1.2 L112.0,1.3 L111.5,1.4 L111.0,1.1 L110.5,1.3 L110.0,1.5 L109.5,1.2 L109.0,1.5 L108.5,1.6 L108.0,1.5 L107.5,1.5 L107.0,1.6 L106.5,1.6 L106.0,1.2 L105.5,1.6 L105.0,1.5 L104.5,1.5 L104.0,1.7 L103.5,1.5 L103.0,1.6 L102.5,1.6 L102.0,1.4 L101.5,1.4 L101.0,1.6 L100.5,2.0 L100.0,2.0 L99.5,2.2 L99.0,2.1 L98.5,1.9 L98.0,2.7 L97.5,3.1 L97.0,2.4 L96.5,2.9 L96.0,2.9 L95.5,2.0 L95.0,1.9 L94.5,1.6 L94.0,1.3 L93.5,1.1 L93.0,1.0 L92.5,1.0 L92.0,1.0 L91.5,1.1 L91.0,1.3 L90.5,1.1 L90.0,1.3 L89.5,1.3 L89.0,1.7 L88.5,1.3 L88.0,1.2 L87.5,1.3 L87.0,1.3 L86.5,1.7 L86.0,1.2 L85.5,1.3 L85.0,1.2 L84.5,1.2 L84.0,1.4 L83.5,1.7 L83.0,1.6 L82.5,1.9 L82.0,1.8 L81.5,2.0 L81.0,2.5 L80.5,2.6 L80.0,2.0 L79.5,2.6 L79.0,2.2 L78.5,2.3 L78.0,2.5 L77.5,2.9 L77.0,2.6 L76.5,2.0 L76.0,1.8 L75.5,1.9 L75.0,1.4 L74.5,1.4 L74.0,1.1 L73.5,0.9 L73.0,0.9 L72.5,1.2 L72.0,0.9 L71.5,1.2 L71.0,1.0 L70.5,1.2 L70.0,1.0 L69.5,1.4 L69.0,1.2 L68.5,1.2 L68.0,1.1 L67.5,1.2 L67.0,1.6 L66.5,1.2 L66.0,1.6 L65.5,1.2 L65.0,1.5 L64.5,1.6 L64.0,1.2 L63.5,1.4 L63.0,1.2 L62.5,1.7 L62.0,1.5 L61.5,1.5 L61.0,2.1 L60.5,2.1 L60.0,1.8 L59.5,2.4 L59.0,1.8 L58.5,1.8 L58.0,1.9 L57.5,2.6 L57.0,2.4 L56.5,2.9 L56.0,2.8 L55.5,2.8 L55.0,3.0 L54.5,2.8 L54.0,2.6 L53.5,2.5 L53.0,2.0 L52.5,1.8 L52.0,1.2 L51.5,1.2 L51.0,1.5 L50.5,1.3 L50.0,1.5 L49.5,1.2 L49.0,1.1 L48.5,1.4 L48.0,1.4 L47.5,1.4 L47.0,1.3 L46.5,1.4 L46.0,1.3 L45.5,1.1 L45.0,1.2 L44.5,1.2 L44.0,1.2 L43.5,1.6 L43.0,1.4 L42.5,1.4 L42.0,1.7 L41.5,1.3 L41.0,1.6 L40.5,2.1 L40.0,1.6 L39.5,2.4 L39.0,1.9 L38.5,2.5 L38.0,2.2 L37.5,2.8 L37.0,2.3 L36.5,2.2 L36.0,2.9 L35.5,3.2 L35.0,2.4 L34.5,2.7 L34.0,2.5 L33.5,2.0 L33.0,1.4 L32.5,1.2 L32.0,1.3 L31.5,1.3 L31.0,1.3 L30.5,1.0 L30.0,0.9 L29.5,1.1 L29.0,1.0 L28.5,1.4 L28.0,1.4 L27.5,1.4 L27.0,1.2 L26.5,1.3 L26.0,1.1 L25.5,1.1 L25.0,1.4 L24.5,1.3 L24.0,1.3 L23.5,1.3 L23.0,1.1 L22.5,1.6 L22.0,1.4 L21.5,1.3 L21.0,1.6 L20.5,1.9 L20.0,1.6 L19.5,1.5 L19.0,1.8 L18.5,1.4 L18.0,1.5 L17.5,1.5 L17.0,1.8 L16.5,1.8 L16.0,1.8 L15.5,2.0 L15.0,2.5 L14.5,3.1 L14.0,3.4 L13.5,2.8 L13.0,2.4 L12.5,2.5 L12.0,1.7 L11.5,1.2 L11.0,1.2 L10.5,1.0 L10.0,1.0 L9.5,1.3 L9.0,1.0 L8.5,1.0 L8.0,1.3 L7.5,1.2 L7.0,1.0 L6.5,1.2 L6.0,1.1 L5.5,1.0 L5.0,1.0 L4.5,0.9 L4.0,1.1 L3.5,1.2 L3.0,1.1 L2.5,0.9 L2.0,1.1 L1.5,1.3 L1.0,1.2 L0.5,1.2 L0.0,1.3Z" fill="#ff9900"/></g><rect x="169.6" y="3" width="1" height="70" fill="#ff9900" fill-opacity="0.7"/></svg><div class="hot">Hot</div><div class="lbl">g minor electric piano ha... (0:12)</div></div>
<div class="card" style="left:812px;top:307px"><svg class="wf" width="171" height="109" viewBox="0 0 171 109"><g transform="translate(1,38)"><path d="M1.1,-10.7V10.3M5.2,-3.9V3.9M11.6,-7.2V11.2M12.7,-6.4V6.1M13.6,-4.7V4.7M15.0,-4.1V4.0M16.2,-13.9V10.9M16.7,-11.3V13.2M17.1,-9.8V8.0M17.7,-7.5V8.0M18.2,-6.4V6.2M21.3,-3.8V3.9M21.6,-14.5V14.5M22.3,-11.0V10.4M23.3,-6.7V6.9M23.8,-5.4V5.7M27.2,-15.3V15.7M27.5,-10.3V8.3M28.1,-7.9V7.5M29.3,-5.4V5.3M32.0,-5.5V5.4M32.8,-10.0V11.2M33.1,-10.0V9.3M34.2,-5.9V5.9M34.7,-5.2V4.9M37.2,-4.0V4.0M38.2,-11.7V10.8M38.5,-8.2V9.2M39.2,-7.3V6.3M39.7,-5.5V5.6M43.0,-17.2V17.3M43.8,-6.7V9.1M44.1,-8.3V6.9M44.7,-5.4V5.6M45.1,-5.4V5.3M45.6,-4.7V4.5M46.0,-4.4V4.5M46.6,-4.1V4.0M48.1,-8.6V10.4M49.0,-10.0V6.9M53.6,-18.0V16.3M54.7,-7.4V8.5M55.2,-6.3V7.1M55.6,-5.8V6.1M59.0,-15.6V15.5M59.5,-10.9V12.0M60.1,-7.0V7.5M60.6,-5.9V6.7M61.2,-4.9V5.2M62.8,-4.1V4.1M63.8,-3.9V3.7M65.6,-6.8V6.4M66.0,-6.4V5.6M66.6,-5.3V5.4M69.6,-18.0V18.2M70.5,-8.0V9.8M71.2,-6.4V6.1M71.6,-5.7V5.6M72.1,-4.7V5.0M75.5,-10.1V11.5M76.1,-7.2V7.5M76.5,-6.8V6.6M77.0,-5.6V5.4M77.6,-4.8V4.8M81.6,-7.5V7.7M82.1,-6.0V6.2M82.7,-5.3V5.1M87.0,-7.4V7.2M87.5,-6.1V5.6M91.3,-11.9V13.7M93.1,-5.4V5.6M96.6,-11.5V13.0M98.7,-5.2V5.3M100.8,-3.9V4.0M102.3,-9.7V9.5M103.0,-6.3V6.3M103.5,-5.3V5.1M104.7,-4.3V4.3M105.7,-4.0V4.1M107.1,-14.3V15.5M108.8,-6.3V6.0M109.1,-5.7V5.5M111.7,-4.1V4.1M112.7,-10.9V11.3M113.1,-8.2V9.3M117.6,-18.2V18.4M118.1,-12.8V11.1M118.6,-8.7V9.7M119.0,-6.9V7.5M119.5,-5.8V6.1M122.7,-8.0V10.4M123.6,-10.4V10.6M124.1,-7.8V8.9M124.6,-6.2V6.6M128.1,-12.5V11.8M129.7,-6.8V7.2M130.1,-6.0V5.8M130.5,-5.1V5.1M131.1,-4.7V4.6M133.5,-16.6V15.2M134.1,-9.1V12.0M138.1,-4.0V4.0M138.7,-8.2V7.1M139.8,-9.3V9.2M140.1,-7.1V8.4M144.0,-8.9V9.7M145.1,-7.4V7.9M145.5,-7.1V7.5M149.3,-6.4V6.1M149.8,-14.4V15.7M150.1,-9.6V9.9M150.6,-9.0V9.4M151.1,-7.0V7.1M155.0,-16.3V15.5M155.7,-10.8V10.4M160.1,-13.8V12.5M161.6,-5.8V6.7M162.7,-4.8V4.8M163.1,-4.6V4.6M164.7,-3.9V3.8M167.2,-6.2V6.7M167.6,-5.6V5.6" stroke="#ff9900" stroke-width="0.6" stroke-opacity="0.8" fill="none"/><path d="M0.0,-4.9 L0.2,-13.7 L0.5,-11.1 L0.8,-7.6 L1.0,-6.9 L1.2,-7.2 L1.5,-5.9 L1.8,-5.6 L2.0,-6.6 L2.2,-6.0 L2.5,-4.9 L2.8,-5.2 L3.0,-5.2 L3.2,-4.9 L3.5,-4.7 L3.8,-4.4 L4.0,-4.0 L4.2,-4.3 L4.5,-4.5 L4.8,-4.2 L5.0,-3.5 L5.2,-3.5 L5.5,-7.9 L5.8,-12.6 L6.0,-7.5 L6.2,-6.2 L6.5,-5.6 L6.8,-6.4 L7.0,-5.9 L7.2,-6.2 L7.5,-4.8 L7.8,-5.2 L8.0,-4.6 L8.2,-5.0 L8.5,-4.4 L8.8,-4.9 L9.0,-4.6 L9.2,-4.3 L9.5,-4.0 L9.8,-3.8 L10.0,-4.3 L10.2,-3.5 L10.5,-3.8 L10.8,-6.3 L11.0,-15.3 L11.2,-9.2 L11.5,-6.9 L11.8,-6.6 L12.0,-6.1 L12.2,-6.0 L12.5,-6.0 L12.8,-4.9 L13.0,-5.5 L13.2,-5.2 L13.5,-4.6 L13.8,-4.9 L14.0,-4.1 L14.2,-3.9 L14.5,-4.6 L14.8,-3.8 L15.0,-4.1 L15.2,-4.1 L15.5,-4.1 L15.8,-4.0 L16.0,-4.8 L16.2,-14.6 L16.5,-11.6 L16.8,-8.6 L17.0,-7.2 L17.2,-7.6 L17.5,-6.4 L17.8,-6.4 L18.0,-6.8 L18.2,-5.6 L18.5,-5.9 L18.8,-4.9 L19.0,-5.1 L19.2,-4.6 L19.5,-4.9 L19.8,-4.6 L20.0,-4.8 L20.2,-4.4 L20.5,-4.1 L20.8,-3.5 L21.0,-4.1 L21.2,-4.1 L21.5,-8.7 L21.8,-13.7 L22.0,-7.8 L22.2,-7.6 L22.5,-6.4 L22.8,-6.8 L23.0,-6.1 L23.2,-5.5 L23.5,-5.3 L23.8,-4.8 L24.0,-5.0 L24.2,-4.7 L24.5,-4.7 L24.8,-4.2 L25.0,-4.3 L25.2,-4.6 L25.5,-3.8 L25.8,-4.4 L26.0,-4.1 L26.2,-4.4 L26.5,-3.9 L26.8,-6.6 L27.0,-17.1 L27.2,-9.8 L27.5,-6.7 L27.8,-6.1 L28.0,-6.5 L28.2,-5.9 L28.5,-5.9 L28.8,-6.0 L29.0,-5.9 L29.2,-4.9 L29.5,-4.9 L29.8,-4.9 L30.0,-4.1 L30.2,-4.4 L30.5,-4.3 L30.8,-4.0 L31.0,-4.2 L31.2,-4.4 L31.5,-3.6 L31.8,-3.5 L32.0,-5.5 L32.2,-15.6 L32.5,-10.7 L32.8,-7.0 L33.0,-7.1 L33.2,-7.3 L33.5,-6.3 L33.8,-5.3 L34.0,-4.9 L34.2,-5.4 L34.5,-4.8 L34.8,-4.9 L35.0,-4.2 L35.2,-4.3 L35.5,-4.1 L35.8,-4.0 L36.0,-3.6 L36.2,-4.2 L36.5,-3.8 L36.8,-3.7 L37.0,-3.8 L37.2,-3.8 L37.5,-10.2 L37.8,-14.4 L38.0,-8.6 L38.2,-7.0 L38.5,-6.9 L38.8,-6.7 L39.0,-6.1 L39.2,-6.3 L39.5,-5.8 L39.8,-5.3 L40.0,-5.2 L40.2,-4.5 L40.5,-5.0 L40.8,-4.8 L41.0,-4.0 L41.2,-3.9 L41.5,-3.7 L41.8,-3.4 L42.0,-3.5 L42.2,-4.1 L42.5,-3.8 L42.8,-5.9 L43.0,-15.3 L43.2,-10.2 L43.5,-7.5 L43.8,-7.1 L44.0,-6.1 L44.2,-6.4 L44.5,-6.1 L44.8,-5.1 L45.0,-4.6 L45.2,-5.3 L45.5,-4.4 L45.8,-4.6 L46.0,-4.5 L46.2,-3.7 L46.5,-4.0 L46.8,-3.7 L47.0,-4.0 L47.2,-3.8 L47.5,-3.6 L47.8,-3.8 L48.0,-4.3 L48.2,-14.7 L48.5,-11.3 L48.8,-7.4 L49.0,-6.7 L49.2,-5.8 L49.5,-6.3 L49.8,-6.0 L50.0,-5.8 L50.2,-5.2 L50.5,-4.5 L50.8,-4.8 L51.0,-4.3 L51.2,-4.7 L51.5,-4.0 L51.8,-4.3 L52.0,-4.1 L52.2,-3.7 L52.5,-4.1 L52.8,-4.3 L53.0,-4.1 L53.2,-3.9 L53.5,-10.4 L53.8,-13.3 L54.0,-8.7 L54.2,-7.8 L54.5,-7.1 L54.8,-6.5 L55.0,-5.9 L55.2,-5.9 L55.5,-5.1 L55.8,-5.1 L56.0,-4.9 L56.2,-4.6 L56.5,-4.8 L56.8,-4.8 L57.0,-4.8 L57.2,-4.8 L57.5,-5.0 L57.8,-4.3 L58.0,-4.6 L58.2,-4.3 L58.5,-4.1 L58.8,-6.2 L59.0,-15.2 L59.2,-9.2 L59.5,-7.9 L59.8,-7.0 L60.0,-6.6 L60.2,-6.6 L60.5,-5.5 L60.8,-4.9 L61.0,-5.5 L61.2,-4.9 L61.5,-4.8 L61.8,-4.9 L62.0,-4.5 L62.2,-4.1 L62.5,-3.7 L62.8,-4.1 L63.0,-3.6 L63.2,-3.4 L63.5,-3.4 L63.8,-3.7 L64.0,-4.8 L64.2,-13.5 L64.5,-9.7 L64.8,-7.2 L65.0,-6.5 L65.2,-5.9 L65.5,-5.4 L65.8,-5.7 L66.0,-5.8 L66.2,-4.7 L66.5,-4.8 L66.8,-5.1 L67.0,-5.1 L67.2,-4.9 L67.5,-4.2 L67.8,-4.2 L68.0,-4.2 L68.2,-4.6 L68.5,-4.0 L68.8,-3.9 L69.0,-4.9 L69.2,-4.9 L69.5,-11.8 L69.8,-15.1 L70.0,-8.3 L70.2,-7.4 L70.5,-6.3 L70.8,-5.7 L71.0,-5.5 L71.2,-5.3 L71.5,-4.9 L71.8,-4.8 L72.0,-4.4 L72.2,-4.2 L72.5,-4.8 L72.8,-3.9 L73.0,-4.3 L73.2,-4.1 L73.5,-4.6 L73.8,-3.6 L74.0,-4.1 L74.2,-4.4 L74.5,-3.5 L74.8,-5.8 L75.0,-16.4 L75.2,-10.9 L75.5,-7.6 L75.8,-6.2 L76.0,-7.0 L76.2,-6.1 L76.5,-5.9 L76.8,-5.1 L77.0,-5.1 L77.2,-4.7 L77.5,-5.3 L77.8,-4.6 L78.0,-4.1 L78.2,-4.9 L78.5,-4.8 L78.8,-4.0 L79.0,-3.9 L79.2,-4.1 L79.5,-4.3 L79.8,-3.6 L80.0,-5.6 L80.2,-18.1 L80.5,-12.2 L80.8,-7.2 L81.0,-7.5 L81.2,-7.5 L81.5,-6.9 L81.8,-5.9 L82.0,-5.9 L82.2,-5.9 L82.5,-5.2 L82.8,-4.9 L83.0,-5.0 L83.2,-4.3 L83.5,-4.0 L83.8,-4.3 L84.0,-4.6 L84.2,-4.2 L84.5,-4.0 L84.8,-4.2 L85.0,-4.0 L85.2,-4.2 L85.5,-12.8 L85.8,-12.5 L86.0,-8.0 L86.2,-6.9 L86.5,-7.3 L86.8,-7.1 L87.0,-6.6 L87.2,-5.7 L87.5,-6.1 L87.8,-5.2 L88.0,-5.7 L88.2,-5.3 L88.5,-5.1 L88.8,-4.5 L89.0,-4.2 L89.2,-4.3 L89.5,-4.0 L89.8,-3.9 L90.0,-3.6 L90.2,-4.3 L90.5,-3.8 L90.8,-6.9 L91.0,-13.7 L91.2,-10.2 L91.5,-7.4 L91.8,-7.5 L92.0,-6.1 L92.2,-6.5 L92.5,-6.4 L92.8,-5.7 L93.0,-5.9 L93.2,-5.3 L93.5,-5.2 L93.8,-4.5 L94.0,-5.0 L94.2,-5.2 L94.5,-4.6 L94.8,-4.6 L95.0,-4.3 L95.2,-4.3 L95.5,-4.2 L95.8,-4.1 L96.0,-5.7 L96.2,-17.6 L96.5,-11.6 L96.8,-7.5 L97.0,-7.2 L97.2,-6.4 L97.5,-7.1 L97.8,-5.4 L98.0,-6.3 L98.2,-5.1 L98.5,-5.7 L98.8,-5.2 L99.0,-4.5 L99.2,-5.1 L99.5,-4.0 L99.8,-4.1 L100.0,-4.6 L100.2,-4.0 L100.5,-3.9 L100.8,-3.5 L101.0,-3.6 L101.2,-4.2 L101.5,-10.9 L101.8,-13.0 L102.0,-8.1 L102.2,-6.4 L102.5,-5.9 L102.8,-5.8 L103.0,-4.9 L103.2,-5.1 L103.5,-4.7 L103.8,-5.0 L104.0,-4.1 L104.2,-4.5 L104.5,-3.8 L104.8,-4.2 L105.0,-4.0 L105.2,-3.6 L105.5,-3.8 L105.8,-4.3 L106.0,-4.3 L106.2,-3.6 L106.5,-3.7 L106.8,-6.3 L107.0,-13.8 L107.2,-9.2 L107.5,-7.0 L107.8,-6.6 L108.0,-6.9 L108.2,-6.0 L108.5,-6.4 L108.8,-6.0 L109.0,-5.4 L109.2,-5.4 L109.5,-5.0 L109.8,-4.7 L110.0,-4.6 L110.2,-4.1 L110.5,-4.8 L110.8,-4.7 L111.0,-4.1 L111.2,-3.6 L111.5,-4.3 L111.8,-3.5 L112.0,-5.0 L112.2,-17.0 L112.5,-10.0 L112.8,-6.7 L113.0,-7.0 L113.2,-5.7 L113.5,-5.2 L113.8,-5.6 L114.0,-5.2 L114.2,-4.6 L114.5,-5.0 L114.8,-4.6 L115.0,-4.7 L115.2,-4.8 L115.5,-4.6 L115.8,-4.1 L116.0,-4.5 L116.2,-4.0 L116.5,-4.1 L116.8,-4.0 L117.0,-4.2 L117.2,-5.2 L117.5,-14.8 L117.8,-13.0 L118.0,-8.6 L118.2,-7.1 L118.5,-7.7 L118.8,-6.2 L119.0,-6.8 L119.2,-5.8 L119.5,-5.6 L119.8,-5.1 L120.0,-4.6 L120.2,-5.1 L120.5,-4.4 L120.8,-4.4 L121.0,-4.5 L121.2,-3.9 L121.5,-4.0 L121.8,-3.9 L122.0,-3.8 L122.2,-4.0 L122.5,-4.0 L122.8,-7.9 L123.0,-15.1 L123.2,-9.8 L123.5,-6.9 L123.8,-7.6 L124.0,-6.5 L124.2,-6.7 L124.5,-6.8 L124.8,-5.6 L125.0,-5.1 L125.2,-5.8 L125.5,-5.5 L125.8,-5.3 L126.0,-5.1 L126.2,-4.4 L126.5,-4.4 L126.8,-4.6 L127.0,-4.6 L127.2,-4.2 L127.5,-4.1 L127.8,-4.4 L128.0,-5.3 L128.2,-15.2 L128.5,-10.2 L128.8,-6.8 L129.0,-6.7 L129.2,-6.0 L129.5,-6.4 L129.8,-5.1 L130.0,-5.7 L130.2,-5.0 L130.5,-4.9 L130.8,-5.0 L131.0,-5.1 L131.2,-4.2 L131.5,-3.9 L131.8,-4.3 L132.0,-3.7 L132.2,-4.4 L132.5,-4.5 L132.8,-4.0 L133.0,-3.8 L133.2,-4.7 L133.5,-14.0 L133.8,-11.4 L134.0,-7.5 L134.2,-6.6 L134.5,-7.3 L134.8,-7.0 L135.0,-6.6 L135.2,-5.9 L135.5,-6.3 L135.8,-5.0 L136.0,-5.0 L136.2,-5.1 L136.5,-4.8 L136.8,-4.5 L137.0,-4.2 L137.2,-3.9 L137.5,-4.1 L137.8,-3.5 L138.0,-3.5 L138.2,-3.4 L138.5,-3.8 L138.8,-6.9 L139.0,-12.4 L139.2,-9.7 L139.5,-7.5 L139.8,-6.0 L140.0,-6.4 L140.2,-6.0 L140.5,-5.6 L140.8,-5.6 L141.0,-6.1 L141.2,-5.4 L141.5,-5.3 L141.8,-5.1 L142.0,-4.6 L142.2,-4.8 L142.5,-4.0 L142.8,-3.7 L143.0,-3.7 L143.2,-4.1 L143.5,-3.5 L143.8,-3.8 L144.0,-5.3 L144.2,-16.4 L144.5,-10.7 L144.8,-6.5 L145.0,-6.0 L145.2,-5.8 L145.5,-5.8 L145.8,-5.1 L146.0,-5.2 L146.2,-5.9 L146.5,-4.6 L146.8,-5.3 L147.0,-4.7 L147.2,-5.2 L147.5,-4.3 L147.8,-4.3 L148.0,-4.8 L148.2,-4.3 L148.5,-4.4 L148.8,-4.4 L149.0,-4.5 L149.2,-4.6 L149.5,-15.2 L149.8,-12.2 L150.0,-8.6 L150.2,-6.5 L150.5,-7.2 L150.8,-7.3 L151.0,-6.8 L151.2,-5.6 L151.5,-5.2 L151.8,-5.1 L152.0,-5.7 L152.2,-5.3 L152.5,-4.9 L152.8,-4.8 L153.0,-4.3 L153.2,-4.9 L153.5,-4.2 L153.8,-3.9 L154.0,-4.3 L154.2,-4.4 L154.5,-3.9 L154.8,-10.2 L155.0,-15.5 L155.2,-9.3 L155.5,-8.0 L155.8,-6.4 L156.0,-6.1 L156.2,-6.4 L156.5,-6.3 L156.8,-6.2 L157.0,-5.8 L157.2,-5.2 L157.5,-5.5 L157.8,-4.3 L158.0,-4.9 L158.2,-4.9 L158.5,-4.0 L158.8,-4.2 L159.0,-4.0 L159.2,-4.3 L159.5,-4.0 L159.8,-4.1 L160.0,-5.3 L160.2,-13.8 L160.5,-9.0 L160.8,-7.6 L161.0,-7.0 L161.2,-6.7 L161.5,-6.0 L161.8,-4.9 L162.0,-5.8 L162.2,-5.5 L162.5,-5.1 L162.8,-4.8 L163.0,-5.0 L163.2,-4.8 L163.5,-3.8 L163.8,-4.0 L164.0,-3.9 L164.2,-4.1 L164.5,-3.9 L164.8,-3.6 L165.0,-3.3 L165.2,-4.6 L165.5,-15.2 L165.8,-9.9 L166.0,-7.1 L166.2,-6.4 L166.5,-6.4 L166.8,-5.5 L167.0,-5.4 L167.2,-5.4 L167.5,-5.9 L167.8,-4.6 L168.0,-4.6 L168.2,-5.0 L168.5,-5.2 L168.8,-5.0 L169.0,-4.1 L169.2,-3.8 L169.5,-4.4 L169.8,-3.8 L170.0,-4.1 L170.0,4.5 L169.8,3.7 L169.5,4.0 L169.2,4.6 L169.0,3.9 L168.8,4.2 L168.5,4.9 L168.2,5.2 L168.0,5.5 L167.8,5.4 L167.5,4.7 L167.2,5.2 L167.0,5.7 L166.8,5.9 L166.5,6.8 L166.2,6.6 L166.0,7.5 L165.8,10.5 L165.5,15.5 L165.2,5.0 L165.0,3.9 L164.8,3.8 L164.5,3.6 L164.2,3.5 L164.0,3.7 L163.8,3.8 L163.5,3.7 L163.2,4.7 L163.0,4.3 L162.8,4.4 L162.5,5.1 L162.2,4.6 L162.0,5.2 L161.8,5.1 L161.5,5.9 L161.2,6.8 L161.0,7.0 L160.8,7.0 L160.5,10.7 L160.2,14.3 L160.0,6.5 L159.8,3.9 L159.5,3.8 L159.2,4.0 L159.0,3.9 L158.8,3.9 L158.5,4.1 L158.2,4.6 L158.0,5.0 L157.8,4.6 L157.5,5.1 L157.2,5.6 L157.0,5.3 L156.8,5.3 L156.5,5.5 L156.2,6.5 L156.0,6.2 L155.8,6.7 L155.5,8.6 L155.2,9.2 L155.0,14.4 L154.8,9.2 L154.5,4.3 L154.2,4.7 L154.0,4.8 L153.8,4.6 L153.5,5.0 L153.2,4.7 L153.0,4.4 L152.8,4.5 L152.5,5.4 L152.2,5.4 L152.0,5.0 L151.8,5.6 L151.5,6.1 L151.2,5.7 L151.0,6.3 L150.8,6.3 L150.5,7.0 L150.2,7.5 L150.0,8.9 L149.8,11.1 L149.5,13.3 L149.2,4.5 L149.0,4.0 L148.8,3.8 L148.5,3.9 L148.2,4.5 L148.0,4.6 L147.8,4.7 L147.5,4.9 L147.2,5.3 L147.0,5.5 L146.8,4.7 L146.5,4.9 L146.2,4.9 L146.0,5.7 L145.8,6.1 L145.5,6.4 L145.2,5.9 L145.0,7.0 L144.8,6.8 L144.5,9.2 L144.2,13.4 L144.0,5.0 L143.8,3.8 L143.5,3.4 L143.2,4.2 L143.0,3.8 L142.8,4.4 L142.5,4.3 L142.2,4.2 L142.0,4.8 L141.8,4.9 L141.5,4.7 L141.2,5.7 L141.0,5.7 L140.8,5.5 L140.5,5.9 L140.2,6.1 L140.0,6.8 L139.8,6.4 L139.5,7.2 L139.2,9.7 L139.0,12.9 L138.8,7.2 L138.5,3.9 L138.2,3.8 L138.0,3.7 L137.8,4.2 L137.5,4.0 L137.2,3.7 L137.0,3.8 L136.8,4.8 L136.5,4.3 L136.2,5.1 L136.0,5.6 L135.8,5.4 L135.5,5.9 L135.2,5.4 L135.0,5.8 L134.8,6.4 L134.5,7.8 L134.2,7.9 L134.0,8.2 L133.8,12.3 L133.5,15.4 L133.2,4.6 L133.0,4.2 L132.8,4.5 L132.5,4.1 L132.2,3.8 L132.0,4.2 L131.8,3.9 L131.5,4.7 L131.2,4.6 L131.0,4.6 L130.8,4.3 L130.5,4.9 L130.2,4.8 L130.0,5.9 L129.8,6.1 L129.5,5.8 L129.2,6.9 L129.0,6.6 L128.8,6.4 L128.5,11.6 L128.2,15.9 L128.0,5.6 L127.8,3.9 L127.5,3.6 L127.2,3.8 L127.0,3.8 L126.8,4.9 L126.5,4.0 L126.2,4.3 L126.0,4.5 L125.8,4.7 L125.5,5.1 L125.2,5.5 L125.0,5.8 L124.8,6.4 L124.5,6.2 L124.2,7.1 L124.0,6.3 L123.8,7.8 L123.5,7.9 L123.2,10.4 L123.0,14.8 L122.8,7.0 L122.5,4.4 L122.2,3.8 L122.0,4.4 L121.8,4.1 L121.5,4.0 L121.2,4.9 L121.0,4.6 L120.8,4.6 L120.5,4.2 L120.2,5.4 L120.0,5.6 L119.8,5.5 L119.5,5.3 L119.2,6.5 L119.0,5.5 L118.8,6.5 L118.5,6.8 L118.2,7.3 L118.0,8.7 L117.8,11.8 L117.5,14.1 L117.2,5.5 L117.0,4.0 L116.8,3.8 L116.5,4.5 L116.2,4.0 L116.0,4.7 L115.8,4.4 L115.5,5.1 L115.2,4.5 L115.0,4.8 L114.8,5.1 L114.5,4.8 L114.2,4.7 L114.0,5.8 L113.8,5.7 L113.5,5.8 L113.2,5.9 L113.0,6.4 L112.8,6.3 L112.5,10.0 L112.2,15.6 L112.0,5.5 L111.8,4.0 L111.5,4.1 L111.2,4.1 L111.0,3.7 L110.8,4.1 L110.5,4.0 L110.2,4.7 L110.0,4.2 L109.8,4.8 L109.5,5.5 L109.2,5.7 L109.0,4.9 L108.8,6.4 L108.5,5.9 L108.2,6.7 L108.0,7.6 L107.8,8.0 L107.5,8.5 L107.2,9.1 L107.0,14.5 L106.8,7.3 L106.5,4.1 L106.2,3.8 L106.0,3.7 L105.8,3.9 L105.5,3.9 L105.2,4.0 L105.0,3.8 L104.8,3.8 L104.5,3.8 L104.2,4.7 L104.0,4.6 L103.8,4.3 L103.5,4.9 L103.2,5.1 L103.0,5.3 L102.8,5.8 L102.5,6.1 L102.2,6.9 L102.0,7.4 L101.8,10.7 L101.5,11.3 L101.2,4.3 L101.0,4.1 L100.8,3.6 L100.5,3.7 L100.2,4.4 L100.0,3.8 L99.8,3.9 L99.5,4.0 L99.2,5.2 L99.0,4.8 L98.8,5.1 L98.5,4.7 L98.2,5.0 L98.0,6.0 L97.8,6.0 L97.5,6.3 L97.2,7.4 L97.0,7.2 L96.8,8.3 L96.5,10.6 L96.2,17.0 L96.0,6.5 L95.8,4.4 L95.5,4.5 L95.2,4.9 L95.0,3.9 L94.8,4.1 L94.5,5.0 L94.2,5.1 L94.0,4.4 L93.8,4.7 L93.5,4.5 L93.2,5.6 L93.0,4.9 L92.8,5.3 L92.5,6.1 L92.2,5.6 L92.0,5.8 L91.8,6.3 L91.5,7.4 L91.2,9.5 L91.0,13.2 L90.8,6.9 L90.5,3.6 L90.2,4.4 L90.0,4.2 L89.8,4.1 L89.5,4.1 L89.2,4.7 L89.0,4.3 L88.8,4.4 L88.5,4.8 L88.2,5.1 L88.0,5.5 L87.8,5.6 L87.5,5.6 L87.2,5.6 L87.0,5.6 L86.8,6.5 L86.5,7.0 L86.2,7.6 L86.0,8.5 L85.8,13.1 L85.5,10.8 L85.2,4.2 L85.0,3.5 L84.8,3.6 L84.5,4.3 L84.2,4.3 L84.0,4.6 L83.8,4.4 L83.5,3.9 L83.2,5.0 L83.0,4.1 L82.8,5.4 L82.5,5.5 L82.2,5.5 L82.0,6.0 L81.8,6.7 L81.5,5.8 L81.2,6.4 L81.0,6.9 L80.8,8.0 L80.5,10.4 L80.2,18.2 L80.0,4.8 L79.8,4.4 L79.5,3.8 L79.2,4.2 L79.0,4.5 L78.8,3.7 L78.5,4.4 L78.2,4.7 L78.0,4.6 L77.8,4.9 L77.5,5.2 L77.2,5.6 L77.0,4.8 L76.8,5.0 L76.5,5.7 L76.2,5.8 L76.0,7.1 L75.8,7.7 L75.5,7.1 L75.2,10.7 L75.0,14.7 L74.8,5.9 L74.5,4.2 L74.2,3.5 L74.0,4.0 L73.8,4.2 L73.5,4.3 L73.2,4.3 L73.0,4.3 L72.8,4.3 L72.5,4.4 L72.2,5.0 L72.0,4.8 L71.8,4.8 L71.5,4.6 L71.2,5.4 L71.0,6.4 L70.8,5.7 L70.5,7.3 L70.2,7.9 L70.0,9.8 L69.8,13.0 L69.5,12.6 L69.2,4.6 L69.0,4.2 L68.8,4.8 L68.5,4.9 L68.2,4.9 L68.0,4.5 L67.8,4.5 L67.5,4.1 L67.2,4.6 L67.0,4.7 L66.8,5.0 L66.5,5.0 L66.2,5.1 L66.0,4.7 L65.8,5.0 L65.5,5.8 L65.2,5.6 L65.0,6.3 L64.8,7.2 L64.5,10.7 L64.2,14.7 L64.0,5.2 L63.8,3.9 L63.5,3.7 L63.2,3.4 L63.0,3.5 L62.8,4.1 L62.5,4.1 L62.2,4.4 L62.0,4.5 L61.8,4.5 L61.5,4.4 L61.2,5.0 L61.0,4.9 L60.8,5.7 L60.5,5.2 L60.2,6.1 L60.0,6.4 L59.8,7.4 L59.5,7.2 L59.2,9.1 L59.0,16.4 L58.8,6.3 L58.5,4.0 L58.2,4.3 L58.0,4.3 L57.8,4.6 L57.5,4.5 L57.2,5.1 L57.0,5.1 L56.8,4.5 L56.5,4.7 L56.2,4.9 L56.0,5.4 L55.8,5.5 L55.5,6.3 L55.2,6.0 L55.0,6.0 L54.8,6.4 L54.5,7.4 L54.2,6.5 L54.0,9.4 L53.8,12.9 L53.5,9.8 L53.2,4.4 L53.0,3.5 L52.8,3.8 L52.5,4.3 L52.2,3.8 L52.0,4.6 L51.8,4.0 L51.5,4.5 L51.2,4.5 L51.0,4.2 L50.8,4.3 L50.5,5.2 L50.2,5.0 L50.0,5.4 L49.8,6.0 L49.5,6.0 L49.2,6.1 L49.0,5.8 L48.8,6.7 L48.5,10.6 L48.2,15.5 L48.0,5.0 L47.8,3.8 L47.5,3.4 L47.2,3.8 L47.0,3.6 L46.8,3.8 L46.5,4.2 L46.2,3.7 L46.0,4.0 L45.8,4.2 L45.5,4.7 L45.2,5.0 L45.0,5.3 L44.8,4.8 L44.5,6.0 L44.2,6.0 L44.0,6.0 L43.8,5.8 L43.5,6.0 L43.2,9.2 L43.0,13.7 L42.8,5.0 L42.5,3.7 L42.2,3.9 L42.0,3.6 L41.8,4.0 L41.5,3.6 L41.2,4.5 L41.0,4.4 L40.8,4.7 L40.5,4.2 L40.2,4.4 L40.0,5.4 L39.8,5.2 L39.5,5.6 L39.2,5.8 L39.0,6.5 L38.8,6.9 L38.5,7.2 L38.2,8.0 L38.0,9.8 L37.8,13.9 L37.5,10.2 L37.2,4.1 L37.0,4.0 L36.8,3.8 L36.5,3.5 L36.2,4.3 L36.0,3.7 L35.8,4.3 L35.5,4.6 L35.2,4.3 L35.0,4.3 L34.8,4.7 L34.5,5.5 L34.2,5.8 L34.0,5.6 L33.8,6.5 L33.5,6.8 L33.2,6.4 L33.0,6.4 L32.8,7.2 L32.5,12.3 L32.2,15.3 L32.0,4.8 L31.8,3.8 L31.5,3.9 L31.2,4.2 L31.0,4.4 L30.8,3.9 L30.5,4.8 L30.2,4.9 L30.0,4.9 L29.8,4.7 L29.5,4.6 L29.2,5.5 L29.0,5.2 L28.8,5.7 L28.5,6.3 L28.2,6.7 L28.0,6.6 L27.8,7.4 L27.5,7.7 L27.2,10.0 L27.0,14.1 L26.8,6.7 L26.5,4.0 L26.2,4.2 L26.0,3.9 L25.8,4.5 L25.5,4.3 L25.2,4.0 L25.0,4.1 L24.8,4.3 L24.5,5.1 L24.2,4.8 L24.0,4.7 L23.8,5.6 L23.5,5.6 L23.2,5.6 L23.0,5.7 L22.8,6.6 L22.5,7.1 L22.2,7.2 L22.0,9.6 L21.8,12.6 L21.5,9.2 L21.2,3.4 L21.0,4.1 L20.8,3.8 L20.5,4.2 L20.2,3.8 L20.0,4.7 L19.8,4.7 L19.5,4.5 L19.2,5.1 L19.0,5.4 L18.8,5.7 L18.5,5.9 L18.2,6.5 L18.0,6.1 L17.8,6.1 L17.5,7.2 L17.2,6.6 L17.0,6.7 L16.8,7.7 L16.5,11.0 L16.2,15.6 L16.0,4.9 L15.8,3.8 L15.5,4.2 L15.2,4.3 L15.0,4.3 L14.8,3.8 L14.5,4.5 L14.2,4.1 L14.0,4.7 L13.8,4.7 L13.5,4.7 L13.2,5.1 L13.0,4.8 L12.8,5.2 L12.5,5.0 L12.2,6.2 L12.0,6.5 L11.8,5.6 L11.5,7.3 L11.2,9.3 L11.0,16.0 L10.8,6.0 L10.5,3.5 L10.2,3.8 L10.0,4.2 L9.8,4.4 L9.5,4.3 L9.2,4.2 L9.0,4.5 L8.8,4.9 L8.5,4.7 L8.2,4.9 L8.0,4.6 L7.8,5.2 L7.5,5.5 L7.2,5.5 L7.0,5.4 L6.8,6.8 L6.5,7.1 L6.2,7.3 L6.0,9.2 L5.8,14.5 L5.5,8.2 L5.2,3.7 L5.0,3.4 L4.8,4.5 L4.5,4.2 L4.2,4.1 L4.0,4.0 L3.8,4.2 L3.5,4.9 L3.2,4.9 L3.0,4.9 L2.8,4.9 L2.5,5.9 L2.2,5.4 L2.0,5.5 L1.8,6.3 L1.5,6.2 L1.2,7.3 L1.0,6.8 L0.8,7.4 L0.5,10.4 L0.2,12.1 L0.0,4.5Z" fill="#ff9900"/></g><rect x="169.6" y="3" width="1" height="70" fill="#ff9900" fill-opacity="0.7"/></svg><div class="hot">Hot</div><div class="lbl">Rock Guitar (0:06)</div></div>
<div class="card" style="left:227px;top:448px"><svg class="wf" width="171" height="109" viewBox="0 0 171 109"><g transform="translate(1,38)"><path d="M1.4,-7.8V7.9M3.0,-4.4V3.6M8.2,-2.4V2.4M10.4,-3.4V3.5M11.2,-5.0V4.6M12.4,-3.2V2.9M13.0,-2.5V2.4M15.2,-1.9V1.9M18.2,-4.7V4.4M20.3,-2.6V2.7M22.4,-2.4V1.8M23.1,-5.6V5.6M27.6,-5.0V6.0M29.1,-4.5V4.4M33.3,-5.8V6.9M34.5,-3.8V3.8M39.1,-4.3V4.2M44.2,-10.6V12.9M46.5,-4.0V3.9M47.5,-2.9V3.2M48.4,-2.3V2.3M60.0,-6.8V8.6M66.0,-4.5V4.8M67.5,-2.9V3.1M68.2,-2.6V2.5M72.5,-3.0V3.4M73.5,-2.6V2.6M75.4,-5.6V5.6M77.4,-4.1V4.7M80.6,-7.0V5.7M81.2,-5.1V4.8M85.2,-5.1V3.9M88.1,-3.4V3.2M91.6,-7.0V6.1M107.1,-7.6V6.9M108.6,-3.8V4.5M110.4,-2.2V2.6M112.1,-4.8V4.3M115.5,-2.9V3.1M116.0,-2.9V2.3M117.5,-4.6V4.7M122.3,-4.3V4.3M128.6,-5.1V5.8M129.3,-4.0V3.9M144.5,-7.5V8.3M148.1,-2.3V2.4M151.0,-4.3V4.9M153.2,-2.5V3.0M158.2,-2.2V2.5M159.0,-2.2V2.1M166.3,-6.9V6.1M170.5,-2.2V2.0" stroke="#ff9900" stroke-width="0.6" stroke-opacity="0.8" fill="none"/><path d="M0.0,-5.7 L0.5,-10.1 L1.0,-9.3 L1.5,-6.7 L2.0,-4.8 L2.5,-4.8 L3.0,-3.3 L3.5,-3.4 L4.0,-2.7 L4.5,-2.3 L5.0,-2.2 L5.5,-2.4 L6.0,-4.1 L6.5,-3.2 L7.0,-3.2 L7.5,-2.3 L8.0,-2.3 L8.5,-2.1 L9.0,-2.1 L9.5,-2.1 L10.0,-2.0 L10.5,-3.3 L11.0,-4.3 L11.5,-3.3 L12.0,-2.9 L12.5,-2.9 L13.0,-2.3 L13.5,-2.1 L14.0,-1.9 L14.5,-1.9 L15.0,-2.2 L15.5,-2.1 L16.0,-1.9 L16.5,-3.9 L17.0,-6.9 L17.5,-6.4 L18.0,-4.3 L18.5,-3.5 L19.0,-3.3 L19.5,-2.5 L20.0,-2.5 L20.5,-2.1 L21.0,-1.8 L21.5,-2.0 L22.0,-1.8 L22.5,-1.9 L23.0,-4.3 L23.5,-5.8 L24.0,-4.9 L24.5,-4.0 L25.0,-3.7 L25.5,-2.9 L26.0,-3.0 L26.5,-2.7 L27.0,-2.5 L27.5,-4.3 L28.0,-6.8 L28.5,-4.7 L29.0,-4.3 L29.5,-3.7 L30.0,-2.7 L30.5,-2.6 L31.0,-2.4 L31.5,-2.2 L32.0,-2.2 L32.5,-4.4 L33.0,-6.9 L33.5,-4.8 L34.0,-4.5 L34.5,-3.6 L35.0,-3.0 L35.5,-2.6 L36.0,-2.5 L36.5,-2.4 L37.0,-2.3 L37.5,-4.6 L38.0,-7.6 L38.5,-6.0 L39.0,-4.7 L39.5,-3.6 L40.0,-3.4 L40.5,-2.6 L41.0,-2.3 L41.5,-2.6 L42.0,-2.3 L42.5,-2.1 L43.0,-2.0 L43.5,-6.4 L44.0,-10.9 L44.5,-9.8 L45.0,-6.2 L45.5,-4.9 L46.0,-4.8 L46.5,-3.4 L47.0,-3.0 L47.5,-2.9 L48.0,-2.6 L48.5,-2.4 L49.0,-3.9 L49.5,-5.4 L50.0,-5.0 L50.5,-4.3 L51.0,-3.9 L51.5,-2.9 L52.0,-2.7 L52.5,-2.5 L53.0,-2.1 L53.5,-2.0 L54.0,-4.3 L54.5,-7.2 L55.0,-5.1 L55.5,-4.4 L56.0,-4.0 L56.5,-3.6 L57.0,-2.8 L57.5,-2.5 L58.0,-2.4 L58.5,-2.4 L59.0,-2.2 L59.5,-3.9 L60.0,-6.5 L60.5,-5.0 L61.0,-5.0 L61.5,-3.5 L62.0,-3.0 L62.5,-3.2 L63.0,-2.5 L63.5,-2.4 L64.0,-2.3 L64.5,-4.1 L65.0,-6.6 L65.5,-5.5 L66.0,-4.4 L66.5,-3.8 L67.0,-3.1 L67.5,-2.9 L68.0,-2.7 L68.5,-2.1 L69.0,-2.3 L69.5,-4.2 L70.0,-6.6 L70.5,-5.4 L71.0,-3.8 L71.5,-3.8 L72.0,-2.7 L72.5,-2.4 L73.0,-2.6 L73.5,-2.0 L74.0,-2.0 L74.5,-2.2 L75.0,-2.8 L75.5,-4.6 L76.0,-6.0 L76.5,-5.1 L77.0,-4.2 L77.5,-3.9 L78.0,-3.0 L78.5,-2.9 L79.0,-2.3 L79.5,-4.8 L80.0,-7.3 L80.5,-5.2 L81.0,-5.0 L81.5,-3.5 L82.0,-3.1 L82.5,-2.7 L83.0,-2.4 L83.5,-2.2 L84.0,-1.9 L84.5,-1.8 L85.0,-2.9 L85.5,-5.6 L86.0,-6.1 L86.5,-5.0 L87.0,-3.6 L87.5,-3.1 L88.0,-2.7 L88.5,-2.7 L89.0,-2.0 L89.5,-2.1 L90.0,-2.0 L90.5,-2.0 L91.0,-4.2 L91.5,-6.3 L92.0,-5.4 L92.5,-3.6 L93.0,-3.1 L93.5,-2.7 L94.0,-2.7 L94.5,-2.3 L95.0,-2.1 L95.5,-2.0 L96.0,-4.3 L96.5,-5.9 L97.0,-5.8 L97.5,-4.3 L98.0,-4.0 L98.5,-3.4 L99.0,-3.2 L99.5,-2.6 L100.0,-2.5 L100.5,-2.2 L101.0,-1.9 L101.5,-4.5 L102.0,-7.2 L102.5,-5.2 L103.0,-4.7 L103.5,-3.9 L104.0,-3.5 L104.5,-3.0 L105.0,-2.5 L105.5,-2.2 L106.0,-2.2 L106.5,-4.2 L107.0,-7.7 L107.5,-5.7 L108.0,-4.6 L108.5,-4.3 L109.0,-3.6 L109.5,-2.5 L110.0,-2.3 L110.5,-2.0 L111.0,-1.8 L111.5,-1.8 L112.0,-4.5 L112.5,-7.1 L113.0,-5.4 L113.5,-4.6 L114.0,-3.4 L114.5,-3.2 L115.0,-2.9 L115.5,-2.3 L116.0,-2.4 L116.5,-2.2 L117.0,-2.0 L117.5,-4.1 L118.0,-7.0 L118.5,-5.2 L119.0,-4.2 L119.5,-3.6 L120.0,-2.9 L120.5,-2.6 L121.0,-2.2 L121.5,-2.0 L122.0,-2.1 L122.5,-3.8 L123.0,-7.3 L123.5,-5.4 L124.0,-4.8 L124.5,-4.0 L125.0,-3.7 L125.5,-2.8 L126.0,-2.9 L126.5,-2.5 L127.0,-2.4 L127.5,-4.6 L128.0,-7.2 L128.5,-5.1 L129.0,-4.5 L129.5,-3.1 L130.0,-3.3 L130.5,-2.8 L131.0,-2.6 L131.5,-2.2 L132.0,-2.0 L132.5,-2.1 L133.0,-1.7 L133.5,-3.8 L134.0,-7.1 L134.5,-5.0 L135.0,-4.4 L135.5,-3.7 L136.0,-3.1 L136.5,-2.8 L137.0,-2.3 L137.5,-2.1 L138.0,-2.3 L138.5,-3.8 L139.0,-6.4 L139.5,-5.8 L140.0,-4.5 L140.5,-4.2 L141.0,-3.2 L141.5,-2.8 L142.0,-2.3 L142.5,-2.2 L143.0,-2.0 L143.5,-1.9 L144.0,-4.5 L144.5,-6.1 L145.0,-4.7 L145.5,-4.4 L146.0,-3.2 L146.5,-2.7 L147.0,-2.3 L147.5,-2.4 L148.0,-1.9 L148.5,-1.8 L149.0,-1.9 L149.5,-3.9 L150.0,-6.0 L150.5,-4.7 L151.0,-4.0 L151.5,-3.9 L152.0,-3.2 L152.5,-2.4 L153.0,-2.7 L153.5,-2.3 L154.0,-2.3 L154.5,-3.8 L155.0,-5.7 L155.5,-4.6 L156.0,-4.0 L156.5,-3.4 L157.0,-3.1 L157.5,-2.7 L158.0,-2.5 L158.5,-2.1 L159.0,-2.2 L159.5,-2.1 L160.0,-3.7 L160.5,-5.8 L161.0,-4.9 L161.5,-4.1 L162.0,-3.9 L162.5,-3.0 L163.0,-2.6 L163.5,-2.7 L164.0,-2.5 L164.5,-2.5 L165.0,-2.2 L165.5,-4.6 L166.0,-7.4 L166.5,-5.0 L167.0,-4.1 L167.5,-3.9 L168.0,-3.0 L168.5,-2.7 L169.0,-2.3 L169.5,-2.2 L170.0,-1.9 L170.0,2.1 L169.5,2.2 L169.0,2.7 L168.5,2.7 L168.0,3.3 L167.5,3.7 L167.0,4.7 L166.5,5.2 L166.0,6.8 L165.5,4.4 L165.0,2.0 L164.5,2.5 L164.0,2.5 L163.5,2.8 L163.0,2.5 L162.5,3.4 L162.0,3.7 L161.5,4.2 L161.0,5.4 L160.5,7.1 L160.0,3.8 L159.5,1.8 L159.0,1.8 L158.5,2.1 L158.0,2.4 L157.5,2.4 L157.0,2.6 L156.5,3.7 L156.0,3.6 L155.5,4.5 L155.0,6.1 L154.5,3.9 L154.0,2.0 L153.5,2.4 L153.0,2.6 L152.5,2.9 L152.0,3.2 L151.5,3.6 L151.0,4.1 L150.5,5.1 L150.0,6.6 L149.5,3.9 L149.0,1.9 L148.5,2.1 L148.0,2.3 L147.5,2.1 L147.0,2.8 L146.5,2.7 L146.0,3.7 L145.5,3.9 L145.0,4.6 L144.5,6.6 L144.0,4.2 L143.5,2.1 L143.0,2.0 L142.5,2.3 L142.0,2.3 L141.5,3.2 L141.0,3.6 L140.5,3.6 L140.0,4.7 L139.5,6.1 L139.0,7.0 L138.5,4.4 L138.0,2.0 L137.5,2.5 L137.0,2.6 L136.5,2.6 L136.0,3.0 L135.5,3.5 L135.0,4.6 L134.5,4.8 L134.0,6.2 L133.5,4.4 L133.0,2.1 L132.5,1.8 L132.0,1.9 L131.5,2.3 L131.0,2.7 L130.5,2.4 L130.0,3.3 L129.5,3.3 L129.0,4.1 L128.5,5.1 L128.0,6.0 L127.5,4.4 L127.0,2.0 L126.5,2.6 L126.0,2.5 L125.5,2.9 L125.0,3.4 L124.5,3.5 L124.0,4.4 L123.5,5.5 L123.0,6.7 L122.5,3.7 L122.0,2.2 L121.5,2.4 L121.0,2.5 L120.5,2.3 L120.0,3.2 L119.5,3.6 L119.0,3.8 L118.5,5.3 L118.0,5.9 L117.5,4.5 L117.0,1.8 L116.5,2.2 L116.0,2.2 L115.5,2.6 L115.0,2.8 L114.5,3.1 L114.0,3.6 L113.5,4.7 L113.0,4.8 L112.5,6.5 L112.0,3.7 L111.5,1.8 L111.0,2.0 L110.5,2.2 L110.0,2.1 L109.5,2.4 L109.0,3.6 L108.5,4.3 L108.0,4.6 L107.5,5.1 L107.0,7.5 L106.5,4.7 L106.0,2.5 L105.5,2.7 L105.0,2.6 L104.5,2.7 L104.0,3.5 L103.5,3.4 L103.0,4.4 L102.5,5.0 L102.0,6.2 L101.5,3.7 L101.0,2.0 L100.5,2.3 L100.0,2.2 L99.5,2.6 L99.0,2.6 L98.5,3.4 L98.0,3.4 L97.5,4.5 L97.0,5.7 L96.5,5.9 L96.0,3.8 L95.5,1.8 L95.0,2.4 L94.5,2.4 L94.0,2.9 L93.5,2.7 L93.0,3.3 L92.5,4.0 L92.0,4.6 L91.5,5.9 L91.0,4.1 L90.5,1.9 L90.0,2.2 L89.5,2.0 L89.0,2.5 L88.5,2.5 L88.0,2.5 L87.5,3.0 L87.0,4.1 L86.5,4.1 L86.0,6.0 L85.5,5.7 L85.0,3.3 L84.5,2.0 L84.0,1.9 L83.5,2.5 L83.0,2.7 L82.5,2.5 L82.0,2.9 L81.5,4.1 L81.0,4.7 L80.5,5.0 L80.0,7.8 L79.5,4.4 L79.0,2.5 L78.5,3.0 L78.0,3.4 L77.5,3.2 L77.0,4.6 L76.5,5.5 L76.0,6.1 L75.5,5.5 L75.0,2.6 L74.5,2.1 L74.0,2.2 L73.5,2.3 L73.0,2.2 L72.5,2.6 L72.0,2.7 L71.5,3.7 L71.0,4.0 L70.5,5.9 L70.0,7.0 L69.5,4.6 L69.0,2.1 L68.5,2.3 L68.0,2.4 L67.5,3.1 L67.0,3.4 L66.5,3.2 L66.0,3.8 L65.5,5.9 L65.0,6.3 L64.5,4.1 L64.0,2.1 L63.5,2.1 L63.0,2.8 L62.5,3.0 L62.0,3.5 L61.5,3.5 L61.0,4.0 L60.5,4.9 L60.0,7.0 L59.5,4.6 L59.0,2.1 L58.5,2.1 L58.0,2.4 L57.5,2.3 L57.0,3.0 L56.5,3.5 L56.0,4.1 L55.5,4.5 L55.0,5.7 L54.5,7.1 L54.0,3.9 L53.5,2.0 L53.0,2.2 L52.5,2.4 L52.0,2.8 L51.5,2.9 L51.0,3.5 L50.5,4.2 L50.0,5.5 L49.5,5.7 L49.0,4.0 L48.5,2.4 L48.0,2.7 L47.5,3.0 L47.0,3.0 L46.5,3.3 L46.0,4.5 L45.5,5.1 L45.0,7.3 L44.5,7.9 L44.0,11.5 L43.5,6.8 L43.0,1.8 L42.5,2.0 L42.0,2.2 L41.5,2.3 L41.0,2.8 L40.5,2.5 L40.0,2.9 L39.5,3.5 L39.0,4.0 L38.5,6.1 L38.0,7.0 L37.5,3.8 L37.0,2.1 L36.5,2.1 L36.0,2.5 L35.5,2.5 L35.0,3.3 L34.5,3.3 L34.0,4.6 L33.5,5.5 L33.0,7.3 L32.5,4.4 L32.0,1.9 L31.5,2.1 L31.0,2.1 L30.5,2.6 L30.0,3.1 L29.5,3.7 L29.0,4.0 L28.5,5.5 L28.0,7.4 L27.5,4.3 L27.0,2.5 L26.5,2.2 L26.0,2.8 L25.5,3.1 L25.0,3.5 L24.5,4.3 L24.0,4.6 L23.5,6.9 L23.0,4.8 L22.5,2.2 L22.0,1.7 L21.5,2.1 L21.0,2.1 L20.5,2.4 L20.0,2.6 L19.5,2.7 L19.0,3.4 L18.5,3.5 L18.0,4.8 L17.5,5.5 L17.0,7.3 L16.5,4.1 L16.0,1.6 L15.5,2.1 L15.0,1.8 L14.5,1.8 L14.0,2.2 L13.5,2.3 L13.0,2.6 L12.5,2.6 L12.0,2.8 L11.5,3.7 L11.0,4.6 L10.5,3.3 L10.0,1.7 L9.5,1.8 L9.0,2.0 L8.5,2.2 L8.0,2.4 L7.5,2.8 L7.0,2.9 L6.5,3.2 L6.0,3.8 L5.5,2.6 L5.0,2.3 L4.5,2.5 L4.0,2.4 L3.5,2.9 L3.0,3.8 L2.5,4.8 L2.0,5.0 L1.5,6.8 L1.0,7.5 L0.5,11.2 L0.0,6.4Z" fill="#ff9900"/></g><rect x="0.8" y="10" width="0.8" height="56" fill="#ff9900" fill-opacity="0.45"/><rect x="169.6" y="3" width="1" height="70" fill="#ff9900" fill-opacity="0.7"/></svg><div class="hot">Hot</div><div class="lbl">a major classical piano hi... (0:09)</div></div>
<div class="card" style="left:422px;top:448px"><svg class="wf" width="171" height="109" viewBox="0 0 171 109"><g transform="translate(1,38)"><path d="M0.3,-3.3V2.6M0.6,-3.3V2.8M1.3,-3.1V2.7M1.7,-2.8V2.5M2.1,-2.6V2.9M2.6,-2.5V3.0M3.2,-3.1V2.8M3.6,-2.9V3.2M4.2,-3.4V3.1M4.7,-3.0V3.4M5.0,-2.6V3.5M5.8,-3.3V2.6M6.0,-2.6V3.5M6.5,-2.6V2.9M7.2,-6.0V5.5M7.7,-10.6V13.0M8.1,-17.7V13.9M8.7,-10.0V13.6M9.1,-9.0V12.0M9.8,-6.8V8.8M10.3,-7.2V7.4M10.6,-5.5V5.4M11.1,-4.6V3.8M11.8,-3.7V4.1M12.1,-3.9V4.7M12.6,-4.0V3.7M13.2,-4.4V4.2M13.6,-4.6V4.7M14.1,-4.6V4.1M14.7,-4.1V4.9M15.1,-4.0V3.9M15.7,-5.0V4.2M16.2,-4.2V4.0M16.6,-4.0V3.9M17.1,-3.9V4.0M17.5,-4.2V4.2M18.1,-4.3V4.5M18.8,-4.9V4.9M19.1,-6.9V6.0M19.6,-6.0V4.9M20.0,-5.0V4.9M20.6,-4.4V5.9M21.1,-3.9V4.3M21.6,-4.1V5.2M22.0,-5.7V4.6M22.8,-5.8V4.3M23.3,-5.3V4.5M23.8,-5.2V5.0M24.3,-5.8V4.9M24.6,-5.2V5.6M25.2,-5.2V5.1M25.6,-5.5V4.4M26.2,-4.3V4.9M26.7,-5.8V5.6M27.2,-5.6V4.5M27.7,-6.0V4.3M28.1,-4.4V4.2M28.8,-5.8V5.0M29.1,-5.7V4.4M29.5,-5.4V4.6M30.2,-4.8V5.7M30.6,-5.4V5.8M31.3,-5.0V4.8M31.7,-5.7V5.3M32.2,-6.5V5.3M32.7,-5.7V5.4M33.1,-6.1V6.1M33.7,-6.4V6.3M34.3,-6.0V6.3M34.5,-5.7V5.4M35.0,-5.5V6.3M35.6,-5.7V6.4M36.3,-5.2V5.3M36.7,-6.2V5.8M37.3,-5.3V4.7M37.7,-4.7V5.2M38.1,-6.1V4.3M38.7,-4.2V4.2M39.3,-10.4V9.4M39.6,-15.4V15.0M40.1,-28.4V22.5M40.7,-16.6V17.5M41.1,-18.6V15.7M41.8,-13.4V11.3M42.1,-9.6V11.6M42.6,-8.6V9.5M43.3,-9.1V10.2M43.6,-10.2V8.3M44.1,-9.4V10.1M44.7,-9.6V7.9M45.0,-8.1V7.9M45.8,-9.3V9.6M46.0,-7.6V10.3M46.8,-8.5V10.3M47.2,-10.4V10.0M47.6,-9.0V10.2M48.0,-7.2V8.9M48.7,-9.7V8.1M49.2,-7.1V9.6M49.8,-7.1V7.7M50.2,-9.8V8.5M50.6,-8.9V8.1M51.3,-7.3V8.4M51.6,-7.3V7.7M52.2,-10.2V10.9M52.5,-15.9V16.5M53.2,-24.5V26.3M53.6,-21.2V22.8M54.3,-17.4V17.1M54.6,-16.5V13.9M55.3,-10.9V10.0M55.7,-10.3V8.7M56.2,-7.6V7.7M56.5,-7.6V9.7M57.2,-8.1V8.2M57.7,-7.7V8.5M58.2,-9.8V7.6M58.7,-8.9V10.5M59.1,-8.2V8.6M59.5,-8.2V8.0M60.0,-11.6V9.6M60.7,-10.0V8.3M61.2,-8.2V10.6M61.7,-8.4V8.1M62.0,-9.7V8.9M62.6,-10.8V8.0M63.1,-9.5V9.6M63.8,-8.1V9.2M64.1,-9.5V9.7M64.7,-8.6V9.3M65.2,-7.9V7.5M65.5,-7.5V7.0M66.2,-8.2V6.6M66.7,-9.8V7.4M67.1,-9.6V7.8M67.7,-18.4V16.8M68.3,-29.2V21.9M68.5,-19.4V21.5M69.3,-14.8V18.3M69.8,-12.5V11.8M70.1,-10.9V13.1M70.6,-9.0V11.2M71.0,-10.1V10.6M71.6,-9.6V9.3M72.1,-10.0V9.7M72.5,-10.0V9.6M73.1,-11.2V10.5M73.6,-10.1V9.0M74.2,-12.9V12.3M74.7,-22.8V25.8M75.0,-29.7V30.8M75.6,-25.2V23.2M76.1,-21.4V20.5M76.6,-17.0V17.2M77.2,-11.9V10.5M77.6,-9.2V11.3M78.2,-10.0V10.6M78.8,-7.9V7.5M79.2,-8.0V10.2M79.6,-7.6V8.1M80.3,-6.6V8.8M80.8,-8.3V9.3M81.2,-6.2V6.2M81.6,-8.8V8.6M82.0,-8.1V6.7M82.8,-6.4V6.7M83.2,-9.1V8.4M83.6,-8.7V9.1M84.2,-17.1V15.9M84.7,-10.9V11.4M85.2,-17.1V17.8M85.6,-20.4V10.7M86.1,-14.8V20.4M86.6,-19.9V15.4M87.1,-11.6V15.9M87.7,-18.4V11.4M88.2,-16.6V14.8M88.5,-14.3V13.0M89.3,-14.3V22.0M89.5,-21.7V16.4M90.2,-17.4V16.4M90.8,-21.5V24.2M91.1,-19.3V20.0M91.6,-16.7V16.3M92.2,-19.1V14.8M92.5,-13.7V12.3M93.2,-12.2V14.8M93.5,-11.7V15.0M94.1,-12.5V20.5M94.7,-15.3V20.6M95.1,-12.6V19.7M95.7,-12.1V12.2M96.2,-13.6V13.5M96.7,-19.7V14.5M97.2,-16.7V22.0M97.7,-17.0V22.7M98.1,-19.1V14.5M98.6,-15.0V14.7M99.0,-16.8V17.3M99.5,-17.4V14.5M100.1,-14.5V22.8M100.5,-14.5V16.9M101.0,-13.8V13.8M101.7,-13.2V15.8M102.2,-14.8V13.3M102.6,-16.0V13.0M103.2,-12.6V12.9M103.7,-20.1V14.5M104.1,-22.9V14.2M104.7,-16.1V15.7M105.0,-19.6V13.4M105.6,-19.3V13.9M106.2,-22.8V17.5M106.8,-17.9V17.5M107.2,-14.5V12.9M107.6,-14.1V18.1M108.0,-13.5V14.9M108.7,-12.9V12.4M109.1,-16.1V11.9M109.8,-11.2V20.8M110.2,-20.2V12.9M110.6,-16.8V10.6M111.1,-18.4V13.7M111.6,-16.6V10.8M112.3,-20.5V11.6M112.7,-15.9V13.5M113.2,-12.1V17.3M113.8,-15.3V20.8M114.1,-18.4V20.3M114.8,-13.4V20.4M115.3,-16.4V13.2M115.6,-16.8V17.9M116.1,-14.0V24.1M116.7,-19.5V15.2M117.0,-23.9V16.5M117.7,-19.2V17.2M118.3,-13.2V15.8M118.5,-13.7V13.6M119.2,-12.9V14.1M119.6,-18.0V20.3M120.1,-10.6V14.7M120.7,-14.5V10.6M121.1,-21.0V19.0M121.7,-11.9V11.2M122.2,-17.8V15.6M122.6,-11.2V20.5M123.2,-13.0V14.6M123.8,-19.2V18.0M124.2,-15.4V11.7M124.5,-12.9V16.9M125.1,-14.4V11.8M125.6,-18.7V18.7M126.2,-19.9V14.4M126.6,-16.7V12.0M127.1,-13.5V16.3M127.6,-11.8V13.1M128.1,-14.1V14.0M128.7,-11.3V11.1M129.1,-11.5V11.7M129.8,-15.4V11.4M130.2,-13.1V19.1M130.5,-18.8V16.4M131.3,-20.8V17.5M131.8,-14.3V21.9M132.1,-13.1V17.7M132.7,-22.9V13.3M133.2,-14.7V16.4M133.7,-17.1V14.7M134.2,-14.1V15.0M134.6,-18.4V18.8M135.0,-20.7V16.2M135.7,-16.0V14.9M136.3,-14.2V14.6M136.8,-15.4V18.4M137.1,-18.7V14.1M137.6,-13.9V15.6M138.1,-16.4V18.2M138.7,-21.9V14.3M139.3,-21.1V14.0M139.6,-15.9V20.7M140.2,-14.0V18.5M140.5,-13.5V23.2M141.0,-16.5V21.3M141.7,-13.7V14.1M142.2,-15.6V15.8M142.6,-18.8V14.1M143.0,-21.3V18.3M143.6,-17.7V14.6M144.0,-15.2V18.3M144.6,-20.4V18.8M145.3,-16.3V20.5M145.5,-14.2V14.7M146.0,-14.9V13.8M146.7,-17.9V15.1M147.3,-16.9V13.7M147.5,-18.0V18.2M148.2,-17.1V17.5M148.6,-12.5V21.5M149.2,-13.1V20.7M149.5,-19.3V15.9M150.3,-17.0V16.3M150.6,-20.3V19.5M151.2,-13.4V17.7M151.5,-15.4V16.5M152.0,-12.9V14.3M152.5,-13.5V20.9M153.0,-15.0V19.1M153.7,-12.6V13.3M154.1,-16.2V17.6M154.7,-13.3V13.1M155.2,-13.6V17.5M155.6,-16.7V17.7M156.2,-13.4V20.1M156.6,-14.5V13.6M157.2,-13.1V21.8M157.5,-14.0V14.0M158.1,-15.1V12.5M158.7,-11.6V19.7M159.2,-19.7V11.6M159.8,-12.6V12.4M160.3,-12.6V18.6M160.8,-21.4V13.6M161.0,-19.7V17.6M161.7,-20.3V14.6M162.3,-15.6V23.9M162.6,-14.0V15.8M163.2,-20.3V19.8M163.7,-18.7V13.3M164.3,-14.5V16.5M164.8,-15.9V14.1M165.2,-12.1V12.7M165.6,-16.7V11.2M166.0,-11.8V16.2M166.8,-12.7V17.8M167.0,-17.5V17.3M167.8,-18.2V19.1M168.1,-20.8V17.7M168.8,-15.4V14.8M169.1,-14.1V13.3M169.8,-14.3V13.5M170.1,-14.7V14.6" stroke="#ff9900" stroke-width="0.6" stroke-opacity="0.8" fill="none"/><path d="M0.0,-2.5 L0.2,-2.2 L0.5,-2.7 L0.8,-2.1 L1.0,-2.1 L1.2,-2.9 L1.5,-2.5 L1.8,-2.4 L2.0,-2.7 L2.2,-2.2 L2.5,-2.4 L2.8,-2.3 L3.0,-2.6 L3.2,-2.5 L3.5,-2.5 L3.8,-1.9 L4.0,-2.4 L4.2,-2.4 L4.5,-2.6 L4.8,-2.1 L5.0,-3.1 L5.2,-2.0 L5.5,-2.6 L5.8,-2.0 L6.0,-2.5 L6.2,-2.5 L6.5,-2.4 L6.8,-2.4 L7.0,-2.9 L7.2,-5.2 L7.5,-10.1 L7.8,-9.7 L8.0,-15.3 L8.2,-12.9 L8.5,-10.7 L8.8,-11.8 L9.0,-9.9 L9.2,-9.2 L9.5,-8.4 L9.8,-7.9 L10.0,-5.2 L10.2,-4.4 L10.5,-5.8 L10.8,-4.1 L11.0,-3.4 L11.2,-2.9 L11.5,-4.1 L11.8,-4.0 L12.0,-3.7 L12.2,-3.9 L12.5,-3.2 L12.8,-3.9 L13.0,-3.2 L13.2,-4.4 L13.5,-4.0 L13.8,-3.6 L14.0,-2.9 L14.2,-3.7 L14.5,-4.0 L14.8,-4.2 L15.0,-3.8 L15.2,-3.7 L15.5,-4.3 L15.8,-3.7 L16.0,-3.8 L16.2,-4.2 L16.5,-3.6 L16.8,-4.7 L17.0,-4.2 L17.2,-4.5 L17.5,-3.0 L17.8,-3.6 L18.0,-4.3 L18.2,-3.5 L18.5,-3.3 L18.8,-5.1 L19.0,-6.7 L19.2,-4.6 L19.5,-4.7 L19.8,-5.2 L20.0,-3.6 L20.2,-4.3 L20.5,-4.7 L20.8,-4.9 L21.0,-3.0 L21.2,-3.1 L21.5,-4.7 L21.8,-4.3 L22.0,-3.4 L22.2,-4.9 L22.5,-3.2 L22.8,-4.3 L23.0,-4.1 L23.2,-4.0 L23.5,-5.2 L23.8,-4.7 L24.0,-5.6 L24.2,-5.2 L24.5,-4.1 L24.8,-4.4 L25.0,-4.3 L25.2,-5.3 L25.5,-4.7 L25.8,-5.4 L26.0,-4.0 L26.2,-3.3 L26.5,-3.8 L26.8,-3.3 L27.0,-4.5 L27.2,-3.5 L27.5,-3.2 L27.8,-4.0 L28.0,-3.5 L28.2,-3.9 L28.5,-4.1 L28.8,-4.9 L29.0,-4.9 L29.2,-3.9 L29.5,-4.9 L29.8,-3.2 L30.0,-3.3 L30.2,-4.6 L30.5,-3.8 L30.8,-5.2 L31.0,-5.4 L31.2,-4.8 L31.5,-3.5 L31.8,-5.2 L32.0,-3.9 L32.2,-4.9 L32.5,-4.8 L32.8,-4.8 L33.0,-4.5 L33.2,-5.4 L33.5,-6.2 L33.8,-6.2 L34.0,-6.5 L34.2,-5.0 L34.5,-6.7 L34.8,-4.6 L35.0,-6.2 L35.2,-4.7 L35.5,-5.6 L35.8,-5.5 L36.0,-4.1 L36.2,-4.1 L36.5,-6.3 L36.8,-4.7 L37.0,-4.7 L37.2,-5.0 L37.5,-4.7 L37.8,-4.1 L38.0,-3.9 L38.2,-4.4 L38.5,-4.4 L38.8,-3.0 L39.0,-3.1 L39.2,-5.8 L39.5,-11.3 L39.8,-12.6 L40.0,-22.5 L40.2,-21.6 L40.5,-18.4 L40.8,-15.2 L41.0,-16.0 L41.2,-14.0 L41.5,-12.3 L41.8,-10.0 L42.0,-9.7 L42.2,-8.4 L42.5,-6.8 L42.8,-9.9 L43.0,-8.8 L43.2,-8.7 L43.5,-9.8 L43.8,-9.2 L44.0,-8.7 L44.2,-8.0 L44.5,-7.8 L44.8,-6.7 L45.0,-8.4 L45.2,-9.5 L45.5,-6.3 L45.8,-6.9 L46.0,-6.2 L46.2,-8.2 L46.5,-7.6 L46.8,-8.4 L47.0,-11.9 L47.2,-7.3 L47.5,-10.0 L47.8,-8.1 L48.0,-8.6 L48.2,-5.7 L48.5,-6.6 L48.8,-6.4 L49.0,-8.0 L49.2,-7.7 L49.5,-8.6 L49.8,-5.8 L50.0,-8.2 L50.2,-7.6 L50.5,-6.5 L50.8,-8.6 L51.0,-7.7 L51.2,-7.3 L51.5,-7.6 L51.8,-8.4 L52.0,-5.5 L52.2,-8.0 L52.5,-12.8 L52.8,-21.6 L53.0,-26.3 L53.2,-18.0 L53.5,-21.6 L53.8,-23.2 L54.0,-19.5 L54.2,-18.6 L54.5,-16.2 L54.8,-9.8 L55.0,-13.0 L55.2,-9.1 L55.5,-6.5 L55.8,-7.8 L56.0,-9.1 L56.2,-9.2 L56.5,-8.8 L56.8,-7.0 L57.0,-9.2 L57.2,-8.2 L57.5,-6.7 L57.8,-7.4 L58.0,-7.6 L58.2,-6.9 L58.5,-9.3 L58.8,-5.9 L59.0,-8.3 L59.2,-7.1 L59.5,-7.4 L59.8,-9.1 L60.0,-10.0 L60.2,-6.8 L60.5,-10.2 L60.8,-9.1 L61.0,-7.9 L61.2,-7.0 L61.5,-8.7 L61.8,-7.4 L62.0,-8.7 L62.2,-6.6 L62.5,-8.6 L62.8,-6.9 L63.0,-9.9 L63.2,-8.9 L63.5,-7.9 L63.8,-8.3 L64.0,-6.7 L64.2,-7.3 L64.5,-6.7 L64.8,-7.0 L65.0,-7.2 L65.2,-6.2 L65.5,-8.3 L65.8,-7.3 L66.0,-7.1 L66.2,-6.5 L66.5,-6.3 L66.8,-5.9 L67.0,-8.3 L67.2,-9.8 L67.5,-15.9 L67.8,-22.6 L68.0,-25.4 L68.2,-23.5 L68.5,-20.9 L68.8,-16.9 L69.0,-13.7 L69.2,-12.6 L69.5,-11.3 L69.8,-13.7 L70.0,-11.6 L70.2,-10.9 L70.5,-9.3 L70.8,-9.7 L71.0,-10.0 L71.2,-9.8 L71.5,-9.0 L71.8,-10.8 L72.0,-9.8 L72.2,-10.6 L72.5,-10.6 L72.8,-9.3 L73.0,-7.5 L73.2,-7.8 L73.5,-9.0 L73.8,-9.0 L74.0,-7.0 L74.2,-9.9 L74.5,-19.1 L74.8,-23.9 L75.0,-27.5 L75.2,-28.1 L75.5,-26.8 L75.8,-24.8 L76.0,-17.6 L76.2,-15.2 L76.5,-10.7 L76.8,-11.9 L77.0,-8.6 L77.2,-10.4 L77.5,-7.1 L77.8,-6.2 L78.0,-9.1 L78.2,-8.3 L78.5,-7.3 L78.8,-7.1 L79.0,-8.2 L79.2,-6.6 L79.5,-6.9 L79.8,-5.4 L80.0,-8.4 L80.2,-6.1 L80.5,-5.1 L80.8,-5.9 L81.0,-5.8 L81.2,-5.1 L81.5,-5.1 L81.8,-6.9 L82.0,-5.7 L82.2,-5.0 L82.5,-6.6 L82.8,-4.7 L83.0,-5.1 L83.2,-7.1 L83.5,-7.0 L83.8,-9.9 L84.0,-11.9 L84.2,-10.4 L84.5,-11.4 L84.8,-11.0 L85.0,-11.3 L85.2,-10.3 L85.5,-10.9 L85.8,-10.1 L86.0,-9.3 L86.2,-7.9 L86.5,-10.2 L86.8,-10.5 L87.0,-9.7 L87.2,-11.2 L87.5,-9.3 L87.8,-13.1 L88.0,-10.7 L88.2,-11.2 L88.5,-14.7 L88.8,-10.7 L89.0,-11.0 L89.2,-10.2 L89.5,-14.8 L89.8,-12.0 L90.0,-15.2 L90.2,-11.9 L90.5,-16.9 L90.8,-10.7 L91.0,-14.0 L91.2,-13.7 L91.5,-15.8 L91.8,-10.6 L92.0,-14.5 L92.2,-11.2 L92.5,-9.3 L92.8,-9.7 L93.0,-13.6 L93.2,-14.4 L93.5,-12.1 L93.8,-8.9 L94.0,-13.8 L94.2,-12.9 L94.5,-10.0 L94.8,-13.1 L95.0,-11.0 L95.2,-12.4 L95.5,-14.2 L95.8,-9.1 L96.0,-9.8 L96.2,-13.8 L96.5,-14.0 L96.8,-12.0 L97.0,-11.2 L97.2,-13.8 L97.5,-15.2 L97.8,-11.4 L98.0,-14.7 L98.2,-13.4 L98.5,-14.3 L98.8,-18.1 L99.0,-16.6 L99.2,-17.6 L99.5,-11.2 L99.8,-13.2 L100.0,-11.3 L100.2,-14.2 L100.5,-14.5 L100.8,-11.1 L101.0,-11.2 L101.2,-9.9 L101.5,-11.2 L101.8,-9.4 L102.0,-10.9 L102.2,-12.7 L102.5,-10.9 L102.8,-11.5 L103.0,-9.2 L103.2,-9.7 L103.5,-13.7 L103.8,-13.6 L104.0,-11.6 L104.2,-12.5 L104.5,-10.6 L104.8,-10.3 L105.0,-11.8 L105.2,-15.6 L105.5,-15.9 L105.8,-14.4 L106.0,-9.9 L106.2,-15.1 L106.5,-10.9 L106.8,-13.3 L107.0,-14.9 L107.2,-13.4 L107.5,-14.4 L107.8,-14.9 L108.0,-13.6 L108.2,-13.1 L108.5,-14.7 L108.8,-10.9 L109.0,-11.6 L109.2,-11.0 L109.5,-11.0 L109.8,-11.3 L110.0,-9.9 L110.2,-10.4 L110.5,-8.3 L110.8,-11.5 L111.0,-12.7 L111.2,-8.4 L111.5,-12.9 L111.8,-11.8 L112.0,-11.9 L112.2,-9.8 L112.5,-12.5 L112.8,-10.3 L113.0,-12.2 L113.2,-10.3 L113.5,-13.1 L113.8,-14.2 L114.0,-11.9 L114.2,-10.1 L114.5,-11.6 L114.8,-12.7 L115.0,-14.1 L115.2,-11.8 L115.5,-12.8 L115.8,-11.7 L116.0,-16.1 L116.2,-15.0 L116.5,-12.2 L116.8,-14.2 L117.0,-14.2 L117.2,-13.5 L117.5,-11.6 L117.8,-13.2 L118.0,-10.4 L118.2,-11.0 L118.5,-13.9 L118.8,-11.3 L119.0,-12.7 L119.2,-9.0 L119.5,-9.9 L119.8,-12.7 L120.0,-9.2 L120.2,-10.0 L120.5,-11.0 L120.8,-11.3 L121.0,-8.3 L121.2,-12.9 L121.5,-9.6 L121.8,-11.1 L122.0,-12.5 L122.2,-10.9 L122.5,-9.2 L122.8,-10.4 L123.0,-10.5 L123.2,-9.9 L123.5,-12.8 L123.8,-10.5 L124.0,-12.2 L124.2,-9.4 L124.5,-11.0 L124.8,-11.3 L125.0,-10.0 L125.2,-12.5 L125.5,-13.1 L125.8,-12.0 L126.0,-12.5 L126.2,-13.0 L126.5,-11.7 L126.8,-9.4 L127.0,-12.1 L127.2,-12.0 L127.5,-8.6 L127.8,-11.8 L128.0,-9.3 L128.2,-8.6 L128.5,-8.2 L128.8,-12.2 L129.0,-10.0 L129.2,-12.8 L129.5,-11.0 L129.8,-12.7 L130.0,-8.8 L130.2,-13.4 L130.5,-13.7 L130.8,-10.3 L131.0,-12.0 L131.2,-10.2 L131.5,-12.0 L131.8,-11.1 L132.0,-9.4 L132.2,-12.9 L132.5,-13.6 L132.8,-12.6 L133.0,-15.6 L133.2,-15.8 L133.5,-14.4 L133.8,-16.5 L134.0,-16.1 L134.2,-13.2 L134.5,-15.5 L134.8,-16.3 L135.0,-16.7 L135.2,-15.4 L135.5,-12.8 L135.8,-12.8 L136.0,-16.6 L136.2,-10.6 L136.5,-13.8 L136.8,-12.9 L137.0,-16.9 L137.2,-14.5 L137.5,-14.2 L137.8,-15.1 L138.0,-13.1 L138.2,-13.1 L138.5,-16.0 L138.8,-15.1 L139.0,-13.6 L139.2,-13.1 L139.5,-10.4 L139.8,-13.4 L140.0,-12.6 L140.2,-16.5 L140.5,-14.7 L140.8,-16.4 L141.0,-13.4 L141.2,-10.6 L141.5,-12.3 L141.8,-16.5 L142.0,-11.1 L142.2,-12.7 L142.5,-14.5 L142.8,-14.4 L143.0,-12.6 L143.2,-12.7 L143.5,-13.1 L143.8,-11.5 L144.0,-17.2 L144.2,-14.3 L144.5,-14.1 L144.8,-11.5 L145.0,-15.7 L145.2,-14.0 L145.5,-14.9 L145.8,-10.8 L146.0,-11.3 L146.2,-9.8 L146.5,-9.8 L146.8,-11.7 L147.0,-12.1 L147.2,-10.0 L147.5,-12.1 L147.8,-10.9 L148.0,-9.4 L148.2,-10.8 L148.5,-14.2 L148.8,-9.7 L149.0,-11.7 L149.2,-12.2 L149.5,-12.2 L149.8,-16.3 L150.0,-15.5 L150.2,-16.4 L150.5,-13.6 L150.8,-11.2 L151.0,-13.0 L151.2,-9.8 L151.5,-10.1 L151.8,-12.0 L152.0,-14.3 L152.2,-12.2 L152.5,-14.1 L152.8,-10.5 L153.0,-14.3 L153.2,-13.4 L153.5,-10.6 L153.8,-10.0 L154.0,-11.0 L154.2,-13.3 L154.5,-15.1 L154.8,-12.5 L155.0,-11.6 L155.2,-13.0 L155.5,-16.0 L155.8,-15.3 L156.0,-13.8 L156.2,-16.6 L156.5,-12.6 L156.8,-11.2 L157.0,-11.3 L157.2,-10.2 L157.5,-13.5 L157.8,-9.1 L158.0,-13.6 L158.2,-14.3 L158.5,-11.1 L158.8,-13.6 L159.0,-12.8 L159.2,-11.5 L159.5,-10.1 L159.8,-9.3 L160.0,-12.4 L160.2,-14.0 L160.5,-12.6 L160.8,-13.7 L161.0,-13.0 L161.2,-16.1 L161.5,-14.5 L161.8,-16.6 L162.0,-13.3 L162.2,-17.3 L162.5,-10.8 L162.8,-16.0 L163.0,-10.8 L163.2,-10.2 L163.5,-12.3 L163.8,-12.1 L164.0,-12.2 L164.2,-11.7 L164.5,-9.5 L164.8,-13.4 L165.0,-11.9 L165.2,-10.4 L165.5,-9.6 L165.8,-10.7 L166.0,-13.3 L166.2,-8.5 L166.5,-12.0 L166.8,-8.5 L167.0,-11.4 L167.2,-8.5 L167.5,-9.3 L167.8,-9.2 L168.0,-10.9 L168.2,-11.4 L168.5,-14.7 L168.8,-12.3 L169.0,-13.9 L169.2,-10.1 L169.5,-13.6 L169.8,-12.9 L170.0,-12.2 L170.0,11.9 L169.8,15.6 L169.5,12.7 L169.2,14.4 L169.0,10.8 L168.8,11.8 L168.5,11.0 L168.2,12.4 L168.0,13.7 L167.8,12.3 L167.5,13.5 L167.2,10.5 L167.0,9.4 L166.8,13.7 L166.5,12.3 L166.2,8.7 L166.0,10.4 L165.8,12.5 L165.5,10.7 L165.2,12.7 L165.0,10.4 L164.8,9.7 L164.5,8.9 L164.2,10.2 L164.0,9.4 L163.8,11.6 L163.5,15.1 L163.2,11.8 L163.0,15.5 L162.8,16.5 L162.5,11.3 L162.2,14.5 L162.0,13.4 L161.8,16.5 L161.5,12.7 L161.2,13.1 L161.0,16.4 L160.8,12.1 L160.5,15.3 L160.2,15.2 L160.0,9.8 L159.8,13.4 L159.5,10.9 L159.2,12.2 L159.0,8.8 L158.8,12.6 L158.5,12.0 L158.2,11.0 L158.0,14.4 L157.8,10.0 L157.5,10.7 L157.2,9.5 L157.0,13.0 L156.8,12.6 L156.5,13.9 L156.2,13.0 L156.0,12.3 L155.8,15.1 L155.5,12.2 L155.2,14.0 L155.0,15.5 L154.8,13.5 L154.5,10.1 L154.2,9.6 L154.0,15.9 L153.8,9.7 L153.5,9.9 L153.2,12.7 L153.0,13.7 L152.8,14.7 L152.5,13.7 L152.2,12.7 L152.0,13.9 L151.8,14.3 L151.5,11.4 L151.2,12.4 L151.0,15.3 L150.8,13.7 L150.5,10.2 L150.2,15.2 L150.0,15.7 L149.8,16.4 L149.5,11.2 L149.2,13.7 L149.0,12.3 L148.8,9.9 L148.5,14.2 L148.2,10.7 L148.0,12.8 L147.8,13.3 L147.5,10.4 L147.2,10.6 L147.0,12.5 L146.8,13.4 L146.5,9.4 L146.2,13.3 L146.0,12.0 L145.8,12.5 L145.5,10.6 L145.2,11.3 L145.0,12.0 L144.8,16.2 L144.5,14.7 L144.2,16.1 L144.0,17.6 L143.8,15.2 L143.5,18.2 L143.2,11.8 L143.0,13.8 L142.8,14.0 L142.5,10.6 L142.2,15.9 L142.0,13.5 L141.8,14.4 L141.5,11.5 L141.2,12.8 L141.0,11.5 L140.8,15.6 L140.5,11.7 L140.2,10.9 L140.0,10.6 L139.8,11.1 L139.5,13.1 L139.2,14.0 L139.0,15.8 L138.8,12.5 L138.5,15.5 L138.2,15.6 L138.0,16.1 L137.8,11.0 L137.5,15.8 L137.2,15.0 L137.0,17.3 L136.8,16.5 L136.5,16.9 L136.2,12.4 L136.0,11.9 L135.8,10.8 L135.5,12.3 L135.2,17.2 L135.0,13.6 L134.8,15.5 L134.5,15.7 L134.2,10.9 L134.0,15.6 L133.8,10.5 L133.5,11.4 L133.2,10.4 L133.0,12.1 L132.8,11.7 L132.5,12.3 L132.2,10.2 L132.0,9.5 L131.8,12.0 L131.5,12.5 L131.2,11.6 L131.0,14.4 L130.8,9.8 L130.5,9.5 L130.2,12.3 L130.0,11.7 L129.8,8.6 L129.5,11.9 L129.2,12.7 L129.0,9.8 L128.8,8.0 L128.5,11.5 L128.2,13.2 L128.0,10.5 L127.8,8.9 L127.5,11.8 L127.2,11.1 L127.0,12.8 L126.8,12.4 L126.5,11.4 L126.2,13.4 L126.0,13.5 L125.8,12.4 L125.5,13.3 L125.2,9.3 L125.0,12.4 L124.8,9.5 L124.5,9.9 L124.2,13.5 L124.0,11.1 L123.8,8.4 L123.5,10.0 L123.2,12.8 L123.0,13.4 L122.8,10.2 L122.5,9.4 L122.2,12.1 L122.0,11.6 L121.8,9.8 L121.5,9.3 L121.2,9.3 L121.0,11.1 L120.8,11.6 L120.5,12.7 L120.2,7.9 L120.0,10.9 L119.8,10.2 L119.5,12.8 L119.2,9.1 L119.0,13.0 L118.8,12.7 L118.5,9.4 L118.2,10.0 L118.0,14.1 L117.8,15.0 L117.5,11.0 L117.2,14.9 L117.0,16.5 L116.8,14.7 L116.5,16.2 L116.2,15.7 L116.0,13.9 L115.8,15.1 L115.5,12.8 L115.2,12.7 L115.0,11.9 L114.8,10.6 L114.5,11.2 L114.2,13.5 L114.0,11.2 L113.8,14.2 L113.5,9.7 L113.2,13.9 L113.0,14.0 L112.8,14.6 L112.5,13.3 L112.2,8.9 L112.0,8.5 L111.8,8.5 L111.5,12.5 L111.2,8.8 L111.0,9.6 L110.8,8.7 L110.5,10.0 L110.2,8.2 L110.0,11.4 L109.8,12.1 L109.5,9.7 L109.2,13.9 L109.0,14.5 L108.8,12.5 L108.5,11.1 L108.2,10.9 L108.0,14.8 L107.8,14.5 L107.5,11.7 L107.2,12.7 L107.0,11.8 L106.8,12.9 L106.5,12.9 L106.2,9.7 L106.0,13.2 L105.8,14.2 L105.5,11.5 L105.2,14.5 L105.0,13.9 L104.8,12.0 L104.5,15.5 L104.2,11.6 L104.0,15.1 L103.8,9.6 L103.5,14.5 L103.2,14.4 L103.0,10.6 L102.8,12.6 L102.5,10.6 L102.2,12.7 L102.0,12.0 L101.8,14.3 L101.5,14.3 L101.2,15.5 L101.0,12.5 L100.8,10.2 L100.5,15.5 L100.2,16.9 L100.0,16.5 L99.8,13.8 L99.5,11.4 L99.2,14.6 L99.0,13.4 L98.8,14.7 L98.5,13.1 L98.2,16.5 L98.0,16.9 L97.8,13.9 L97.5,10.3 L97.2,11.3 L97.0,13.8 L96.8,9.6 L96.5,14.7 L96.2,12.2 L96.0,10.7 L95.8,9.9 L95.5,14.0 L95.2,12.4 L95.0,10.3 L94.8,11.2 L94.5,11.9 L94.2,10.5 L94.0,9.8 L93.8,13.8 L93.5,13.7 L93.2,11.1 L93.0,11.5 L92.8,12.7 L92.5,14.8 L92.2,12.8 L92.0,15.5 L91.8,13.6 L91.5,13.7 L91.2,13.4 L91.0,10.3 L90.8,15.7 L90.5,11.9 L90.2,10.8 L90.0,16.0 L89.8,17.0 L89.5,12.8 L89.2,13.9 L89.0,15.7 L88.8,14.0 L88.5,12.1 L88.2,9.6 L88.0,10.4 L87.8,10.8 L87.5,12.9 L87.2,10.6 L87.0,12.4 L86.8,12.6 L86.5,12.0 L86.2,9.4 L86.0,10.6 L85.8,10.9 L85.5,7.8 L85.2,8.8 L85.0,10.8 L84.8,8.6 L84.5,10.5 L84.2,11.2 L84.0,7.6 L83.8,7.9 L83.5,9.5 L83.2,5.4 L83.0,6.2 L82.8,6.9 L82.5,6.6 L82.2,7.3 L82.0,7.3 L81.8,6.9 L81.5,4.6 L81.2,6.3 L81.0,5.4 L80.8,6.2 L80.5,5.6 L80.2,8.1 L80.0,6.0 L79.8,6.0 L79.5,6.4 L79.2,7.5 L79.0,7.6 L78.8,7.5 L78.5,9.0 L78.2,6.0 L78.0,9.4 L77.8,8.7 L77.5,10.2 L77.2,8.6 L77.0,8.7 L76.8,12.3 L76.5,14.8 L76.2,16.9 L76.0,14.6 L75.8,23.1 L75.5,25.5 L75.2,30.8 L75.0,35.5 L74.8,27.3 L74.5,19.6 L74.2,9.9 L74.0,9.9 L73.8,7.1 L73.5,8.6 L73.2,8.5 L73.0,10.3 L72.8,10.8 L72.5,10.7 L72.2,8.2 L72.0,10.7 L71.8,10.2 L71.5,9.3 L71.2,9.4 L71.0,7.4 L70.8,8.8 L70.5,9.7 L70.2,10.9 L70.0,11.9 L69.8,11.6 L69.5,14.4 L69.2,13.9 L69.0,15.5 L68.8,19.6 L68.5,16.3 L68.2,18.7 L68.0,29.3 L67.8,20.5 L67.5,13.1 L67.2,8.5 L67.0,7.0 L66.8,8.4 L66.5,7.7 L66.2,6.2 L66.0,5.3 L65.8,5.0 L65.5,6.9 L65.2,5.8 L65.0,7.1 L64.8,5.5 L64.5,8.0 L64.2,8.1 L64.0,5.8 L63.8,8.0 L63.5,8.8 L63.2,7.3 L63.0,7.9 L62.8,8.1 L62.5,8.7 L62.2,6.2 L62.0,7.0 L61.8,7.7 L61.5,7.8 L61.2,6.1 L61.0,6.2 L60.8,6.1 L60.5,7.4 L60.2,7.4 L60.0,11.3 L59.8,6.1 L59.5,6.6 L59.2,6.8 L59.0,9.1 L58.8,7.9 L58.5,8.1 L58.2,8.6 L58.0,7.5 L57.8,6.5 L57.5,8.1 L57.2,8.2 L57.0,7.9 L56.8,5.7 L56.5,8.7 L56.2,8.5 L56.0,6.0 L55.8,7.9 L55.5,10.0 L55.2,7.6 L55.0,8.6 L54.8,12.1 L54.5,13.4 L54.2,12.6 L54.0,17.3 L53.8,15.1 L53.5,24.6 L53.2,26.0 L53.0,24.6 L52.8,17.1 L52.5,13.8 L52.2,9.0 L52.0,6.1 L51.8,6.1 L51.5,6.9 L51.2,5.7 L51.0,8.1 L50.8,7.0 L50.5,8.5 L50.2,8.0 L50.0,7.3 L49.8,6.6 L49.5,6.1 L49.2,5.9 L49.0,6.7 L48.8,8.0 L48.5,6.9 L48.2,5.6 L48.0,7.9 L47.8,8.7 L47.5,7.9 L47.2,11.2 L47.0,10.9 L46.8,8.5 L46.5,7.0 L46.2,9.3 L46.0,7.4 L45.8,9.3 L45.5,8.2 L45.2,8.0 L45.0,8.1 L44.8,8.0 L44.5,7.0 L44.2,7.6 L44.0,6.7 L43.8,7.5 L43.5,9.5 L43.2,8.1 L43.0,6.4 L42.8,7.0 L42.5,7.6 L42.2,9.7 L42.0,12.0 L41.8,12.2 L41.5,10.4 L41.2,14.2 L41.0,15.4 L40.8,15.8 L40.5,19.4 L40.2,19.4 L40.0,23.5 L39.8,12.7 L39.5,9.2 L39.2,5.5 L39.0,3.6 L38.8,3.4 L38.5,3.7 L38.2,4.1 L38.0,3.3 L37.8,4.3 L37.5,3.5 L37.2,5.6 L37.0,5.2 L36.8,3.8 L36.5,4.1 L36.2,6.0 L36.0,4.1 L35.8,4.1 L35.5,5.2 L35.2,5.7 L35.0,4.7 L34.8,4.8 L34.5,4.5 L34.2,5.7 L34.0,5.9 L33.8,4.9 L33.5,4.0 L33.2,4.2 L33.0,6.3 L32.8,6.4 L32.5,4.4 L32.2,5.2 L32.0,5.2 L31.8,5.3 L31.5,3.9 L31.2,4.7 L31.0,4.7 L30.8,4.0 L30.5,4.6 L30.2,3.8 L30.0,3.3 L29.8,5.0 L29.5,3.9 L29.2,4.1 L29.0,4.3 L28.8,3.4 L28.5,4.7 L28.2,4.7 L28.0,3.4 L27.8,3.8 L27.5,4.4 L27.2,5.1 L27.0,3.9 L26.8,3.5 L26.5,5.2 L26.2,3.3 L26.0,4.0 L25.8,5.0 L25.5,4.5 L25.2,3.7 L25.0,3.7 L24.8,3.8 L24.5,4.6 L24.2,5.2 L24.0,3.8 L23.8,5.0 L23.5,4.9 L23.2,3.6 L23.0,4.5 L22.8,3.9 L22.5,5.1 L22.2,5.2 L22.0,4.3 L21.8,3.4 L21.5,3.8 L21.2,4.1 L21.0,4.3 L20.8,3.6 L20.5,4.6 L20.2,4.2 L20.0,4.9 L19.8,3.4 L19.5,6.1 L19.2,5.6 L19.0,7.3 L18.8,3.6 L18.5,4.7 L18.2,3.4 L18.0,3.6 L17.8,4.5 L17.5,3.6 L17.2,4.5 L17.0,3.0 L16.8,4.7 L16.5,4.4 L16.2,4.4 L16.0,4.2 L15.8,3.8 L15.5,3.8 L15.2,3.5 L15.0,3.4 L14.8,3.8 L14.5,3.4 L14.2,4.3 L14.0,3.3 L13.8,3.0 L13.5,2.9 L13.2,4.4 L13.0,3.9 L12.8,3.9 L12.5,3.4 L12.2,3.7 L12.0,3.5 L11.8,3.9 L11.5,3.4 L11.2,4.6 L11.0,3.4 L10.8,3.5 L10.5,4.1 L10.2,5.6 L10.0,6.3 L9.8,7.9 L9.5,7.9 L9.2,5.9 L9.0,9.3 L8.8,9.2 L8.5,12.5 L8.2,14.3 L8.0,15.0 L7.8,11.9 L7.5,6.9 L7.2,5.9 L7.0,2.7 L6.8,2.8 L6.5,2.5 L6.2,2.5 L6.0,3.2 L5.8,2.1 L5.5,2.0 L5.2,1.9 L5.0,2.4 L4.8,2.4 L4.5,2.5 L4.2,2.6 L4.0,2.4 L3.8,2.5 L3.5,2.6 L3.2,2.9 L3.0,2.1 L2.8,2.9 L2.5,2.6 L2.2,1.9 L2.0,2.3 L1.8,1.9 L1.5,2.3 L1.2,2.9 L1.0,2.7 L0.8,2.5 L0.5,2.1 L0.2,2.3 L0.0,2.5Z" fill="#ff9900"/></g><rect x="169.6" y="3" width="1" height="70" fill="#ff9900" fill-opacity="0.7"/></svg><div class="hot">Hot</div><div class="lbl">Ambient (0:14)</div></div>
<div class="card" style="left:617px;top:448px"><svg class="wf" width="171" height="109" viewBox="0 0 171 109"><rect x="0.5" y="38" width="54" height="37.5" fill="#c6c6c6"/><g transform="translate(1,56.5)"><path d="M4.1,-4.4V4.4M5.6,-4.3V4.2M7.1,-4.1V4.2M8.5,-3.7V3.7M9.1,-4.0V3.9M10.1,-3.7V3.6M13.3,-8.4V8.4M16.1,-5.9V5.7M18.3,-4.9V4.6M19.1,-4.3V4.2M21.4,-6.6V6.8M24.6,-5.1V4.9M25.5,-5.1V5.1M26.5,-6.7V7.1M34.3,-4.8V4.3M35.2,-4.1V4.2M37.4,-7.7V7.8M39.4,-6.3V6.5M41.3,-5.7V5.5M44.3,-6.5V6.6M45.4,-5.6V6.1M49.1,-4.8V5.0M50.4,-4.6V4.8M51.4,-4.3V4.3M61.4,-4.2V4.2M62.4,-6.3V6.5M64.4,-5.6V5.8M66.3,-4.9V5.2M68.5,-4.4V4.1M69.1,-3.7V3.9M72.3,-8.2V7.0M77.4,-4.7V4.2M78.5,-4.2V4.4M80.0,-3.8V4.4M85.0,-6.2V6.0M106.0,-6.5V6.5M107.2,-6.1V6.0M109.2,-5.0V5.4M112.5,-9.9V9.7M113.5,-8.4V7.8M115.0,-6.4V6.5M119.0,-4.8V4.3M122.1,-4.2V4.2M126.6,-7.9V7.3M127.5,-7.5V8.3M132.0,-5.1V5.3M133.1,-4.6V4.9M136.4,-4.0V4.4M137.4,-4.2V4.0M141.2,-7.7V6.9M143.1,-6.1V5.9M158.5,-8.2V8.0M162.5,-5.2V5.2M164.3,-4.8V4.4M167.1,-7.2V7.0M169.3,-5.8V5.5M170.5,-5.2V5.1" stroke="#ff9900" stroke-width="0.6" stroke-opacity="0.8" fill="none"/><path d="M0.0,-5.2 L0.5,-5.0 L1.0,-5.2 L1.5,-4.6 L2.0,-4.2 L2.5,-4.2 L3.0,-4.4 L3.5,-4.5 L4.0,-4.4 L4.5,-4.2 L5.0,-4.0 L5.5,-4.5 L6.0,-4.5 L6.5,-4.0 L7.0,-4.1 L7.5,-4.3 L8.0,-3.6 L8.5,-3.6 L9.0,-3.3 L9.5,-3.7 L10.0,-3.7 L10.5,-6.2 L11.0,-11.0 L11.5,-10.7 L12.0,-8.5 L12.5,-9.0 L13.0,-7.3 L13.5,-7.9 L14.0,-7.4 L14.5,-6.5 L15.0,-5.5 L15.5,-6.1 L16.0,-5.5 L16.5,-5.3 L17.0,-4.5 L17.5,-4.6 L18.0,-4.0 L18.5,-4.4 L19.0,-3.9 L19.5,-4.7 L20.0,-7.5 L20.5,-6.7 L21.0,-6.7 L21.5,-6.0 L22.0,-6.6 L22.5,-6.0 L23.0,-5.6 L23.5,-4.8 L24.0,-5.5 L24.5,-5.3 L25.0,-4.9 L25.5,-4.8 L26.0,-5.0 L26.5,-6.7 L27.0,-12.6 L27.5,-10.8 L28.0,-10.0 L28.5,-8.6 L29.0,-8.0 L29.5,-7.1 L30.0,-6.2 L30.5,-5.7 L31.0,-5.6 L31.5,-5.4 L32.0,-5.4 L32.5,-4.7 L33.0,-4.7 L33.5,-4.8 L34.0,-4.5 L34.5,-4.2 L35.0,-3.8 L35.5,-3.8 L36.0,-4.1 L36.5,-4.4 L37.0,-8.0 L37.5,-6.8 L38.0,-7.2 L38.5,-7.2 L39.0,-6.6 L39.5,-6.0 L40.0,-6.2 L40.5,-5.3 L41.0,-5.0 L41.5,-4.9 L42.0,-5.1 L42.5,-4.9 L43.0,-4.0 L43.5,-4.5 L44.0,-6.5 L44.5,-6.1 L45.0,-5.9 L45.5,-5.4 L46.0,-4.8 L46.5,-4.7 L47.0,-5.2 L47.5,-5.4 L48.0,-4.7 L48.5,-4.4 L49.0,-4.5 L49.5,-4.2 L50.0,-4.5 L50.5,-4.6 L51.0,-4.7 L51.5,-4.0 L52.0,-3.9 L52.5,-4.0 L53.0,-3.7 L53.5,-6.4 L54.0,-11.4 L54.5,-10.8 L55.0,-9.9 L55.5,-7.9 L56.0,-8.3 L56.5,-7.3 L57.0,-7.4 L57.5,-6.4 L58.0,-6.2 L58.5,-5.4 L59.0,-4.8 L59.5,-5.1 L60.0,-4.7 L60.5,-4.7 L61.0,-4.6 L61.5,-4.7 L62.0,-6.9 L62.5,-5.8 L63.0,-5.5 L63.5,-5.6 L64.0,-4.6 L64.5,-4.5 L65.0,-4.5 L65.5,-5.0 L66.0,-4.3 L66.5,-4.6 L67.0,-4.4 L67.5,-4.0 L68.0,-3.6 L68.5,-3.8 L69.0,-3.8 L69.5,-5.8 L70.0,-10.2 L70.5,-9.0 L71.0,-9.2 L71.5,-8.4 L72.0,-7.3 L72.5,-6.3 L73.0,-6.3 L73.5,-5.3 L74.0,-5.6 L74.5,-5.6 L75.0,-5.0 L75.5,-4.3 L76.0,-4.5 L76.5,-4.7 L77.0,-4.1 L77.5,-3.9 L78.0,-4.2 L78.5,-3.7 L79.0,-3.9 L79.5,-3.5 L80.0,-3.4 L80.5,-3.6 L81.0,-3.7 L81.5,-5.7 L82.0,-9.3 L82.5,-8.2 L83.0,-7.1 L83.5,-6.9 L84.0,-6.4 L84.5,-5.8 L85.0,-6.1 L85.5,-5.7 L86.0,-5.6 L86.5,-5.0 L87.0,-5.5 L87.5,-4.7 L88.0,-5.1 L88.5,-5.0 L89.0,-4.0 L89.5,-4.4 L90.0,-3.7 L90.5,-4.0 L91.0,-3.7 L91.5,-4.1 L92.0,-3.7 L92.5,-4.2 L93.0,-3.5 L93.5,-4.0 L94.0,-3.9 L94.5,-3.4 L95.0,-5.8 L95.5,-11.1 L96.0,-9.3 L96.5,-8.6 L97.0,-9.3 L97.5,-7.2 L98.0,-8.0 L98.5,-7.2 L99.0,-6.4 L99.5,-6.0 L100.0,-5.1 L100.5,-5.7 L101.0,-5.0 L101.5,-4.8 L102.0,-4.3 L102.5,-4.0 L103.0,-5.8 L103.5,-9.4 L104.0,-7.8 L104.5,-7.3 L105.0,-7.2 L105.5,-7.0 L106.0,-6.6 L106.5,-5.9 L107.0,-6.2 L107.5,-6.0 L108.0,-5.4 L108.5,-4.8 L109.0,-5.1 L109.5,-4.8 L110.0,-4.9 L110.5,-5.1 L111.0,-5.5 L111.5,-10.2 L112.0,-9.9 L112.5,-9.5 L113.0,-8.9 L113.5,-7.1 L114.0,-7.6 L114.5,-6.6 L115.0,-5.9 L115.5,-5.5 L116.0,-6.1 L116.5,-5.3 L117.0,-5.2 L117.5,-5.0 L118.0,-4.2 L118.5,-4.6 L119.0,-4.6 L119.5,-4.1 L120.0,-3.9 L120.5,-3.5 L121.0,-3.7 L121.5,-3.8 L122.0,-3.5 L122.5,-3.6 L123.0,-3.7 L123.5,-3.2 L124.0,-3.2 L124.5,-3.7 L125.0,-3.7 L125.5,-3.2 L126.0,-3.8 L126.5,-7.1 L127.0,-8.2 L127.5,-7.1 L128.0,-7.5 L128.5,-6.3 L129.0,-6.3 L129.5,-5.2 L130.0,-5.4 L130.5,-4.8 L131.0,-4.8 L131.5,-5.3 L132.0,-4.8 L132.5,-4.7 L133.0,-4.6 L133.5,-4.8 L134.0,-4.0 L134.5,-4.4 L135.0,-4.0 L135.5,-3.8 L136.0,-4.0 L136.5,-4.0 L137.0,-3.7 L137.5,-4.3 L138.0,-4.3 L138.5,-5.7 L139.0,-10.2 L139.5,-8.6 L140.0,-7.7 L140.5,-7.9 L141.0,-7.2 L141.5,-6.6 L142.0,-6.2 L142.5,-6.5 L143.0,-5.4 L143.5,-5.8 L144.0,-5.2 L144.5,-5.0 L145.0,-4.9 L145.5,-5.4 L146.0,-4.8 L146.5,-6.5 L147.0,-9.4 L147.5,-9.3 L148.0,-7.1 L148.5,-7.0 L149.0,-6.1 L149.5,-5.3 L150.0,-5.4 L150.5,-4.8 L151.0,-5.0 L151.5,-4.3 L152.0,-4.7 L152.5,-4.0 L153.0,-4.3 L153.5,-4.6 L154.0,-4.1 L154.5,-4.0 L155.0,-4.1 L155.5,-4.6 L156.0,-4.1 L156.5,-6.2 L157.0,-10.3 L157.5,-9.6 L158.0,-8.6 L158.5,-7.9 L159.0,-7.5 L159.5,-6.5 L160.0,-6.5 L160.5,-6.2 L161.0,-6.1 L161.5,-5.2 L162.0,-5.9 L162.5,-4.8 L163.0,-5.3 L163.5,-4.8 L164.0,-4.7 L164.5,-4.0 L165.0,-4.3 L165.5,-5.7 L166.0,-8.3 L166.5,-8.1 L167.0,-7.2 L167.5,-6.8 L168.0,-5.9 L168.5,-6.0 L169.0,-5.9 L169.5,-5.8 L170.0,-5.3 L170.0,5.2 L169.5,5.8 L169.0,5.9 L168.5,6.2 L168.0,6.4 L167.5,7.1 L167.0,7.5 L166.5,7.8 L166.0,9.4 L165.5,5.3 L165.0,4.1 L164.5,4.0 L164.0,4.6 L163.5,4.4 L163.0,4.5 L162.5,5.5 L162.0,5.1 L161.5,5.8 L161.0,6.3 L160.5,6.7 L160.0,6.5 L159.5,6.1 L159.0,7.7 L158.5,7.3 L158.0,9.2 L157.5,10.0 L157.0,9.9 L156.5,6.2 L156.0,4.1 L155.5,4.0 L155.0,4.6 L154.5,4.0 L154.0,4.5 L153.5,4.6 L153.0,4.6 L152.5,4.5 L152.0,4.4 L151.5,4.5 L151.0,4.6 L150.5,5.2 L150.0,4.8 L149.5,5.4 L149.0,6.7 L148.5,7.2 L148.0,7.8 L147.5,7.9 L147.0,8.8 L146.5,5.9 L146.0,4.9 L145.5,4.7 L145.0,5.2 L144.5,5.6 L144.0,5.4 L143.5,6.0 L143.0,6.2 L142.5,5.6 L142.0,6.7 L141.5,6.3 L141.0,6.8 L140.5,7.8 L140.0,7.8 L139.5,9.4 L139.0,10.6 L138.5,6.0 L138.0,3.6 L137.5,4.3 L137.0,3.8 L136.5,4.1 L136.0,4.0 L135.5,4.1 L135.0,3.8 L134.5,4.3 L134.0,3.9 L133.5,4.6 L133.0,5.0 L132.5,5.0 L132.0,5.1 L131.5,5.0 L131.0,5.1 L130.5,5.4 L130.0,5.2 L129.5,5.8 L129.0,6.0 L128.5,6.9 L128.0,7.2 L127.5,7.5 L127.0,9.0 L126.5,6.5 L126.0,3.2 L125.5,3.8 L125.0,3.6 L124.5,3.4 L124.0,3.3 L123.5,3.3 L123.0,3.4 L122.5,3.4 L122.0,3.8 L121.5,3.6 L121.0,3.8 L120.5,4.2 L120.0,4.0 L119.5,3.8 L119.0,4.0 L118.5,4.0 L118.0,4.7 L117.5,5.1 L117.0,5.6 L116.5,5.8 L116.0,5.7 L115.5,5.6 L115.0,6.2 L114.5,6.1 L114.0,6.9 L113.5,8.0 L113.0,9.3 L112.5,9.6 L112.0,11.1 L111.5,10.1 L111.0,5.8 L110.5,4.8 L110.0,4.5 L109.5,5.1 L109.0,4.6 L108.5,5.1 L108.0,5.8 L107.5,6.0 L107.0,6.0 L106.5,6.5 L106.0,6.6 L105.5,6.8 L105.0,6.4 L104.5,8.0 L104.0,8.2 L103.5,9.0 L103.0,5.7 L102.5,4.8 L102.0,4.6 L101.5,4.5 L101.0,5.3 L100.5,5.0 L100.0,5.9 L99.5,6.2 L99.0,6.5 L98.5,6.6 L98.0,7.3 L97.5,7.2 L97.0,9.2 L96.5,9.8 L96.0,9.4 L95.5,11.2 L95.0,6.4 L94.5,3.4 L94.0,3.5 L93.5,3.8 L93.0,3.8 L92.5,4.2 L92.0,4.0 L91.5,3.5 L91.0,3.9 L90.5,4.2 L90.0,4.3 L89.5,4.0 L89.0,4.1 L88.5,4.9 L88.0,4.4 L87.5,4.7 L87.0,5.6 L86.5,5.6 L86.0,5.9 L85.5,6.1 L85.0,6.1 L84.5,5.8 L84.0,6.6 L83.5,6.8 L83.0,7.6 L82.5,7.8 L82.0,8.2 L81.5,5.1 L81.0,3.7 L80.5,3.9 L80.0,3.6 L79.5,4.0 L79.0,4.1 L78.5,3.6 L78.0,3.8 L77.5,4.3 L77.0,3.8 L76.5,4.1 L76.0,4.9 L75.5,4.8 L75.0,5.2 L74.5,5.3 L74.0,5.5 L73.5,6.5 L73.0,6.4 L72.5,6.8 L72.0,7.4 L71.5,8.6 L71.0,8.0 L70.5,9.9 L70.0,9.7 L69.5,6.2 L69.0,3.7 L68.5,3.6 L68.0,3.7 L67.5,4.4 L67.0,4.6 L66.5,4.7 L66.0,4.7 L65.5,4.4 L65.0,4.7 L64.5,5.3 L64.0,5.5 L63.5,5.3 L63.0,5.6 L62.5,5.4 L62.0,6.8 L61.5,4.3 L61.0,4.2 L60.5,4.7 L60.0,4.3 L59.5,4.9 L59.0,5.3 L58.5,5.6 L58.0,6.4 L57.5,6.8 L57.0,6.7 L56.5,7.5 L56.0,7.3 L55.5,9.4 L55.0,10.2 L54.5,10.1 L54.0,11.6 L53.5,6.8 L53.0,3.8 L52.5,4.2 L52.0,3.7 L51.5,4.2 L51.0,4.5 L50.5,4.7 L50.0,4.6 L49.5,4.7 L49.0,4.4 L48.5,5.2 L48.0,5.0 L47.5,4.6 L47.0,5.0 L46.5,5.4 L46.0,5.7 L45.5,5.0 L45.0,6.1 L44.5,5.9 L44.0,6.8 L43.5,4.4 L43.0,4.2 L42.5,4.3 L42.0,5.0 L41.5,5.3 L41.0,4.8 L40.5,5.5 L40.0,6.1 L39.5,6.4 L39.0,6.0 L38.5,6.4 L38.0,6.9 L37.5,7.9 L37.0,7.3 L36.5,4.7 L36.0,3.6 L35.5,3.9 L35.0,4.1 L34.5,4.1 L34.0,3.9 L33.5,4.1 L33.0,4.6 L32.5,5.1 L32.0,5.2 L31.5,5.8 L31.0,5.0 L30.5,5.9 L30.0,6.3 L29.5,7.2 L29.0,7.3 L28.5,9.0 L28.0,9.0 L27.5,11.0 L27.0,12.2 L26.5,7.0 L26.0,4.1 L25.5,4.5 L25.0,4.7 L24.5,4.4 L24.0,5.3 L23.5,4.8 L23.0,5.1 L22.5,6.0 L22.0,6.7 L21.5,6.3 L21.0,7.0 L20.5,6.9 L20.0,7.8 L19.5,4.5 L19.0,4.4 L18.5,4.2 L18.0,4.3 L17.5,4.1 L17.0,4.4 L16.5,5.0 L16.0,5.0 L15.5,5.3 L15.0,5.4 L14.5,6.3 L14.0,7.3 L13.5,6.8 L13.0,8.2 L12.5,8.0 L12.0,9.9 L11.5,9.4 L11.0,11.2 L10.5,6.9 L10.0,3.5 L9.5,3.4 L9.0,3.3 L8.5,3.6 L8.0,4.0 L7.5,3.7 L7.0,3.7 L6.5,4.4 L6.0,3.9 L5.5,4.0 L5.0,4.6 L4.5,4.0 L4.0,4.0 L3.5,4.0 L3.0,4.1 L2.5,4.6 L2.0,4.9 L1.5,4.4 L1.0,4.6 L0.5,5.7 L0.0,5.0Z" fill="#ff9900"/></g><rect x="169.6" y="38.0" width="1" height="37.0" fill="#ff9900" fill-opacity="0.7"/></svg><div class="fmt mp3">MP3</div><div class="fmt wav">WAV</div><div class="fmt plus"><span class="pl"></span></div><div class="lbl dl">Download WAV file</div></div>
<div class="card" style="left:812px;top:448px"><svg class="wf" width="171" height="109" viewBox="0 0 171 109"><g transform="translate(1,38)"><path d="M0.4,-15.4V16.8M1.2,-17.8V17.9M2.3,-7.8V7.8M3.3,-5.9V6.2M6.6,-4.0V4.0M17.5,-2.5V2.3M19.4,-2.4V2.4M20.4,-2.6V2.7M21.3,-2.6V2.6M22.3,-25.7V24.7M23.6,-9.2V9.5M24.6,-6.7V6.0M27.3,-4.4V4.3M32.1,-3.2V2.9M33.5,-2.8V2.9M34.0,-2.9V2.7M35.1,-2.8V2.5M38.4,-2.4V2.7M39.1,-2.5V2.6M44.2,-15.9V17.0M46.0,-6.0V6.2M48.2,-4.1V4.3M52.4,-3.0V3.0M59.4,-2.7V2.5M61.6,-2.4V2.4M62.5,-2.6V2.6M64.4,-18.0V17.7M65.5,-15.1V15.9M66.6,-7.1V6.7M71.6,-3.4V3.5M72.4,-3.2V3.5M73.4,-3.3V3.4M75.2,-3.3V3.0M76.1,-3.1V3.1M81.4,-2.4V2.6M84.4,-2.8V2.8M87.2,-10.5V11.3M89.3,-4.9V5.3M90.3,-4.5V4.2M92.2,-4.1V3.8M93.2,-3.5V3.3M95.2,-2.8V2.8M98.2,-2.8V2.6M99.2,-2.7V2.5M104.5,-2.4V2.3M105.4,-2.3V2.3M106.3,-2.6V2.6M107.4,-22.5V21.6M110.5,-4.9V4.7M111.5,-4.1V4.1M119.0,-2.8V2.8M122.0,-2.6V2.5M123.0,-2.7V2.5M124.4,-2.7V2.5M126.5,-2.7V2.7M128.2,-26.7V26.4M133.1,-4.5V4.3M135.0,-3.5V3.4M143.2,-2.9V2.9M145.3,-2.7V2.7M147.4,-2.7V2.6M148.5,-2.9V2.9M149.2,-23.7V26.5M150.2,-11.3V11.9M152.0,-5.9V5.9M153.0,-5.4V5.4M155.2,-4.2V3.8M156.6,-3.8V3.6M158.1,-3.1V3.3M159.1,-3.9V3.8M162.2,-5.6V6.1M167.4,-3.2V3.6M168.1,-3.0V3.3M169.5,-3.2V2.8" stroke="#ff9900" stroke-width="0.6" stroke-opacity="0.8" fill="none"/><path d="M0.0,-2.3 L0.5,-24.2 L1.0,-20.8 L1.5,-13.9 L2.0,-10.4 L2.5,-6.7 L3.0,-6.5 L3.5,-5.4 L4.0,-5.5 L4.5,-4.9 L5.0,-4.4 L5.5,-4.9 L6.0,-4.6 L6.5,-4.3 L7.0,-3.4 L7.5,-3.8 L8.0,-3.1 L8.5,-2.9 L9.0,-2.6 L9.5,-2.9 L10.0,-3.0 L10.5,-2.3 L11.0,-2.7 L11.5,-2.6 L12.0,-2.4 L12.5,-2.5 L13.0,-2.7 L13.5,-2.2 L14.0,-2.6 L14.5,-2.7 L15.0,-2.5 L15.5,-2.2 L16.0,-2.2 L16.5,-2.4 L17.0,-2.5 L17.5,-2.2 L18.0,-2.5 L18.5,-2.4 L19.0,-2.6 L19.5,-2.3 L20.0,-2.6 L20.5,-2.5 L21.0,-2.4 L21.5,-2.5 L22.0,-31.0 L22.5,-21.4 L23.0,-14.9 L23.5,-9.8 L24.0,-6.0 L24.5,-5.8 L25.0,-5.9 L25.5,-5.4 L26.0,-4.9 L26.5,-4.5 L27.0,-4.2 L27.5,-4.3 L28.0,-3.5 L28.5,-3.8 L29.0,-3.6 L29.5,-3.3 L30.0,-3.2 L30.5,-2.9 L31.0,-2.9 L31.5,-2.9 L32.0,-2.6 L32.5,-2.7 L33.0,-2.8 L33.5,-3.0 L34.0,-2.8 L34.5,-2.5 L35.0,-2.7 L35.5,-2.4 L36.0,-2.5 L36.5,-2.3 L37.0,-2.3 L37.5,-2.4 L38.0,-2.4 L38.5,-2.3 L39.0,-2.3 L39.5,-2.3 L40.0,-2.1 L40.5,-2.3 L41.0,-2.0 L41.5,-2.1 L42.0,-2.2 L42.5,-2.4 L43.0,-5.3 L43.5,-27.0 L44.0,-18.7 L44.5,-12.4 L45.0,-8.3 L45.5,-6.4 L46.0,-5.8 L46.5,-4.9 L47.0,-4.6 L47.5,-4.4 L48.0,-4.4 L48.5,-4.2 L49.0,-4.0 L49.5,-3.4 L50.0,-3.9 L50.5,-3.9 L51.0,-3.4 L51.5,-3.0 L52.0,-3.3 L52.5,-2.7 L53.0,-2.7 L53.5,-2.7 L54.0,-2.7 L54.5,-2.5 L55.0,-2.6 L55.5,-2.6 L56.0,-2.6 L56.5,-2.5 L57.0,-2.6 L57.5,-2.4 L58.0,-2.5 L58.5,-2.6 L59.0,-2.5 L59.5,-2.3 L60.0,-2.5 L60.5,-2.1 L61.0,-2.1 L61.5,-2.1 L62.0,-2.2 L62.5,-2.4 L63.0,-2.6 L63.5,-2.5 L64.0,-2.1 L64.5,-25.3 L65.0,-19.9 L65.5,-14.5 L66.0,-9.7 L66.5,-6.1 L67.0,-6.7 L67.5,-5.8 L68.0,-4.8 L68.5,-5.0 L69.0,-4.3 L69.5,-3.6 L70.0,-3.9 L70.5,-3.7 L71.0,-3.2 L71.5,-3.6 L72.0,-2.8 L72.5,-3.1 L73.0,-2.8 L73.5,-3.1 L74.0,-3.0 L74.5,-3.2 L75.0,-3.0 L75.5,-3.1 L76.0,-2.6 L76.5,-2.8 L77.0,-2.6 L77.5,-2.5 L78.0,-2.4 L78.5,-2.5 L79.0,-2.4 L79.5,-2.3 L80.0,-2.2 L80.5,-2.2 L81.0,-2.3 L81.5,-2.3 L82.0,-2.1 L82.5,-2.2 L83.0,-2.6 L83.5,-2.6 L84.0,-2.5 L84.5,-2.8 L85.0,-2.4 L85.5,-12.6 L86.0,-26.1 L86.5,-17.6 L87.0,-11.8 L87.5,-7.8 L88.0,-6.8 L88.5,-5.8 L89.0,-5.2 L89.5,-4.8 L90.0,-4.1 L90.5,-3.6 L91.0,-4.2 L91.5,-4.1 L92.0,-3.3 L92.5,-3.4 L93.0,-3.2 L93.5,-2.9 L94.0,-2.8 L94.5,-2.7 L95.0,-3.0 L95.5,-2.7 L96.0,-2.9 L96.5,-2.4 L97.0,-2.8 L97.5,-2.5 L98.0,-2.3 L98.5,-2.6 L99.0,-2.6 L99.5,-2.5 L100.0,-2.2 L100.5,-2.3 L101.0,-2.7 L101.5,-2.4 L102.0,-2.5 L102.5,-2.4 L103.0,-2.6 L103.5,-2.4 L104.0,-2.5 L104.5,-2.3 L105.0,-2.1 L105.5,-2.0 L106.0,-2.3 L106.5,-2.6 L107.0,-27.5 L107.5,-20.6 L108.0,-14.4 L108.5,-9.8 L109.0,-6.1 L109.5,-5.2 L110.0,-4.6 L110.5,-4.3 L111.0,-4.0 L111.5,-4.1 L112.0,-4.2 L112.5,-4.1 L113.0,-3.4 L113.5,-3.2 L114.0,-3.4 L114.5,-3.4 L115.0,-3.0 L115.5,-3.0 L116.0,-2.7 L116.5,-2.9 L117.0,-3.0 L117.5,-2.8 L118.0,-2.9 L118.5,-3.1 L119.0,-2.5 L119.5,-2.5 L120.0,-2.2 L120.5,-2.7 L121.0,-2.6 L121.5,-2.2 L122.0,-2.2 L122.5,-2.4 L123.0,-2.5 L123.5,-2.5 L124.0,-2.6 L124.5,-2.1 L125.0,-2.6 L125.5,-2.4 L126.0,-2.2 L126.5,-2.2 L127.0,-2.6 L127.5,-2.4 L128.0,-27.9 L128.5,-20.0 L129.0,-14.0 L129.5,-9.0 L130.0,-6.3 L130.5,-5.3 L131.0,-5.3 L131.5,-5.1 L132.0,-5.2 L132.5,-4.3 L133.0,-3.9 L133.5,-4.2 L134.0,-3.7 L134.5,-3.0 L135.0,-2.9 L135.5,-3.2 L136.0,-2.9 L136.5,-3.0 L137.0,-2.8 L137.5,-3.3 L138.0,-3.1 L138.5,-2.7 L139.0,-2.9 L139.5,-2.6 L140.0,-2.9 L140.5,-3.1 L141.0,-2.5 L141.5,-2.6 L142.0,-3.0 L142.5,-2.7 L143.0,-2.9 L143.5,-2.5 L144.0,-2.9 L144.5,-2.3 L145.0,-2.3 L145.5,-2.3 L146.0,-2.3 L146.5,-2.7 L147.0,-2.5 L147.5,-2.2 L148.0,-2.5 L148.5,-2.1 L149.0,-30.8 L149.5,-16.8 L150.0,-13.8 L150.5,-9.0 L151.0,-6.4 L151.5,-5.9 L152.0,-5.8 L152.5,-5.5 L153.0,-5.1 L153.5,-4.9 L154.0,-4.0 L154.5,-4.4 L155.0,-4.1 L155.5,-3.3 L156.0,-3.2 L156.5,-3.8 L157.0,-3.6 L157.5,-3.1 L158.0,-3.2 L158.5,-2.7 L159.0,-2.7 L159.5,-29.7 L160.0,-20.5 L160.5,-12.1 L161.0,-7.6 L161.5,-5.7 L162.0,-5.2 L162.5,-4.7 L163.0,-4.2 L163.5,-4.6 L164.0,-3.7 L164.5,-3.8 L165.0,-3.6 L165.5,-3.5 L166.0,-3.1 L166.5,-3.7 L167.0,-3.6 L167.5,-3.3 L168.0,-2.7 L168.5,-3.1 L169.0,-2.6 L169.5,-2.8 L170.0,-2.6 L170.0,3.1 L169.5,2.5 L169.0,3.1 L168.5,3.1 L168.0,3.4 L167.5,2.9 L167.0,3.4 L166.5,3.5 L166.0,3.2 L165.5,3.4 L165.0,3.4 L164.5,3.8 L164.0,4.2 L163.5,5.0 L163.0,4.3 L162.5,4.6 L162.0,5.7 L161.5,5.8 L161.0,9.2 L160.5,13.4 L160.0,18.2 L159.5,30.1 L159.0,2.9 L158.5,3.3 L158.0,3.3 L157.5,3.4 L157.0,3.7 L156.5,3.6 L156.0,3.4 L155.5,3.3 L155.0,3.8 L154.5,3.8 L154.0,4.4 L153.5,4.0 L153.0,5.1 L152.5,4.8 L152.0,5.2 L151.5,6.1 L151.0,5.7 L150.5,7.8 L150.0,11.9 L149.5,17.7 L149.0,25.4 L148.5,2.3 L148.0,2.6 L147.5,2.3 L147.0,2.2 L146.5,2.7 L146.0,2.5 L145.5,2.4 L145.0,2.7 L144.5,2.9 L144.0,2.5 L143.5,2.6 L143.0,2.4 L142.5,2.4 L142.0,2.8 L141.5,3.1 L141.0,2.6 L140.5,2.7 L140.0,2.7 L139.5,2.7 L139.0,3.2 L138.5,3.3 L138.0,3.0 L137.5,3.1 L137.0,2.7 L136.5,3.3 L136.0,3.2 L135.5,2.8 L135.0,3.0 L134.5,3.4 L134.0,3.7 L133.5,4.1 L133.0,3.7 L132.5,4.3 L132.0,4.9 L131.5,4.8 L131.0,5.0 L130.5,5.4 L130.0,6.2 L129.5,8.1 L129.0,13.5 L128.5,21.3 L128.0,30.0 L127.5,2.5 L127.0,2.6 L126.5,2.4 L126.0,2.2 L125.5,2.2 L125.0,2.5 L124.5,2.7 L124.0,2.3 L123.5,2.3 L123.0,2.7 L122.5,2.6 L122.0,2.2 L121.5,2.7 L121.0,2.3 L120.5,2.6 L120.0,2.4 L119.5,2.8 L119.0,2.9 L118.5,3.0 L118.0,2.8 L117.5,3.0 L117.0,3.0 L116.5,2.7 L116.0,3.2 L115.5,2.9 L115.0,3.3 L114.5,3.4 L114.0,3.4 L113.5,3.4 L113.0,3.7 L112.5,3.4 L112.0,4.2 L111.5,3.8 L111.0,4.8 L110.5,4.9 L110.0,5.8 L109.5,5.2 L109.0,6.0 L108.5,9.3 L108.0,14.1 L107.5,19.6 L107.0,30.1 L106.5,2.2 L106.0,2.3 L105.5,2.4 L105.0,2.4 L104.5,2.4 L104.0,2.3 L103.5,2.5 L103.0,2.4 L102.5,2.2 L102.0,2.4 L101.5,2.2 L101.0,2.5 L100.5,2.7 L100.0,2.5 L99.5,2.7 L99.0,2.3 L98.5,2.5 L98.0,2.7 L97.5,2.4 L97.0,2.8 L96.5,2.8 L96.0,2.4 L95.5,2.8 L95.0,2.7 L94.5,2.7 L94.0,2.9 L93.5,2.9 L93.0,3.3 L92.5,3.3 L92.0,3.9 L91.5,4.1 L91.0,3.8 L90.5,4.5 L90.0,4.1 L89.5,5.0 L89.0,5.4 L88.5,6.1 L88.0,6.0 L87.5,8.5 L87.0,12.0 L86.5,19.7 L86.0,29.1 L85.5,12.5 L85.0,2.6 L84.5,2.4 L84.0,2.4 L83.5,2.3 L83.0,2.7 L82.5,2.3 L82.0,2.4 L81.5,2.4 L81.0,2.2 L80.5,2.2 L80.0,2.6 L79.5,2.3 L79.0,2.2 L78.5,2.3 L78.0,2.5 L77.5,2.9 L77.0,2.6 L76.5,2.8 L76.0,2.9 L75.5,3.0 L75.0,2.7 L74.5,2.8 L74.0,3.3 L73.5,2.7 L73.0,2.9 L72.5,2.9 L72.0,3.2 L71.5,3.2 L71.0,3.6 L70.5,3.3 L70.0,3.9 L69.5,3.8 L69.0,3.6 L68.5,4.6 L68.0,4.7 L67.5,6.0 L67.0,6.8 L66.5,6.9 L66.0,9.6 L65.5,14.9 L65.0,22.7 L64.5,22.8 L64.0,2.2 L63.5,2.6 L63.0,2.6 L62.5,2.4 L62.0,2.1 L61.5,2.0 L61.0,2.1 L60.5,2.1 L60.0,2.5 L59.5,2.4 L59.0,2.4 L58.5,2.7 L58.0,2.7 L57.5,2.8 L57.0,2.8 L56.5,2.5 L56.0,2.7 L55.5,2.6 L55.0,2.7 L54.5,2.6 L54.0,2.6 L53.5,2.4 L53.0,3.0 L52.5,2.7 L52.0,3.0 L51.5,3.0 L51.0,3.1 L50.5,3.2 L50.0,3.4 L49.5,4.0 L49.0,3.6 L48.5,3.8 L48.0,4.4 L47.5,3.9 L47.0,5.4 L46.5,5.0 L46.0,6.4 L45.5,6.4 L45.0,8.6 L44.5,13.1 L44.0,19.4 L43.5,28.3 L43.0,5.0 L42.5,2.5 L42.0,2.1 L41.5,2.4 L41.0,2.4 L40.5,2.1 L40.0,2.2 L39.5,2.2 L39.0,2.4 L38.5,2.5 L38.0,2.4 L37.5,2.6 L37.0,2.4 L36.5,2.5 L36.0,2.2 L35.5,2.6 L35.0,2.3 L34.5,2.6 L34.0,2.4 L33.5,2.7 L33.0,2.6 L32.5,2.7 L32.0,2.8 L31.5,3.3 L31.0,2.9 L30.5,3.3 L30.0,3.2 L29.5,3.0 L29.0,3.9 L28.5,3.9 L28.0,3.7 L27.5,3.7 L27.0,4.1 L26.5,4.3 L26.0,5.1 L25.5,4.8 L25.0,5.7 L24.5,6.7 L24.0,6.4 L23.5,8.9 L23.0,13.7 L22.5,21.9 L22.0,32.4 L21.5,2.2 L21.0,2.6 L20.5,2.4 L20.0,2.6 L19.5,2.4 L19.0,2.5 L18.5,2.5 L18.0,2.3 L17.5,2.3 L17.0,2.3 L16.5,2.1 L16.0,2.5 L15.5,2.3 L15.0,2.5 L14.5,2.4 L14.0,2.3 L13.5,2.3 L13.0,2.6 L12.5,2.3 L12.0,2.4 L11.5,2.3 L11.0,2.8 L10.5,2.5 L10.0,2.7 L9.5,3.1 L9.0,2.6 L8.5,2.9 L8.0,3.4 L7.5,3.0 L7.0,3.9 L6.5,3.8 L6.0,3.8 L5.5,4.4 L5.0,4.7 L4.5,4.6 L4.0,4.8 L3.5,5.5 L3.0,5.5 L2.5,6.1 L2.0,8.8 L1.5,13.8 L1.0,19.3 L0.5,22.0 L0.0,2.0Z" fill="#ff9900"/></g><rect x="169.6" y="3" width="1" height="70" fill="#ff9900" fill-opacity="0.7"/></svg><div class="lbl">a minor scary piano hip h... (0:15)</div></div>
</body></html>
